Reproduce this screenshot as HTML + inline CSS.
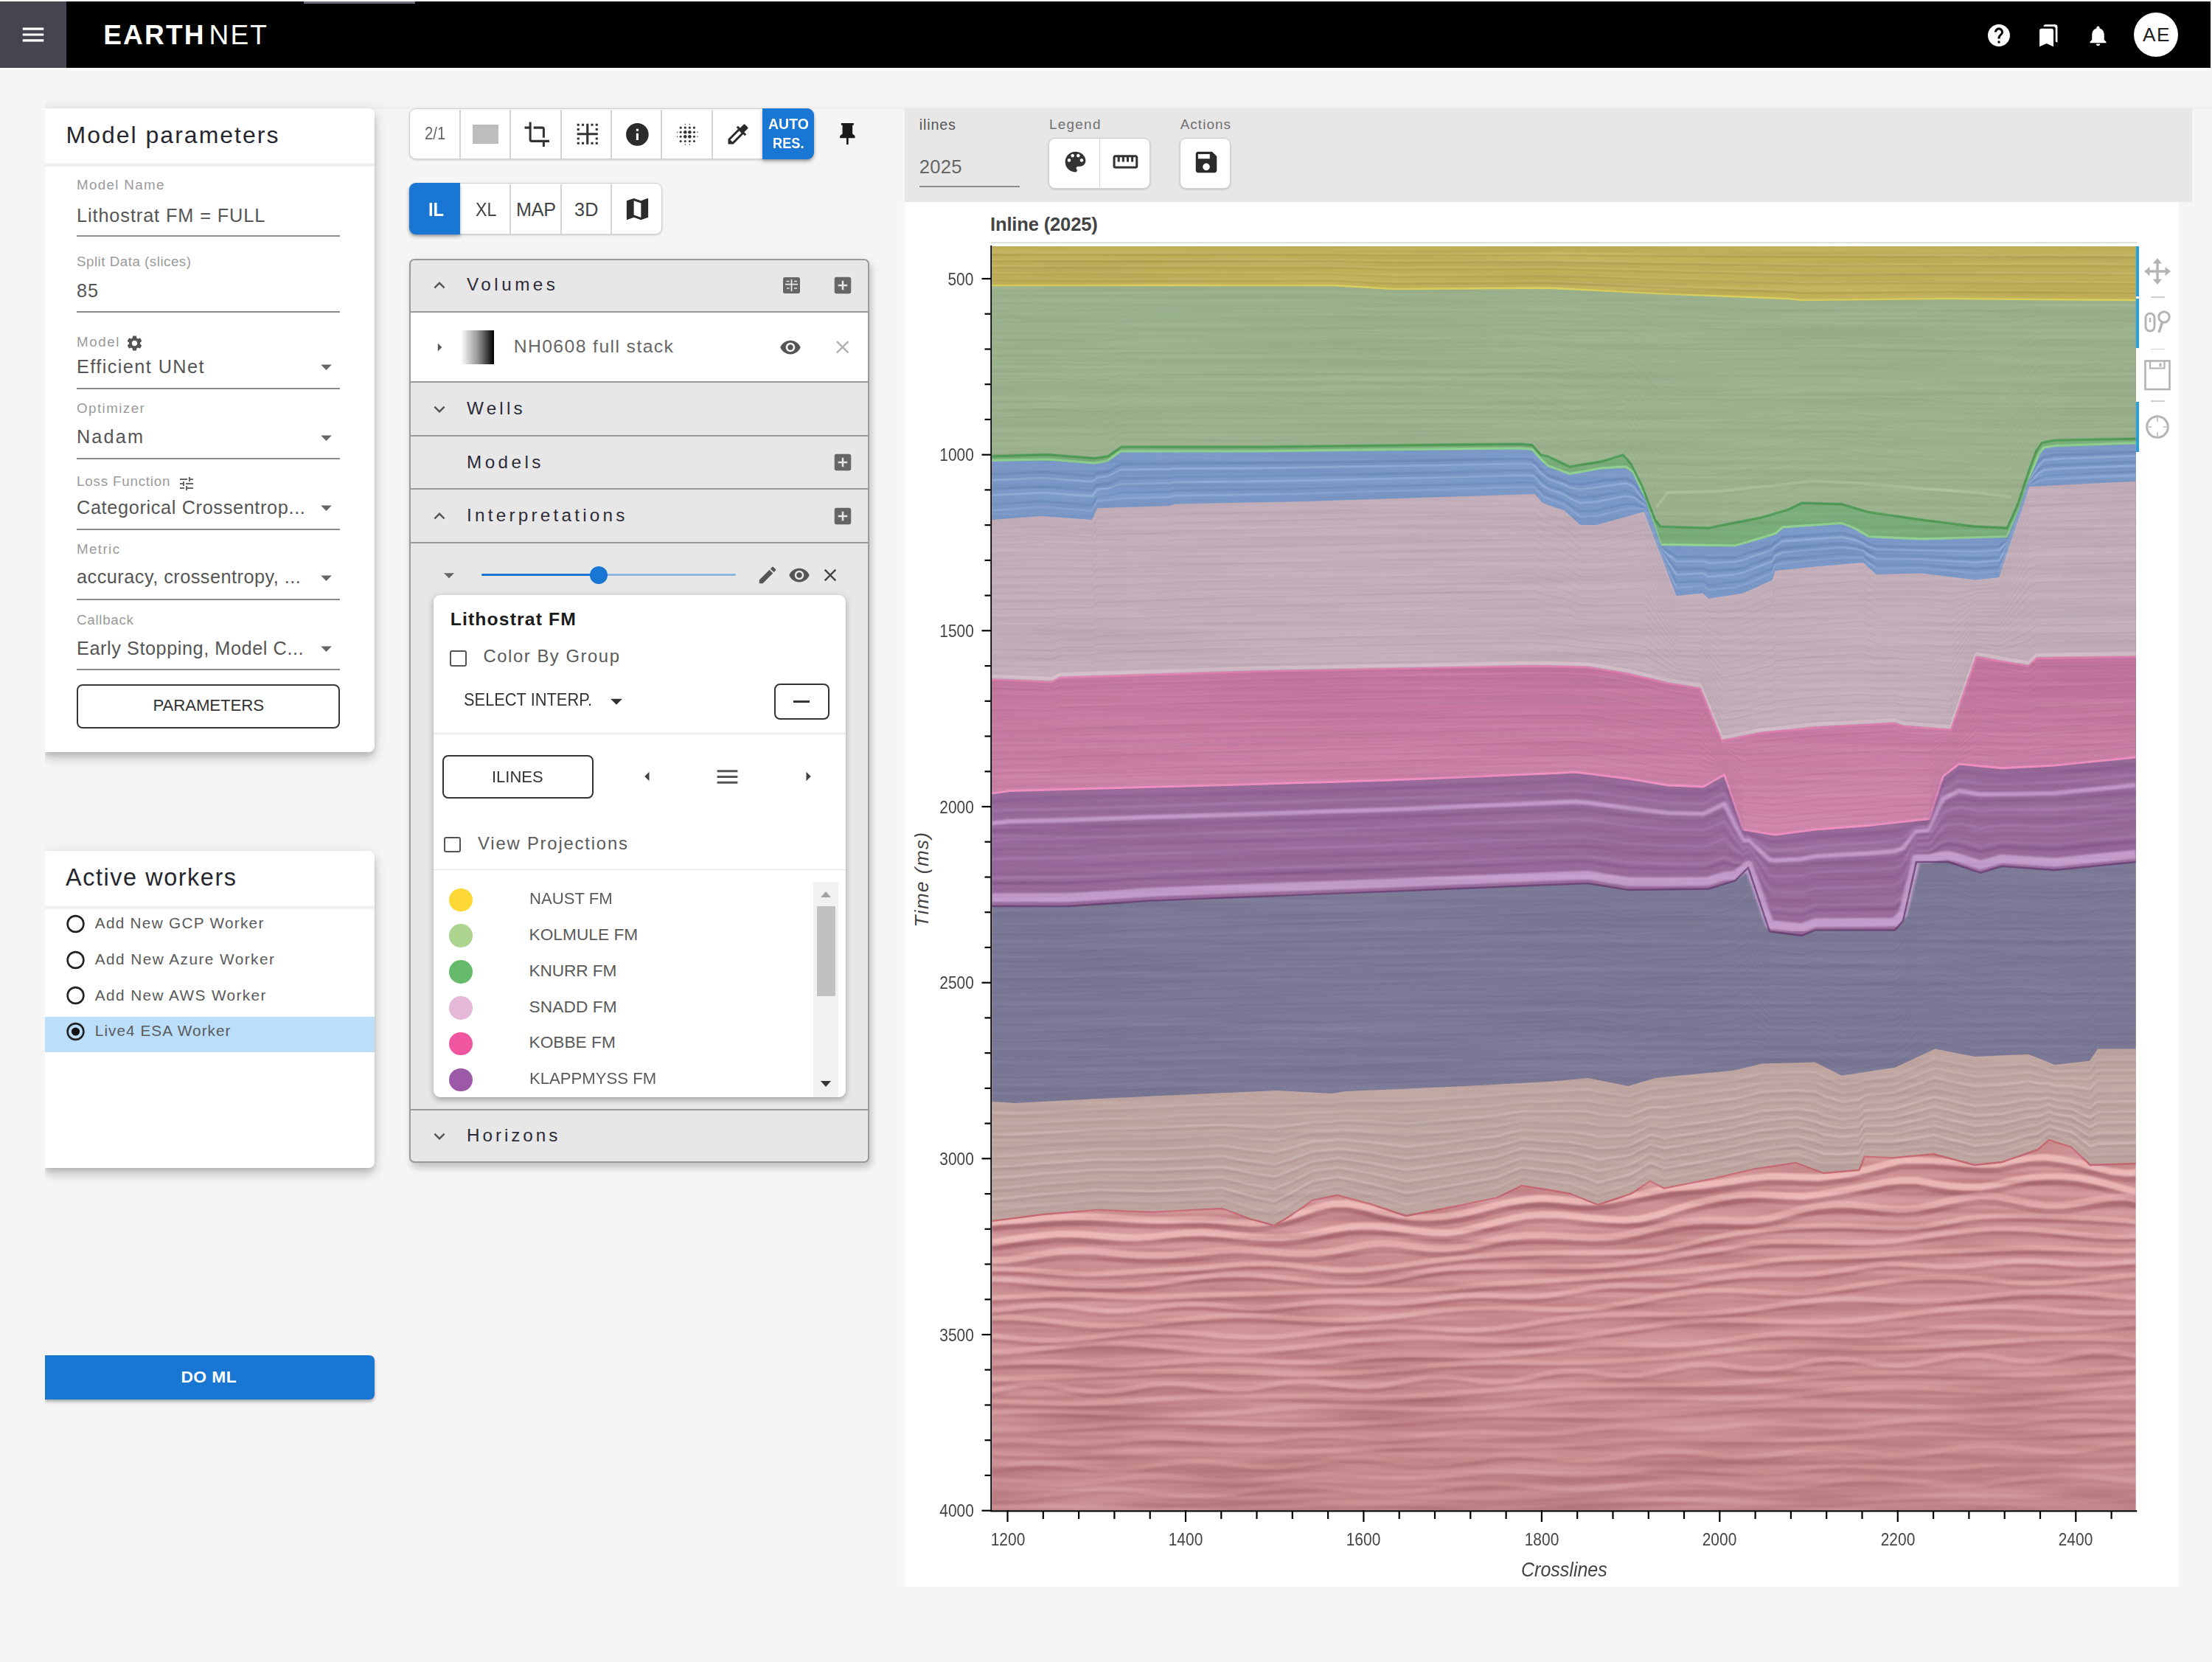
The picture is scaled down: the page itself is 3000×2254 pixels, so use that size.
<!DOCTYPE html>
<html lang="en"><head><meta charset="utf-8"><title>EarthNET</title><style>
html,body{margin:0;padding:0}
body{width:3000px;height:2254px;overflow:hidden;background:#f5f5f5;position:relative;font-family:"Liberation Sans",sans-serif}
.t{position:absolute;white-space:nowrap;line-height:1;margin:0;padding:0}
.b{position:absolute;display:block}
.clipL{position:absolute;left:61px;top:92px;width:2939px;height:2162px;overflow:hidden}
.clipL>*{margin-left:-61px;margin-top:-92px}
</style></head><body>
<div class="b" style="left:0.00px;top:2.00px;width:2998.00px;height:90.00px;background:#000"></div>
<div class="b" style="left:0.00px;top:2.00px;width:90.00px;height:90.00px;background:#45444f"></div>
<div class="b" style="left:412.00px;top:2.00px;width:151.00px;height:3.00px;background:#6f6e78"></div>
<svg class="b" style="left:26.00px;top:28.00px" width="38.00" height="38.00" viewBox="0 0 24 24"><path fill="#fff" d="M3 18h18v-2H3v2zm0-5h18v-2H3v2zm0-7v2h18V6H3z"/></svg>
<div class="t" style="font-size:37.06px;color:#fff;letter-spacing:2.184px;top:28.82px;font-weight:700;left:140.20px;">EARTH</div>
<div class="t" style="font-size:37.06px;color:#fff;letter-spacing:2.235px;top:28.82px;left:283.40px;">NET</div>
<svg class="b" style="left:2692.50px;top:29.50px" width="36.00" height="36.00" viewBox="0 0 24 24"><path fill="#fff" d="M12 2C6.48 2 2 6.48 2 12s4.48 10 10 10 10-4.48 10-10S17.52 2 12 2zm1 17h-2v-2h2v2zm2.07-7.75l-.9.92C13.45 12.9 13 13.5 13 15h-2v-.5c0-1.1.45-2.1 1.17-2.83l1.24-1.26c.37-.36.59-.86.59-1.41 0-1.1-.9-2-2-2s-2 .9-2 2H8c0-2.21 1.79-4 4-4s4 1.79 4 4c0 .88-.36 1.68-.93 2.25z"/></svg>
<svg class="b" style="left:2761.75px;top:31.75px" width="32.50" height="32.50" viewBox="0 0 24 24"><path fill="#fff" d="M19 18l2 1V3c0-1.1-.9-2-2-2H8.99C7.89 1 7 1.9 7 3h10c1.1 0 2 .9 2 2v13zM15 5H5c-1.1 0-2 .9-2 2v16l7-3 7 3V7c0-1.1-.9-2-2-2z"/></svg>
<svg class="b" style="left:2829.00px;top:31.50px" width="33.00" height="33.00" viewBox="0 0 24 24"><path fill="#fff" d="M12 22c1.1 0 2-.9 2-2h-4c0 1.1.89 2 2 2zm6-6v-5c0-3.07-1.64-5.64-4.5-6.32V4c0-.83-.67-1.5-1.5-1.5s-1.5.67-1.5 1.5v.68C7.63 5.36 6 7.92 6 11v5l-2 2v1h16v-1l-2-2z"/></svg>
<div class="b" style="left:2894.30px;top:17.00px;width:60.00px;height:60.00px;background:#fff;border-radius:50%"></div>
<div class="t" style="font-size:26.16px;color:#222;letter-spacing:1.500px;top:33.85px;left:2924.30px;width:0;display:flex;justify-content:center;"><span style="margin-right:-1.500px">AE</span></div>
<div class="b" style="left:0.00px;top:92.00px;width:3000.00px;height:5.00px;background:linear-gradient(#fdfdfd,#f5f5f5)"></div>
<div class="b" style="left:61.00px;top:136.00px;width:2939.00px;height:12.00px;background:linear-gradient(#f5f5f5,#eeeeee)"></div>
<div class="clipL">
<div class="b" style="left:61.00px;top:147.00px;width:447.00px;height:873.00px;background:#fff;border-radius:0 8px 8px 0;box-shadow:0 10px 14px rgba(0,0,0,.13),0 3px 20px rgba(0,0,0,.10),0 4px 6px rgba(0,0,0,.10)"></div>
<div class="b" style="left:61.00px;top:220.00px;width:447.00px;height:6.00px;background:linear-gradient(#fff,#ececec 60%,#f4f4f4)"></div>
<div class="t" style="font-size:31.98px;color:#26262e;letter-spacing:2.019px;top:166.93px;left:89.50px;">Model parameters</div>
<div class="t" style="font-size:18.75px;color:#9a9a9a;letter-spacing:1.345px;top:242.13px;left:104.00px;">Model Name</div>
<div class="t" style="font-size:25.29px;color:#555;letter-spacing:0.903px;top:279.59px;left:104.00px;">Lithostrat FM = FULL</div>
<div class="b" style="left:103.60px;top:318.50px;width:357.60px;height:2.00px;background:#8c8c8c"></div>
<div class="t" style="font-size:18.75px;color:#9a9a9a;letter-spacing:0.507px;top:346.13px;left:104.00px;">Split Data (slices)</div>
<div class="t" style="font-size:25.29px;color:#555;letter-spacing:0.868px;top:381.89px;left:104.00px;">85</div>
<div class="b" style="left:103.60px;top:422.00px;width:357.60px;height:2.00px;background:#8c8c8c"></div>
<div class="t" style="font-size:18.75px;color:#9a9a9a;letter-spacing:1.582px;top:455.13px;left:104.00px;">Model</div>
<div class="t" style="font-size:25.29px;color:#555;letter-spacing:1.419px;top:484.59px;left:104.00px;">Efficient UNet</div>
<div class="b" style="left:103.60px;top:525.60px;width:357.60px;height:2.00px;background:#8c8c8c"></div>
<svg class="b" style="left:424.80px;top:480.20px" width="35.00" height="35.00" viewBox="0 0 24 24"><path fill="#666" d="M7 10l5 5 5-5z"/></svg>
<svg class="b" style="left:169.50px;top:452.50px" width="25.00" height="25.00" viewBox="0 0 24 24"><path fill="#555" d="M19.14 12.94c.04-.3.06-.61.06-.94 0-.32-.02-.64-.07-.94l2.03-1.58c.18-.14.23-.41.12-.61l-1.92-3.32c-.12-.22-.37-.29-.59-.22l-2.39.96c-.5-.38-1.03-.7-1.62-.94l-.36-2.54c-.04-.24-.24-.41-.48-.41h-3.84c-.24 0-.43.17-.47.41l-.36 2.54c-.59.24-1.13.57-1.62.94l-2.39-.96c-.22-.08-.47 0-.59.22L2.74 8.87c-.12.21-.08.47.12.61l2.03 1.58c-.05.3-.09.63-.09.94s.02.64.07.94l-2.03 1.58c-.18.14-.23.41-.12.61l1.92 3.32c.12.22.37.29.59.22l2.39-.96c.5.38 1.03.7 1.62.94l.36 2.54c.05.24.24.41.48.41h3.84c.24 0 .44-.17.47-.41l.36-2.54c.59-.24 1.13-.56 1.62-.94l2.39.96c.22.08.47 0 .59-.22l1.92-3.32c.12-.22.07-.47-.12-.61l-2.01-1.58zM12 15.6c-1.98 0-3.6-1.62-3.6-3.6s1.62-3.6 3.6-3.6 3.6 1.62 3.6 3.6-1.62 3.6-3.6 3.6z"/></svg>
<div class="t" style="font-size:18.75px;color:#9a9a9a;letter-spacing:1.447px;top:545.13px;left:104.00px;">Optimizer</div>
<div class="t" style="font-size:25.29px;color:#555;letter-spacing:2.117px;top:580.29px;left:104.00px;">Nadam</div>
<div class="b" style="left:103.60px;top:621.00px;width:357.60px;height:2.00px;background:#8c8c8c"></div>
<svg class="b" style="left:424.80px;top:575.90px" width="35.00" height="35.00" viewBox="0 0 24 24"><path fill="#666" d="M7 10l5 5 5-5z"/></svg>
<div class="t" style="font-size:18.75px;color:#9a9a9a;letter-spacing:0.814px;top:644.13px;left:104.00px;">Loss Function</div>
<div class="t" style="font-size:25.29px;color:#555;letter-spacing:0.648px;top:675.59px;left:104.00px;">Categorical Crossentrop...</div>
<div class="b" style="left:103.60px;top:716.80px;width:357.60px;height:2.00px;background:#8c8c8c"></div>
<svg class="b" style="left:424.80px;top:671.20px" width="35.00" height="35.00" viewBox="0 0 24 24"><path fill="#666" d="M7 10l5 5 5-5z"/></svg>
<svg class="b" style="left:240.80px;top:643.60px" width="24.00" height="24.00" viewBox="0 0 24 24"><path fill="#666" d="M3 17v2h6v-2H3zM3 5v2h10V5H3zm10 16v-2h8v-2h-8v-2h-2v6h2zM7 9v2H3v2h4v2h2V9H7zm14 4v-2H11v2h10zm-6-4h2V7h4V5h-4V3h-2v6z"/></svg>
<div class="t" style="font-size:18.75px;color:#9a9a9a;letter-spacing:1.392px;top:735.53px;left:104.00px;">Metric</div>
<div class="t" style="font-size:25.29px;color:#555;letter-spacing:0.484px;top:770.19px;left:104.00px;">accuracy, crossentropy, ...</div>
<div class="b" style="left:103.60px;top:812.30px;width:357.60px;height:2.00px;background:#8c8c8c"></div>
<svg class="b" style="left:424.80px;top:765.80px" width="35.00" height="35.00" viewBox="0 0 24 24"><path fill="#666" d="M7 10l5 5 5-5z"/></svg>
<div class="t" style="font-size:18.75px;color:#9a9a9a;letter-spacing:0.727px;top:831.63px;left:104.00px;">Callback</div>
<div class="t" style="font-size:25.29px;color:#555;letter-spacing:0.556px;top:866.59px;left:104.00px;">Early Stopping, Model C...</div>
<div class="b" style="left:103.60px;top:906.70px;width:357.60px;height:2.00px;background:#8c8c8c"></div>
<svg class="b" style="left:424.80px;top:862.20px" width="35.00" height="35.00" viewBox="0 0 24 24"><path fill="#666" d="M7 10l5 5 5-5z"/></svg>
<div class="b" style="left:103.60px;top:928.30px;width:357.60px;height:59.40px;border:2.4px solid #383838;border-radius:8px;box-sizing:border-box;background:#fff"></div>
<div class="t" style="font-size:22.24px;color:#333;letter-spacing:-0.120px;top:945.97px;left:207.50px;">PARAMETERS</div>
<div class="b" style="left:61.00px;top:1154.00px;width:447.00px;height:430.00px;background:#fff;border-radius:0 8px 8px 0;box-shadow:0 10px 14px rgba(0,0,0,.13),0 3px 20px rgba(0,0,0,.10),0 4px 6px rgba(0,0,0,.10)"></div>
<div class="b" style="left:61.00px;top:1227.00px;width:447.00px;height:6.00px;background:linear-gradient(#fff,#ececec 60%,#f4f4f4)"></div>
<div class="t" style="font-size:32.41px;color:#26262e;letter-spacing:1.559px;top:1173.56px;left:89.00px;">Active workers</div>
<div class="b" style="left:61.00px;top:1379.00px;width:447.00px;height:48.00px;background:#bbdefb"></div>
<svg class="b" style="left:88px;top:1238.0px" width="30" height="30" viewBox="0 0 30 30"><circle cx="14.5" cy="15" r="10.9" fill="none" stroke="#222" stroke-width="2.6"/></svg>
<div class="t" style="font-size:20.78px;color:#5a5a5a;letter-spacing:1.267px;top:1242.30px;left:128.80px;">Add New GCP Worker</div>
<svg class="b" style="left:88px;top:1286.7px" width="30" height="30" viewBox="0 0 30 30"><circle cx="14.5" cy="15" r="10.9" fill="none" stroke="#222" stroke-width="2.6"/></svg>
<div class="t" style="font-size:20.78px;color:#5a5a5a;letter-spacing:1.451px;top:1291.00px;left:128.80px;">Add New Azure Worker</div>
<svg class="b" style="left:88px;top:1335.4px" width="30" height="30" viewBox="0 0 30 30"><circle cx="14.5" cy="15" r="10.9" fill="none" stroke="#222" stroke-width="2.6"/></svg>
<div class="t" style="font-size:20.78px;color:#5a5a5a;letter-spacing:1.411px;top:1339.70px;left:128.80px;">Add New AWS Worker</div>
<svg class="b" style="left:88px;top:1384.1px" width="30" height="30" viewBox="0 0 30 30"><circle cx="14.5" cy="15" r="10.9" fill="none" stroke="#222" stroke-width="2.6"/><circle cx="14.5" cy="15" r="5.6" fill="#111"/></svg>
<div class="t" style="font-size:20.78px;color:#5a5a5a;letter-spacing:1.041px;top:1388.40px;left:128.80px;">Live4 ESA Worker</div>
<div class="b" style="left:61.00px;top:1837.50px;width:447.00px;height:60.20px;background:#1976d2;border-radius:0 7px 7px 0;box-shadow:0 3px 4px rgba(0,0,0,.3)"></div>
<div class="t" style="font-size:22.82px;color:#fff;letter-spacing:0.395px;top:1855.68px;font-weight:700;left:245.50px;">DO ML</div>
</div>
<div class="b" style="left:554.80px;top:146.80px;width:548.70px;height:69.60px;background:#fff;border:1.5px solid #cfcfcf;border-radius:9px;box-sizing:border-box;box-shadow:0 1px 3px rgba(0,0,0,.18);"></div>
<div class="b" style="left:623.25px;top:148.50px;width:1.50px;height:66.50px;background:#d4d4d4"></div>
<div class="b" style="left:691.25px;top:148.50px;width:1.50px;height:66.50px;background:#d4d4d4"></div>
<div class="b" style="left:760.25px;top:148.50px;width:1.50px;height:66.50px;background:#d4d4d4"></div>
<div class="b" style="left:828.25px;top:148.50px;width:1.50px;height:66.50px;background:#d4d4d4"></div>
<div class="b" style="left:896.25px;top:148.50px;width:1.50px;height:66.50px;background:#d4d4d4"></div>
<div class="b" style="left:965.25px;top:148.50px;width:1.50px;height:66.50px;background:#d4d4d4"></div>
<div class="b" style="left:1034.00px;top:146.80px;width:69.50px;height:69.60px;background:#1976d2;border-radius:0 9px 9px 0;box-shadow:0 3px 5px rgba(0,0,0,.3)"></div>
<div class="t" style="font-size:24.71px;color:#666;letter-spacing:0.000px;top:169.08px;left:575.80px;transform:scaleX(0.8210);transform-origin:0 50%;">2/1</div>
<div class="b" style="left:641.10px;top:168.50px;width:34.70px;height:26.70px;background:#bdbdbd"></div>
<svg class="b" style="left:709.55px;top:164.25px" width="36.50" height="36.50" viewBox="0 0 24 24"><path fill="#333" d="M17 15h2V7c0-1.1-.9-2-2-2H9v2h8v8zM7 17V1H5v4H1v2h4v10c0 1.1.9 2 2 2h10v4h2v-4h4v-2H7z"/></svg>
<svg class="b" style="left:777.55px;top:163.45px" width="37.50" height="37.50" viewBox="0 0 24 24"><path fill="#333" d="M3 21h2v-2H3v2zm4 0h2v-2H7v2zM5 7H3v2h2V7zM3 17h2v-2H3v2zM9 3H7v2h2V3zM5 3H3v2h2V3zm12 0h-2v2h2V3zm2 6h2V7h-2v2zm0-6v2h2V3h-2zm-4 18h2v-2h-2v2zM13 3h-2v8H3v2h8v8h2v-8h8v-2h-8V3zm6 18h2v-2h-2v2zm0-4h2v-2h-2v2z"/></svg>
<svg class="b" style="left:845.90px;top:163.80px" width="36.80" height="36.80" viewBox="0 0 24 24"><path fill="#2b2b2b" d="M12 2C6.48 2 2 6.48 2 12s4.48 10 10 10 10-4.48 10-10S17.52 2 12 2zm1 15h-2v-6h2v6zm0-8h-2V7h2v2z"/></svg>
<svg class="b" style="left:914.0px;top:163.7px" width="36.6" height="36.6" viewBox="0 0 24 24" fill="#333"><circle cx="6" cy="6" r="1.0"/><circle cx="6" cy="10" r="1.0"/><circle cx="6" cy="14" r="1.0"/><circle cx="6" cy="18" r="1.0"/><circle cx="10" cy="6" r="1.0"/><circle cx="10" cy="10" r="1.5"/><circle cx="10" cy="14" r="1.5"/><circle cx="10" cy="18" r="1.0"/><circle cx="14" cy="6" r="1.0"/><circle cx="14" cy="10" r="1.5"/><circle cx="14" cy="14" r="1.5"/><circle cx="14" cy="18" r="1.0"/><circle cx="18" cy="6" r="1.0"/><circle cx="18" cy="10" r="1.0"/><circle cx="18" cy="14" r="1.0"/><circle cx="18" cy="18" r="1.0"/><circle cx="10" cy="3" r=".5"/><circle cx="3" cy="10" r=".5"/><circle cx="10" cy="21" r=".5"/><circle cx="21" cy="10" r=".5"/><circle cx="14" cy="3" r=".5"/><circle cx="3" cy="14" r=".5"/><circle cx="14" cy="21" r=".5"/><circle cx="21" cy="14" r=".5"/></svg>
<svg class="b" style="left:982.80px;top:164.20px" width="36.00" height="36.00" viewBox="0 0 24 24"><path fill="#2b2b2b" d="M20.71 5.63l-2.34-2.34c-.39-.39-1.02-.39-1.41 0l-3.12 3.12-1.93-1.91-1.41 1.41 1.42 1.42L3 16.25V21h4.75l8.92-8.92 1.42 1.42 1.41-1.41-1.92-1.92 3.12-3.12c.4-.4.4-1.03.01-1.42zM6.92 19L5 17.08l8.06-8.06 1.92 1.92L6.92 19z"/></svg>
<div class="t" style="font-size:20.35px;color:#fff;letter-spacing:0.000px;top:157.97px;font-weight:700;left:1042.00px;transform:scaleX(0.9602);transform-origin:0 50%;">AUTO</div>
<div class="t" style="font-size:20.35px;color:#fff;letter-spacing:0.000px;top:183.77px;font-weight:700;left:1048.00px;transform:scaleX(0.8948);transform-origin:0 50%;">RES.</div>
<svg class="b" style="left:1128.7px;top:164.1px" width="40.7" height="34.8" viewBox="0 0 24 24" preserveAspectRatio="none"><path fill="#1a1a1a" d="M16,12V4H17V2H7V4H8V12L6,14V16H11.2V22H12.8V16H18V14L16,12Z"/></svg>
<div class="b" style="left:554.80px;top:248.40px;width:343.00px;height:69.80px;background:#fff;border:1.5px solid #cfcfcf;border-radius:9px;box-sizing:border-box;box-shadow:0 1px 3px rgba(0,0,0,.18);"></div>
<div class="b" style="left:691.25px;top:250.00px;width:1.50px;height:66.50px;background:#d4d4d4"></div>
<div class="b" style="left:760.25px;top:250.00px;width:1.50px;height:66.50px;background:#d4d4d4"></div>
<div class="b" style="left:828.25px;top:250.00px;width:1.50px;height:66.50px;background:#d4d4d4"></div>
<div class="b" style="left:554.80px;top:248.40px;width:69.20px;height:69.80px;background:#1976d2;border-radius:9px 0 0 9px;box-shadow:0 3px 5px rgba(0,0,0,.3)"></div>
<div class="t" style="font-size:25.15px;color:#fff;letter-spacing:0.000px;top:271.71px;font-weight:700;left:581.00px;transform:scaleX(0.9398);transform-origin:0 50%;">IL</div>
<div class="t" style="font-size:25.15px;color:#444;letter-spacing:0.000px;top:271.71px;left:645.00px;transform:scaleX(0.9233);transform-origin:0 50%;">XL</div>
<div class="t" style="font-size:25.15px;color:#444;letter-spacing:-0.246px;top:271.71px;left:700.00px;">MAP</div>
<div class="t" style="font-size:25.15px;color:#444;letter-spacing:0.355px;top:271.71px;left:779.00px;">3D</div>
<svg class="b" style="left:844.90px;top:264.20px" width="39.00" height="39.00" viewBox="0 0 24 24"><path fill="#2b2b2b" d="M20.5 3l-.16.03L15 5.1 9 3 3.36 4.9c-.21.07-.36.25-.36.48V20.5c0 .28.22.5.5.5l.16-.03L9 18.9l6 2.1 5.64-1.9c.21-.07.36-.25.36-.48V3.5c0-.28-.22-.5-.5-.5zM15 19l-6-2.11V5l6 2.11V19z"/></svg>
<div class="b" style="left:554.70px;top:350.60px;width:624.30px;height:1226.40px;background:#e7e7e7;border:2px solid #9a9a9a;border-radius:7px;box-sizing:border-box;box-shadow:3px 7px 9px rgba(0,0,0,.15),2px 3px 14px rgba(0,0,0,.08)"></div>
<div class="b" style="left:556.70px;top:423.00px;width:620.30px;height:95.30px;background:#fff"></div>
<div class="b" style="left:555.20px;top:422.00px;width:623.30px;height:2.00px;background:#9a9a9a"></div>
<div class="b" style="left:555.20px;top:517.30px;width:623.30px;height:2.00px;background:#9a9a9a"></div>
<div class="b" style="left:555.20px;top:590.00px;width:623.30px;height:2.00px;background:#9a9a9a"></div>
<div class="b" style="left:555.20px;top:662.00px;width:623.30px;height:2.00px;background:#9a9a9a"></div>
<div class="b" style="left:555.20px;top:734.60px;width:623.30px;height:2.00px;background:#9a9a9a"></div>
<div class="b" style="left:555.20px;top:1503.60px;width:623.30px;height:2.00px;background:#9a9a9a"></div>
<div class="t" style="font-size:24.27px;color:#2b2b36;letter-spacing:4.483px;top:374.45px;left:633.00px;">Volumes</div>
<svg class="b" style="left:580.50px;top:371.80px" width="30.00" height="30.00" viewBox="0 0 24 24"><path fill="#555" d="M12 8l-6 6 1.41 1.41L12 10.83l4.59 4.58L18 14z"/></svg>
<div class="t" style="font-size:24.27px;color:#2b2b36;letter-spacing:4.176px;top:542.15px;left:633.00px;">Wells</div>
<svg class="b" style="left:580.50px;top:539.50px" width="30.00" height="30.00" viewBox="0 0 24 24"><path fill="#555" d="M16.59 8.59L12 13.17 7.41 8.59 6 10l6 6 6-6z"/></svg>
<div class="t" style="font-size:24.27px;color:#2b2b36;letter-spacing:4.430px;top:615.25px;left:633.00px;">Models</div>
<div class="t" style="font-size:24.27px;color:#2b2b36;letter-spacing:4.231px;top:687.45px;left:633.00px;">Interpretations</div>
<svg class="b" style="left:580.50px;top:684.60px" width="30.00" height="30.00" viewBox="0 0 24 24"><path fill="#555" d="M12 8l-6 6 1.41 1.41L12 10.83l4.59 4.58L18 14z"/></svg>
<div class="t" style="font-size:24.27px;color:#2b2b36;letter-spacing:3.946px;top:1528.25px;left:633.00px;">Horizons</div>
<svg class="b" style="left:580.50px;top:1525.50px" width="30.00" height="30.00" viewBox="0 0 24 24"><path fill="#555" d="M16.59 8.59L12 13.17 7.41 8.59 6 10l6 6 6-6z"/></svg>
<svg class="b" style="left:1127.50px;top:372.00px" width="30.00" height="30.00" viewBox="0 0 24 24"><path fill="#666" d="M19 3H5c-1.11 0-2 .9-2 2v14c0 1.1.89 2 2 2h14c1.1 0 2-.9 2-2V5c0-1.1-.9-2-2-2zm-2 10h-4v4h-2v-4H7v-2h4V7h2v4h4v2z"/></svg>
<svg class="b" style="left:1127.50px;top:612.00px" width="30.00" height="30.00" viewBox="0 0 24 24"><path fill="#666" d="M19 3H5c-1.11 0-2 .9-2 2v14c0 1.1.89 2 2 2h14c1.1 0 2-.9 2-2V5c0-1.1-.9-2-2-2zm-2 10h-4v4h-2v-4H7v-2h4V7h2v4h4v2z"/></svg>
<svg class="b" style="left:1127.50px;top:684.60px" width="30.00" height="30.00" viewBox="0 0 24 24"><path fill="#666" d="M19 3H5c-1.11 0-2 .9-2 2v14c0 1.1.89 2 2 2h14c1.1 0 2-.9 2-2V5c0-1.1-.9-2-2-2zm-2 10h-4v4h-2v-4H7v-2h4V7h2v4h4v2z"/></svg>
<svg class="b" style="left:1062px;top:376px" width="23" height="22" viewBox="0 0 23 22"><rect width="23" height="22" rx="2.5" fill="#666"/><path d="M3 9.7h17M11.5 3v16" stroke="#e7e7e7" stroke-width="1.8"/><path d="M4.5 5.5h4M15 5.5h4M5 15h3.5M15 15h4" stroke="#e7e7e7" stroke-width="1.6"/></svg>
<svg class="b" style="left:583.00px;top:457.60px" width="26.00" height="26.00" viewBox="0 0 24 24"><path fill="#555" d="M10 17l5-5-5-5v10z"/></svg>
<div class="b" style="left:625.00px;top:447.60px;width:45.40px;height:46.40px;background:linear-gradient(90deg,#fff 0%,#999 50%,#000 100%)"></div>
<div class="t" style="font-size:24.71px;color:#666;letter-spacing:1.416px;top:458.28px;left:696.70px;">NH0608 full stack</div>
<svg class="b" style="left:1057.20px;top:456.00px" width="30.00" height="30.00" viewBox="0 0 24 24"><path fill="#555" d="M12 4.5C7 4.5 2.73 7.61 1 12c1.73 4.39 6 7.5 11 7.5s9.27-3.11 11-7.5c-1.73-4.39-6-7.5-11-7.5zM12 17c-2.76 0-5-2.24-5-5s2.24-5 5-5 5 2.24 5 5-2.24 5-5 5zm0-8c-1.66 0-3 1.34-3 3s1.34 3 3 3 3-1.34 3-3-1.34-3-3-3z"/></svg>
<svg class="b" style="left:1127.85px;top:456.25px" width="29.50" height="29.50" viewBox="0 0 24 24"><path fill="#b0b0b0" d="M19 6.41L17.59 5 12 10.59 6.41 5 5 6.41 10.59 12 5 17.59 6.41 19 12 13.41 17.59 19 19 17.59 13.41 12z"/></svg>
<svg class="b" style="left:592.30px;top:762.70px" width="34.00" height="34.00" viewBox="0 0 24 24"><path fill="#666" d="M7 10l5 5 5-5z"/></svg>
<div class="b" style="left:652.80px;top:777.70px;width:345.20px;height:3.60px;background:#8fb6e3;border-radius:2px"></div>
<div class="b" style="left:652.80px;top:777.70px;width:160.00px;height:3.70px;background:#1976d2;border-radius:2px"></div>
<div class="b" style="left:800.00px;top:767.50px;width:24.00px;height:24.00px;background:#1976d2;border-radius:50%"></div>
<svg class="b" style="left:1026.00px;top:764.50px" width="30.00" height="30.00" viewBox="0 0 24 24"><path fill="#555" d="M3 17.25V21h3.75L17.81 9.94l-3.75-3.75L3 17.25zM20.71 7.04c.39-.39.39-1.02 0-1.41l-2.34-2.34c-.39-.39-1.02-.39-1.41 0l-1.83 1.83 3.75 3.75 1.83-1.83z"/></svg>
<svg class="b" style="left:1069.30px;top:764.50px" width="30.00" height="30.00" viewBox="0 0 24 24"><path fill="#555" d="M12 4.5C7 4.5 2.73 7.61 1 12c1.73 4.39 6 7.5 11 7.5s9.27-3.11 11-7.5c-1.73-4.39-6-7.5-11-7.5zM12 17c-2.76 0-5-2.24-5-5s2.24-5 5-5 5 2.24 5 5-2.24 5-5 5zm0-8c-1.66 0-3 1.34-3 3s1.34 3 3 3 3-1.34 3-3-1.34-3-3-3z"/></svg>
<svg class="b" style="left:1112.40px;top:765.50px" width="28.00" height="28.00" viewBox="0 0 24 24"><path fill="#444" d="M19 6.41L17.59 5 12 10.59 6.41 5 5 6.41 10.59 12 5 17.59 6.41 19 12 13.41 17.59 19 19 17.59 13.41 12z"/></svg>
<div class="b" style="left:588.30px;top:807.20px;width:558.30px;height:680.80px;background:#fff;border-radius:9px;box-shadow:0 4px 7px rgba(0,0,0,.2),0 1px 12px rgba(0,0,0,.12)"></div>
<div class="t" style="font-size:24.71px;color:#1c1c1c;letter-spacing:1.152px;top:827.88px;font-weight:700;left:610.70px;">Lithostrat FM</div>
<div class="b" style="left:609.50px;top:881.80px;width:23.00px;height:22.20px;border:2.4px solid #555;border-radius:3px;box-sizing:border-box"></div>
<div class="t" style="font-size:23.84px;color:#5a5a5a;letter-spacing:1.555px;top:878.32px;left:655.50px;">Color By Group</div>
<div class="t" style="font-size:23.11px;color:#333;letter-spacing:0.000px;top:938.03px;left:628.60px;transform:scaleX(0.9451);transform-origin:0 50%;">SELECT INTERP.</div>
<svg class="b" style="left:817.00px;top:932.00px" width="38.00" height="38.00" viewBox="0 0 24 24"><path fill="#333" d="M7 10l5 5 5-5z"/></svg>
<div class="b" style="left:1049.60px;top:926.60px;width:75.20px;height:49.40px;border:2.4px solid #333;border-radius:8px;box-sizing:border-box"></div>
<div class="b" style="left:1076.00px;top:949.80px;width:22.00px;height:3.00px;background:#333"></div>
<div class="b" style="left:588.30px;top:992.00px;width:558.30px;height:5.00px;background:linear-gradient(#fff,#ececec 60%,#f6f6f6)"></div>
<div class="b" style="left:600.30px;top:1024.00px;width:204.40px;height:59.00px;border:2.4px solid #333;border-radius:8px;box-sizing:border-box"></div>
<div class="t" style="font-size:22.97px;color:#333;letter-spacing:0.000px;top:1041.56px;left:667.40px;transform:scaleX(0.9566);transform-origin:0 50%;">ILINES</div>
<svg class="b" style="left:862.50px;top:1038.40px" width="30.00" height="30.00" viewBox="0 0 24 24"><path fill="#444" d="M14 7l-5 5 5 5V7z"/></svg>
<svg class="b" style="left:967.80px;top:1034.90px" width="37.00" height="37.00" viewBox="0 0 24 24"><path fill="#555" d="M3 18h18v-2H3v2zm0-5h18v-2H3v2zm0-7v2h18V6H3z"/></svg>
<svg class="b" style="left:1080.50px;top:1038.40px" width="30.00" height="30.00" viewBox="0 0 24 24"><path fill="#444" d="M10 17l5-5-5-5v10z"/></svg>
<div class="b" style="left:601.80px;top:1134.60px;width:23.20px;height:21.60px;border:2.4px solid #555;border-radius:3px;box-sizing:border-box"></div>
<div class="t" style="font-size:23.84px;color:#5a5a5a;letter-spacing:1.814px;top:1131.82px;left:648.00px;">View Projections</div>
<div class="b" style="left:588.30px;top:1178.50px;width:558.30px;height:1.60px;background:#e3e3e3"></div>
<div class="b" style="left:609.20px;top:1204.70px;width:31.60px;height:31.60px;background:#fdd835;border-radius:50%"></div>
<div class="t" style="font-size:22.67px;color:#5a5a5a;letter-spacing:0.000px;top:1207.30px;left:717.50px;transform:scaleX(0.9768);transform-origin:0 50%;">NAUST FM</div>
<div class="b" style="left:609.20px;top:1253.46px;width:31.60px;height:31.60px;background:#aed590;border-radius:50%"></div>
<div class="t" style="font-size:22.67px;color:#5a5a5a;letter-spacing:0.043px;top:1256.06px;left:717.50px;">KOLMULE FM</div>
<div class="b" style="left:609.20px;top:1302.22px;width:31.60px;height:31.60px;background:#66bb6a;border-radius:50%"></div>
<div class="t" style="font-size:22.67px;color:#5a5a5a;letter-spacing:-0.109px;top:1304.82px;left:717.50px;">KNURR FM</div>
<div class="b" style="left:609.20px;top:1350.98px;width:31.60px;height:31.60px;background:#e6b8d8;border-radius:50%"></div>
<div class="t" style="font-size:22.67px;color:#5a5a5a;letter-spacing:0.112px;top:1353.58px;left:717.50px;">SNADD FM</div>
<div class="b" style="left:609.20px;top:1399.74px;width:31.60px;height:31.60px;background:#f0569f;border-radius:50%"></div>
<div class="t" style="font-size:22.67px;color:#5a5a5a;letter-spacing:0.032px;top:1402.34px;left:717.50px;">KOBBE FM</div>
<div class="b" style="left:609.20px;top:1448.50px;width:31.60px;height:31.60px;background:#9b59a8;border-radius:50%"></div>
<div class="t" style="font-size:22.67px;color:#5a5a5a;letter-spacing:0.000px;top:1451.10px;left:717.50px;transform:scaleX(0.9767);transform-origin:0 50%;">KLAPPMYSS FM</div>
<div class="b" style="left:1103.30px;top:1195.80px;width:33.40px;height:292.20px;background:#f1f1f1"></div>
<div class="b" style="left:1107.80px;top:1228.60px;width:25.20px;height:122.40px;background:#c1c1c1"></div>
<svg class="b" style="left:1113px;top:1209px" width="14" height="8" viewBox="0 0 14 8"><path d="M0 8L7 0l7 8z" fill="#a3a3a3"/></svg>
<svg class="b" style="left:1113px;top:1466px" width="14" height="8" viewBox="0 0 14 8"><path d="M0 0l7 8 7-8z" fill="#333"/></svg>
<div class="b" style="left:1227.00px;top:147.00px;width:1746.00px;height:126.70px;background:#e7e7e7"></div>
<div class="b" style="left:1221.00px;top:273.70px;width:8.00px;height:1878.00px;background:linear-gradient(90deg,#f5f5f5,#fbfbfb)"></div>
<div class="b" style="left:1228.50px;top:273.70px;width:1726.50px;height:1878.00px;background:#fff"></div>
<div class="t" style="font-size:19.77px;color:#555;letter-spacing:0.830px;top:159.86px;left:1246.80px;">ilines</div>
<div class="t" style="font-size:25.58px;color:#666;letter-spacing:0.230px;top:213.94px;left:1246.80px;">2025</div>
<div class="b" style="left:1246.80px;top:252.40px;width:135.80px;height:2.00px;background:#8c8c8c"></div>
<div class="t" style="font-size:18.90px;color:#707070;letter-spacing:1.269px;top:160.40px;left:1423.00px;">Legend</div>
<div class="t" style="font-size:18.90px;color:#707070;letter-spacing:1.056px;top:160.40px;left:1600.70px;">Actions</div>
<div class="b" style="left:1422.30px;top:186.50px;width:137.50px;height:69.20px;background:#fff;border:1.5px solid #cfcfcf;border-radius:9px;box-sizing:border-box;box-shadow:0 1px 3px rgba(0,0,0,.18);"></div>
<div class="b" style="left:1490.70px;top:188.00px;width:1.50px;height:66.00px;background:#d4d4d4"></div>
<div class="b" style="left:1600.00px;top:186.50px;width:69.40px;height:69.20px;background:#fff;border:1.5px solid #cfcfcf;border-radius:9px;box-sizing:border-box;box-shadow:0 1px 3px rgba(0,0,0,.18);"></div>
<svg class="b" style="left:1439.70px;top:201.30px" width="37.00" height="37.00" viewBox="0 0 24 24"><path fill="#333" d="M12 3c-4.97 0-9 4.03-9 9s4.03 9 9 9c.83 0 1.5-.67 1.5-1.5 0-.39-.15-.74-.39-1.01-.23-.26-.38-.61-.38-.99 0-.83.67-1.5 1.5-1.5H16c2.76 0 5-2.24 5-5 0-4.42-4.03-8-9-8zm-5.500 9c-.83 0-1.5-.67-1.5-1.5S5.670 9 6.500 9 8 9.670 8 10.500 7.330 12 6.500 12zm3-4C8.670 8 8 7.330 8 6.500S8.670 5 9.500 5s1.500.67 1.500 1.500S10.330 8 9.500 8zm5 0c-.83 0-1.5-.67-1.5-1.5S13.670 5 14.500 5s1.500.67 1.500 1.500S15.330 8 14.500 8zm3 4c-.83 0-1.5-.67-1.5-1.5S16.670 9 17.500 9s1.500.67 1.500 1.500-.67 1.500-1.500 1.500z"/></svg>
<svg class="b" style="left:1508.10px;top:201.40px" width="36.80" height="36.80" viewBox="0 0 24 24"><path fill="#333" d="M21 6H3c-1.1 0-2 .9-2 2v8c0 1.1.9 2 2 2h18c1.1 0 2-.9 2-2V8c0-1.1-.9-2-2-2zm0 10H3V8h2v4h2V8h2v4h2V8h2v4h2V8h2v4h2V8h2v8z"/></svg>
<svg class="b" style="left:1616.80px;top:201.30px" width="38.00" height="38.00" viewBox="0 0 24 24"><path fill="#2b2b2b" d="M17 3H5c-1.11 0-2 .9-2 2v14c0 1.1.89 2 2 2h14c1.1 0 2-.9 2-2V7l-4-4zm-5 16c-1.66 0-3-1.34-3-3s1.34-3 3-3 3 1.34 3 3-1.34 3-3 3zm3-10H5V5h10v4z"/></svg>
<div class="t" style="font-size:25.58px;color:#444;letter-spacing:-0.172px;top:292.34px;font-weight:700;left:1343.00px;">Inline (2025)</div>
<svg class="b" style="left:0;top:0" width="3000" height="2254" viewBox="0 0 3000 2254"><rect x="1343.3" y="333" width="2" height="1717" fill="#000"/><rect x="1343.3" y="2048.2" width="1555" height="2.2" fill="#000"/><rect x="1343.3" y="328.4" width="1555" height="1.2" fill="#c9d2c4"/><rect x="1331.5" y="376.9" width="14" height="2.2" fill="#000"/><rect x="1335.5" y="424.6" width="8" height="2.2" fill="#000"/><rect x="1335.5" y="472.4" width="8" height="2.2" fill="#000"/><rect x="1335.5" y="520.1" width="8" height="2.2" fill="#000"/><rect x="1335.5" y="567.8" width="8" height="2.2" fill="#000"/><rect x="1331.5" y="615.6" width="14" height="2.2" fill="#000"/><rect x="1335.5" y="663.3" width="8" height="2.2" fill="#000"/><rect x="1335.5" y="711.0" width="8" height="2.2" fill="#000"/><rect x="1335.5" y="758.8" width="8" height="2.2" fill="#000"/><rect x="1335.5" y="806.5" width="8" height="2.2" fill="#000"/><rect x="1331.5" y="854.2" width="14" height="2.2" fill="#000"/><rect x="1335.5" y="902.0" width="8" height="2.2" fill="#000"/><rect x="1335.5" y="949.7" width="8" height="2.2" fill="#000"/><rect x="1335.5" y="997.4" width="8" height="2.2" fill="#000"/><rect x="1335.5" y="1045.2" width="8" height="2.2" fill="#000"/><rect x="1331.5" y="1092.9" width="14" height="2.2" fill="#000"/><rect x="1335.5" y="1140.6" width="8" height="2.2" fill="#000"/><rect x="1335.5" y="1188.4" width="8" height="2.2" fill="#000"/><rect x="1335.5" y="1236.1" width="8" height="2.2" fill="#000"/><rect x="1335.5" y="1283.8" width="8" height="2.2" fill="#000"/><rect x="1331.5" y="1331.6" width="14" height="2.2" fill="#000"/><rect x="1335.5" y="1379.3" width="8" height="2.2" fill="#000"/><rect x="1335.5" y="1427.0" width="8" height="2.2" fill="#000"/><rect x="1335.5" y="1474.8" width="8" height="2.2" fill="#000"/><rect x="1335.5" y="1522.5" width="8" height="2.2" fill="#000"/><rect x="1331.5" y="1570.2" width="14" height="2.2" fill="#000"/><rect x="1335.5" y="1618.0" width="8" height="2.2" fill="#000"/><rect x="1335.5" y="1665.7" width="8" height="2.2" fill="#000"/><rect x="1335.5" y="1713.4" width="8" height="2.2" fill="#000"/><rect x="1335.5" y="1761.2" width="8" height="2.2" fill="#000"/><rect x="1331.5" y="1808.9" width="14" height="2.2" fill="#000"/><rect x="1335.5" y="1856.6" width="8" height="2.2" fill="#000"/><rect x="1335.5" y="1904.4" width="8" height="2.2" fill="#000"/><rect x="1335.5" y="1952.1" width="8" height="2.2" fill="#000"/><rect x="1335.5" y="1999.8" width="8" height="2.2" fill="#000"/><rect x="1331.5" y="2047.6" width="14" height="2.2" fill="#000"/><rect x="1365.4" y="2045" width="2.2" height="19" fill="#000"/><rect x="1413.7" y="2049" width="2.2" height="11" fill="#000"/><rect x="1462.0" y="2049" width="2.2" height="11" fill="#000"/><rect x="1510.3" y="2049" width="2.2" height="11" fill="#000"/><rect x="1558.6" y="2049" width="2.2" height="11" fill="#000"/><rect x="1606.9" y="2045" width="2.2" height="19" fill="#000"/><rect x="1655.2" y="2049" width="2.2" height="11" fill="#000"/><rect x="1703.4" y="2049" width="2.2" height="11" fill="#000"/><rect x="1751.7" y="2049" width="2.2" height="11" fill="#000"/><rect x="1800.0" y="2049" width="2.2" height="11" fill="#000"/><rect x="1848.3" y="2045" width="2.2" height="19" fill="#000"/><rect x="1896.6" y="2049" width="2.2" height="11" fill="#000"/><rect x="1944.9" y="2049" width="2.2" height="11" fill="#000"/><rect x="1993.2" y="2049" width="2.2" height="11" fill="#000"/><rect x="2041.5" y="2049" width="2.2" height="11" fill="#000"/><rect x="2089.8" y="2045" width="2.2" height="19" fill="#000"/><rect x="2138.1" y="2049" width="2.2" height="11" fill="#000"/><rect x="2186.4" y="2049" width="2.2" height="11" fill="#000"/><rect x="2234.7" y="2049" width="2.2" height="11" fill="#000"/><rect x="2282.9" y="2049" width="2.2" height="11" fill="#000"/><rect x="2331.2" y="2045" width="2.2" height="19" fill="#000"/><rect x="2379.5" y="2049" width="2.2" height="11" fill="#000"/><rect x="2427.8" y="2049" width="2.2" height="11" fill="#000"/><rect x="2476.1" y="2049" width="2.2" height="11" fill="#000"/><rect x="2524.4" y="2049" width="2.2" height="11" fill="#000"/><rect x="2572.7" y="2045" width="2.2" height="19" fill="#000"/><rect x="2621.0" y="2049" width="2.2" height="11" fill="#000"/><rect x="2669.3" y="2049" width="2.2" height="11" fill="#000"/><rect x="2717.6" y="2049" width="2.2" height="11" fill="#000"/><rect x="2765.9" y="2049" width="2.2" height="11" fill="#000"/><rect x="2814.2" y="2045" width="2.2" height="19" fill="#000"/><rect x="2862.5" y="2049" width="2.2" height="11" fill="#000"/></svg>
<div class="t" style="font-size:24.20px;color:#444;letter-spacing:0.000px;top:366.81px;right:1679.40px;margin-right:0.000px;transform:scaleX(.865);transform-origin:100% 50%;">500</div>
<div class="t" style="font-size:24.20px;color:#444;letter-spacing:0.000px;top:605.48px;right:1679.40px;margin-right:0.000px;transform:scaleX(.865);transform-origin:100% 50%;">1000</div>
<div class="t" style="font-size:24.20px;color:#444;letter-spacing:0.000px;top:844.14px;right:1679.40px;margin-right:0.000px;transform:scaleX(.865);transform-origin:100% 50%;">1500</div>
<div class="t" style="font-size:24.20px;color:#444;letter-spacing:0.000px;top:1082.81px;right:1679.40px;margin-right:0.000px;transform:scaleX(.865);transform-origin:100% 50%;">2000</div>
<div class="t" style="font-size:24.20px;color:#444;letter-spacing:0.000px;top:1321.47px;right:1679.40px;margin-right:0.000px;transform:scaleX(.865);transform-origin:100% 50%;">2500</div>
<div class="t" style="font-size:24.20px;color:#444;letter-spacing:0.000px;top:1560.14px;right:1679.40px;margin-right:0.000px;transform:scaleX(.865);transform-origin:100% 50%;">3000</div>
<div class="t" style="font-size:24.20px;color:#444;letter-spacing:0.000px;top:1798.80px;right:1679.40px;margin-right:0.000px;transform:scaleX(.865);transform-origin:100% 50%;">3500</div>
<div class="t" style="font-size:24.20px;color:#444;letter-spacing:0.000px;top:2037.47px;right:1679.40px;margin-right:0.000px;transform:scaleX(.865);transform-origin:100% 50%;">4000</div>
<div class="t" style="font-size:24.20px;color:#444;letter-spacing:0.000px;top:2075.51px;left:1366.50px;width:0;display:flex;justify-content:center;transform:scaleX(.865);"><span style="margin-right:0.000px">1200</span></div>
<div class="t" style="font-size:24.20px;color:#444;letter-spacing:0.000px;top:2075.51px;left:1607.96px;width:0;display:flex;justify-content:center;transform:scaleX(.865);"><span style="margin-right:0.000px">1400</span></div>
<div class="t" style="font-size:24.20px;color:#444;letter-spacing:0.000px;top:2075.51px;left:1849.42px;width:0;display:flex;justify-content:center;transform:scaleX(.865);"><span style="margin-right:0.000px">1600</span></div>
<div class="t" style="font-size:24.20px;color:#444;letter-spacing:0.000px;top:2075.51px;left:2090.88px;width:0;display:flex;justify-content:center;transform:scaleX(.865);"><span style="margin-right:0.000px">1800</span></div>
<div class="t" style="font-size:24.20px;color:#444;letter-spacing:0.000px;top:2075.51px;left:2332.34px;width:0;display:flex;justify-content:center;transform:scaleX(.865);"><span style="margin-right:0.000px">2000</span></div>
<div class="t" style="font-size:24.20px;color:#444;letter-spacing:0.000px;top:2075.51px;left:2573.80px;width:0;display:flex;justify-content:center;transform:scaleX(.865);"><span style="margin-right:0.000px">2200</span></div>
<div class="t" style="font-size:24.20px;color:#444;letter-spacing:0.000px;top:2075.51px;left:2815.26px;width:0;display:flex;justify-content:center;transform:scaleX(.865);"><span style="margin-right:0.000px">2400</span></div>
<div class="t" style="font-size:28.00px;color:#444;letter-spacing:0.000px;top:2114.50px;font-style:italic;left:2063.00px;transform:scaleX(0.8936);transform-origin:0 50%;">Crosslines</div>
<div class="t" style="left:1259.3px;top:1192px;width:0;height:0"><div class="t" style="left:0;top:0;transform:rotate(-90deg);transform-origin:0 0"><div class="t" style="left:-65.5px;top:-22.01px;font-size:26px;font-style:italic;color:#444;letter-spacing:1.5px">Time (ms)</div></div></div>
<div class="b" style="left:2896.80px;top:333.70px;width:3.80px;height:68.30px;background:#27a1de"></div>
<div class="b" style="left:2896.80px;top:405.00px;width:3.80px;height:66.60px;background:#27a1de"></div>
<div class="b" style="left:2896.80px;top:545.00px;width:3.80px;height:67.60px;background:#27a1de"></div>
<div class="b" style="left:2916.50px;top:402.20px;width:19.50px;height:1.60px;background:#cfcfcf"></div>
<div class="b" style="left:2916.50px;top:472.90px;width:19.50px;height:1.60px;background:#cfcfcf"></div>
<div class="b" style="left:2916.50px;top:543.20px;width:19.50px;height:1.60px;background:#cfcfcf"></div>
<svg class="b" style="left:2908px;top:349.8px" width="36" height="36" viewBox="-18 -18 36 36" fill="#b4b4b4" stroke="none"><path d="M-1.7-11h3.4v22h-3.4zM-11-1.7h22v3.400h-22z"/><path d="M0-18l6.2 7.500h-12.400zM0 18l6.200-7.500h-12.400zM-18 0l7.500-6.200v12.400zM18 0l-7.500-6.200v12.400z"/></svg>
<svg class="b" style="left:2907px;top:420px" width="38" height="36" viewBox="0 0 38 36" fill="none" stroke="#b4b4b4" stroke-width="3"><rect x="3" y="5" width="12" height="24" rx="6"/><path d="M9 11v6" stroke-width="2.400"/><circle cx="28" cy="10" r="7.200"/><path d="M25.500 17L21 31" stroke-width="3.600"/></svg>
<svg class="b" style="left:2908px;top:488px" width="36" height="42" viewBox="0 0 36 42" fill="none" stroke="#b4b4b4" stroke-width="2.600"><rect x="1.500" y="1.500" width="33" height="38.500"/><path d="M8 2v9.500h19.500V2" stroke-width="2.200"/><path d="M22 4.500v5" stroke-width="3"/></svg>
<svg class="b" style="left:2908px;top:561px" width="36" height="36" viewBox="-18 -18 36 36" fill="none" stroke="#b4b4b4" stroke-width="3"><circle r="14.300"/><path d="M0-14v7M0 14v-7M-14 0h6M14 0h-6" stroke-width="2" stroke="#c8c8c8"/></svg>
<svg class="b" style="left:0;top:0" width="3000" height="2254" viewBox="0 0 3000 2254"><defs><clipPath id="cpAll"><rect x="1345.2" y="334.0" width="1551.6" height="1714.2"/></clipPath><clipPath id="cpRed"><polygon points="1345.2,1656.0 1414.6,1647.0 1489.0,1641.0 1563.8,1644.0 1657.0,1639.0 1694.3,1652.6 1728.0,1662.0 1750.0,1649.0 1780.0,1628.0 1813.7,1621.0 1862.0,1634.0 1907.0,1649.0 1974.0,1636.0 2030.0,1624.6 2063.6,1608.0 2102.0,1614.0 2129.8,1619.0 2167.0,1634.0 2212.0,1619.0 2238.0,1602.0 2256.7,1611.6 2323.8,1598.5 2379.7,1585.5 2435.7,1577.0 2473.0,1591.0 2521.5,1587.0 2529.0,1568.7 2566.2,1570.5 2622.2,1565.0 2678.0,1580.0 2715.4,1576.0 2764.0,1559.0 2778.8,1546.0 2808.7,1555.6 2834.8,1580.0 2896.8,1578.0 2896.8,2048.2 1345.2,2048.2"/></clipPath><clipPath id="cpTop"><polygon points="1345.2,334.0 2896.8,334.0 2896.8,1578.0 2834.8,1580.0 2808.7,1555.6 2778.8,1546.0 2764.0,1559.0 2715.4,1576.0 2678.0,1580.0 2622.2,1565.0 2566.2,1570.5 2529.0,1568.7 2521.5,1587.0 2473.0,1591.0 2435.7,1577.0 2379.7,1585.5 2323.8,1598.5 2256.7,1611.6 2238.0,1602.0 2212.0,1619.0 2167.0,1634.0 2129.8,1619.0 2102.0,1614.0 2063.6,1608.0 2030.0,1624.6 1974.0,1636.0 1907.0,1649.0 1862.0,1634.0 1813.7,1621.0 1780.0,1628.0 1750.0,1649.0 1728.0,1662.0 1694.3,1652.6 1657.0,1639.0 1563.8,1644.0 1489.0,1641.0 1414.6,1647.0 1345.2,1656.0"/></clipPath><filter id="fStreak" x="0" y="0" width="100%" height="100%" color-interpolation-filters="sRGB"><feTurbulence type="fractalNoise" baseFrequency="0.003 0.16" numOctaves="2" seed="7"/><feColorMatrix type="matrix" values="0 0 0 0 0.5  0 0 0 0 0.5  0 0 0 0 0.5  2.2 0 0 0 -0.6"/></filter><filter id="fStreakW" x="0" y="0" width="100%" height="100%" color-interpolation-filters="sRGB"><feTurbulence type="fractalNoise" baseFrequency="0.003 0.16" numOctaves="2" seed="23"/><feColorMatrix type="matrix" values="0 0 0 0 1  0 0 0 0 1  0 0 0 0 1  2.2 0 0 0 -0.75"/></filter><filter id="fStreakB" x="0" y="0" width="100%" height="100%" color-interpolation-filters="sRGB"><feTurbulence type="fractalNoise" baseFrequency="0.003 0.16" numOctaves="2" seed="41"/><feColorMatrix type="matrix" values="0 0 0 0 0.15  0 0 0 0 0.1  0 0 0 0 0.15  2.2 0 0 0 -0.78"/></filter><filter id="fRedW" x="0" y="0" width="100%" height="100%" color-interpolation-filters="sRGB"><feTurbulence type="fractalNoise" baseFrequency="0.005 0.085" numOctaves="2" seed="5"/><feColorMatrix type="matrix" values="0 0 0 0 1  0 0 0 0 0.84  0 0 0 0 0.84  3.4 0 0 0 -1.45"/></filter><filter id="fRedB" x="0" y="0" width="100%" height="100%" color-interpolation-filters="sRGB"><feTurbulence type="fractalNoise" baseFrequency="0.005 0.085" numOctaves="2" seed="5"/><feColorMatrix type="matrix" values="0 0 0 0 0.42  0 0 0 0 0.16  0 0 0 0 0.2  -3.4 0 0 0 1.5"/></filter><filter id="fBlur" x="-2%" y="-2%" width="104%" height="104%"><feGaussianBlur stdDeviation="1.6 1.3"/></filter><linearGradient id="gKob" gradientUnits="userSpaceOnUse" x1="0" y1="900" x2="0" y2="1120"><stop offset="0" stop-color="#a04880" stop-opacity=".14"/><stop offset="1" stop-color="#ffc4dc" stop-opacity=".16"/></linearGradient><linearGradient id="gRed" gradientUnits="userSpaceOnUse" x1="0" y1="1650" x2="0" y2="2050"><stop offset="0" stop-color="#ffd0d0" stop-opacity=".06"/><stop offset="1" stop-color="#70404c" stop-opacity=".12"/></linearGradient></defs><g clip-path="url(#cpAll)"><rect x="1345.2" y="334.0" width="1551.6" height="1714.2" fill="#c6878b"/><polygon fill="#c0a6a1" points="1345.2,332.0 2896.8,332.0 2896.8,1578.0 2834.8,1580.0 2808.7,1555.6 2778.8,1546.0 2764.0,1559.0 2715.4,1576.0 2678.0,1580.0 2622.2,1565.0 2566.2,1570.5 2529.0,1568.7 2521.5,1587.0 2473.0,1591.0 2435.7,1577.0 2379.7,1585.5 2323.8,1598.5 2256.7,1611.6 2238.0,1602.0 2212.0,1619.0 2167.0,1634.0 2129.8,1619.0 2102.0,1614.0 2063.6,1608.0 2030.0,1624.6 1974.0,1636.0 1907.0,1649.0 1862.0,1634.0 1813.7,1621.0 1780.0,1628.0 1750.0,1649.0 1728.0,1662.0 1694.3,1652.6 1657.0,1639.0 1563.8,1644.0 1489.0,1641.0 1414.6,1647.0 1345.2,1656.0"/><polygon fill="#7a7896" points="1345.2,332.0 2896.8,332.0 2896.8,1422.5 2845.0,1422.5 2834.0,1438.8 2787.0,1444.0 2751.0,1429.7 2678.7,1433.0 2624.4,1422.5 2570.0,1447.8 2497.8,1458.7 2461.7,1440.6 2389.3,1442.4 2353.0,1451.4 2244.7,1462.0 2208.5,1473.0 2154.0,1462.0 2100.0,1467.0 2011.4,1471.7 1899.5,1477.0 1825.0,1480.0 1806.0,1483.0 1731.6,1479.0 1601.0,1484.8 1489.0,1490.0 1377.0,1496.0 1345.2,1494.0"/><polygon fill="#97699a" points="1345.2,332.0 2896.8,332.0 2896.8,1169.0 2787.0,1180.0 2714.8,1174.8 2686.0,1183.8 2642.5,1169.0 2599.0,1169.0 2581.0,1249.0 2570.0,1261.5 2461.7,1261.5 2443.6,1268.8 2400.0,1263.4 2371.0,1176.6 2353.0,1194.6 2317.0,1205.5 2208.5,1207.0 2154.0,1198.0 2100.0,1200.0 1882.5,1209.0 1701.7,1216.0 1557.0,1221.8 1448.5,1229.0 1345.2,1229.0"/><polygon fill="#c97ba2" points="1345.2,332.0 2896.8,332.0 2896.8,1028.0 2787.0,1039.0 2714.8,1042.7 2657.0,1037.0 2635.3,1053.6 2617.0,1111.5 2534.0,1120.5 2461.7,1126.0 2407.4,1133.0 2364.0,1126.0 2338.7,1051.8 2309.8,1068.0 2262.7,1066.0 2208.5,1057.0 2136.0,1048.0 2100.0,1050.0 1882.5,1059.0 1701.7,1064.5 1369.0,1073.5 1345.2,1077.0"/><polygon fill="#c4afba" points="1345.2,332.0 2896.8,332.0 2896.8,891.0 2762.0,892.7 2751.0,903.5 2680.5,891.0 2646.0,990.0 2581.0,984.9 2570.0,981.0 2461.7,986.7 2389.3,994.0 2335.0,1004.8 2306.0,934.0 2262.7,927.0 2208.5,914.0 2154.0,905.0 2100.0,903.5 2063.0,903.5 1701.7,910.7 1437.6,919.0 1426.8,925.0 1345.2,921.6"/><polygon fill="#7a98c8" points="1345.2,332.0 2896.8,332.0 2896.8,652.7 2751.0,660.0 2711.2,783.0 2678.7,786.5 2606.3,777.5 2544.8,779.0 2526.8,763.0 2461.7,768.5 2407.4,774.0 2403.8,786.5 2364.0,804.6 2317.0,812.0 2309.8,804.6 2273.6,808.0 2230.0,694.0 2165.0,712.0 2143.4,712.0 2121.7,692.5 2100.0,685.0 2092.0,681.7 2081.4,670.0 1774.0,680.0 1593.0,683.5 1586.0,686.0 1488.3,689.0 1481.0,705.0 1412.0,699.7 1345.2,705.0"/><polygon fill="#78ad78" points="1345.2,332.0 2896.8,332.0 2896.8,602.0 2787.0,605.7 2772.0,608.0 2765.0,617.0 2755.0,643.0 2740.0,690.0 2722.0,728.7 2606.0,732.0 2534.0,728.7 2516.0,717.8 2497.8,710.6 2418.0,716.0 2407.4,725.0 2371.0,736.0 2353.0,741.0 2252.0,739.5 2230.0,672.0 2215.7,642.0 2205.0,634.0 2172.0,636.0 2129.0,643.7 2100.0,633.0 2090.0,624.0 2078.0,610.5 2063.0,609.0 1701.0,613.0 1520.0,613.0 1502.0,626.0 1484.0,629.0 1420.0,624.0 1345.2,625.6"/><polygon fill="#9cb38d" points="1345.2,332.0 2896.8,332.0 2896.8,593.0 2787.0,595.0 2769.0,598.5 2761.8,609.0 2751.0,638.0 2736.5,681.7 2722.0,714.0 2678.7,712.0 2606.3,703.0 2534.0,692.5 2497.8,681.7 2443.6,680.0 2425.5,689.0 2389.3,699.7 2317.0,714.0 2252.0,712.0 2244.7,703.0 2226.6,656.0 2212.0,627.0 2201.3,614.8 2172.3,623.8 2129.0,631.0 2100.0,617.0 2090.0,615.0 2078.0,601.4 2063.0,600.0 1701.7,604.0 1520.8,604.0 1502.7,616.6 1484.7,619.5 1420.0,614.5 1345.2,616.6"/><polygon fill="#c2b058" points="1345.2,332.0 2896.8,332.0 2896.8,407.0 2640.0,405.0 2443.0,407.0 2425.0,405.0 2245.0,398.0 2100.0,390.5 1890.0,392.0 1810.0,387.0 1600.0,387.0 1345.2,387.0"/><polygon fill="url(#gKob)" points="1345.2,921.6 1426.8,925.0 1437.6,919.0 1701.7,910.7 2063.0,903.5 2100.0,903.5 2154.0,905.0 2208.5,914.0 2262.7,927.0 2306.0,934.0 2335.0,1004.8 2389.3,994.0 2461.7,986.7 2570.0,981.0 2581.0,984.9 2646.0,990.0 2680.5,891.0 2751.0,903.5 2762.0,892.7 2896.8,891.0 2896.8,1028.0 2787.0,1039.0 2714.8,1042.7 2657.0,1037.0 2635.3,1053.6 2617.0,1111.5 2534.0,1120.5 2461.7,1126.0 2407.4,1133.0 2364.0,1126.0 2338.7,1051.8 2309.8,1068.0 2262.7,1066.0 2208.5,1057.0 2136.0,1048.0 2100.0,1050.0 1882.5,1059.0 1701.7,1064.5 1369.0,1073.5 1345.2,1077.0"/><polygon fill="url(#gRed)" points="1345.2,1656.0 1414.6,1647.0 1489.0,1641.0 1563.8,1644.0 1657.0,1639.0 1694.3,1652.6 1728.0,1662.0 1750.0,1649.0 1780.0,1628.0 1813.7,1621.0 1862.0,1634.0 1907.0,1649.0 1974.0,1636.0 2030.0,1624.6 2063.6,1608.0 2102.0,1614.0 2129.8,1619.0 2167.0,1634.0 2212.0,1619.0 2238.0,1602.0 2256.7,1611.6 2323.8,1598.5 2379.7,1585.5 2435.7,1577.0 2473.0,1591.0 2521.5,1587.0 2529.0,1568.7 2566.2,1570.5 2622.2,1565.0 2678.0,1580.0 2715.4,1576.0 2764.0,1559.0 2778.8,1546.0 2808.7,1555.6 2834.8,1580.0 2896.8,1578.0 2896.8,2048.2 1345.2,2048.2"/><polyline fill="none" stroke="#c9ba6d" stroke-width="2.6" stroke-opacity="0.51" stroke-linejoin="round" points="1345,342.8 1345,342.8 1600,342.8 1810,342.8 1890,343.7 2100,343.4 2245,344.7 2425,345.8 2443,346.2 2640,345.8 2897,346.2 2897,346.2"/><polyline fill="none" stroke="#a8994c" stroke-width="2.6" stroke-opacity="0.46" stroke-linejoin="round" points="1345,345.7 1345,345.7 1600,345.7 1810,345.7 1890,346.5 2100,346.3 2245,347.5 2425,348.7 2443,349.0 2640,348.7 2897,349.0 2897,349.0"/><polyline fill="none" stroke="#c9ba6d" stroke-width="2.6" stroke-opacity="0.53" stroke-linejoin="round" points="1345,351.7 1345,351.7 1600,351.7 1810,351.7 1890,353.3 2100,352.8 2245,355.3 2425,357.7 2443,358.3 2640,357.7 2897,358.3 2897,358.3"/><polyline fill="none" stroke="#a8994c" stroke-width="2.6" stroke-opacity="0.48" stroke-linejoin="round" points="1345,354.5 1345,354.5 1600,354.5 1810,354.5 1890,356.2 2100,355.7 2245,358.2 2425,360.5 2443,361.2 2640,360.5 2897,361.2 2897,361.2"/><polyline fill="none" stroke="#c9ba6d" stroke-width="2.6" stroke-opacity="0.44" stroke-linejoin="round" points="1345,360.5 1345,360.5 1600,360.5 1810,360.5 1890,363.0 2100,362.2 2245,366.0 2425,369.5 2443,370.5 2640,369.5 2897,370.5 2897,370.5"/><polyline fill="none" stroke="#a8994c" stroke-width="2.6" stroke-opacity="0.40" stroke-linejoin="round" points="1345,363.4 1345,363.4 1600,363.4 1810,363.4 1890,365.9 2100,365.1 2245,368.9 2425,372.4 2443,373.4 2640,372.4 2897,373.4 2897,373.4"/><polyline fill="none" stroke="#c9ba6d" stroke-width="2.6" stroke-opacity="0.33" stroke-linejoin="round" points="1345,369.3 1345,369.3 1600,369.3 1810,369.3 1890,372.7 2100,371.7 2245,376.7 2425,381.3 2443,382.7 2640,381.3 2897,382.7 2897,382.7"/><polyline fill="none" stroke="#a8994c" stroke-width="2.6" stroke-opacity="0.30" stroke-linejoin="round" points="1345,372.2 1345,372.2 1600,372.2 1810,372.2 1890,375.5 2100,374.5 2245,379.5 2425,384.2 2443,385.5 2640,384.2 2897,385.5 2897,385.5"/><polyline fill="none" stroke="#c9ba6d" stroke-width="2.6" stroke-opacity="0.46" stroke-linejoin="round" points="1345,378.2 1345,378.2 1600,378.2 1810,378.2 1890,382.3 2100,381.1 2245,387.3 2425,393.2 2443,394.8 2640,393.2 2897,394.8 2897,394.8"/><polyline fill="none" stroke="#a8994c" stroke-width="2.6" stroke-opacity="0.41" stroke-linejoin="round" points="1345,381.0 1345,381.0 1600,381.0 1810,381.0 1890,385.2 2100,383.9 2245,390.2 2425,396.0 2443,397.7 2640,396.0 2897,397.7 2897,397.7"/><polyline fill="none" stroke="#a2b894" stroke-width="2.2" stroke-opacity="0.20" stroke-linejoin="round" points="1345,397.4 1420,397.3 1485,397.6 1503,397.4 1521,396.9 1600,396.9 1702,396.9 1810,396.8 1890,401.5 2063,400.3 2078,400.2 2090,400.8 2100,400.8 2129,402.9 2172,404.7 2201,405.7 2212,406.8 2227,408.8 2245,411.8 2245,411.9 2252,412.5 2317,415.0 2389,417.1 2425,417.9 2426,418.0 2443,419.4 2444,419.4 2498,419.0 2534,419.1 2606,418.9 2640,418.7 2679,419.2 2722,419.7 2736,418.3 2751,416.4 2762,415.2 2769,414.8 2787,414.7 2897,415.5"/><polyline fill="none" stroke="#91a683" stroke-width="2.2" stroke-opacity="0.18" stroke-linejoin="round" points="1345,399.9 1420,399.8 1485,400.0 1503,399.9 1521,399.3 1600,399.3 1702,399.3 1810,399.2 1890,404.0 2063,402.7 2078,402.7 2090,403.2 2100,403.2 2129,405.3 2172,407.1 2201,408.1 2212,409.2 2227,411.2 2245,414.3 2245,414.3 2252,415.0 2317,417.5 2389,419.5 2425,420.3 2426,420.4 2443,421.8 2444,421.8 2498,421.4 2534,421.5 2606,421.3 2640,421.2 2679,421.7 2722,422.1 2736,420.7 2751,418.8 2762,417.6 2769,417.2 2787,417.1 2897,417.9"/><polyline fill="none" stroke="#a2b894" stroke-width="2.2" stroke-opacity="0.21" stroke-linejoin="round" points="1345,407.9 1420,407.7 1485,408.1 1503,407.9 1521,406.7 1600,406.7 1702,406.7 1810,406.6 1890,411.1 2063,409.8 2078,409.8 2090,411.0 2100,411.1 2129,413.7 2172,415.1 2201,415.7 2212,417.3 2227,420.6 2245,425.7 2245,425.8 2252,426.8 2317,429.3 2389,430.5 2425,430.8 2426,430.9 2443,431.8 2444,431.8 2498,431.5 2534,432.1 2606,432.4 2640,432.5 2679,433.2 2722,433.7 2736,430.8 2751,427.0 2762,424.4 2769,423.5 2787,423.3 2897,423.9"/><polyline fill="none" stroke="#91a683" stroke-width="2.2" stroke-opacity="0.19" stroke-linejoin="round" points="1345,410.3 1420,410.1 1485,410.6 1503,410.3 1521,409.1 1600,409.1 1702,409.1 1810,409.0 1890,413.5 2063,412.2 2078,412.2 2090,413.4 2100,413.5 2129,416.1 2172,417.5 2201,418.1 2212,419.7 2227,423.0 2245,428.1 2245,428.2 2252,429.2 2317,431.7 2389,432.9 2425,433.3 2426,433.3 2443,434.3 2444,434.2 2498,433.9 2534,434.5 2606,434.8 2640,434.9 2679,435.6 2722,436.1 2736,433.3 2751,429.4 2762,426.8 2769,425.9 2787,425.7 2897,426.3"/><polyline fill="none" stroke="#a2b894" stroke-width="2.2" stroke-opacity="0.16" stroke-linejoin="round" points="1345,418.3 1420,418.0 1485,418.7 1503,418.3 1521,416.6 1600,416.6 1702,416.6 1810,416.4 1890,420.6 2063,419.3 2078,419.4 2090,421.2 2100,421.4 2129,424.6 2172,425.5 2201,425.6 2212,427.8 2227,432.4 2245,439.6 2245,439.6 2252,441.1 2317,443.5 2389,444.0 2425,443.7 2426,443.8 2443,444.3 2444,444.2 2498,444.0 2534,445.1 2606,445.9 2640,446.2 2679,447.1 2722,447.7 2736,443.4 2751,437.5 2762,433.6 2769,432.3 2787,431.9 2897,432.4"/><polyline fill="none" stroke="#91a683" stroke-width="2.2" stroke-opacity="0.14" stroke-linejoin="round" points="1345,420.7 1420,420.4 1485,421.1 1503,420.7 1521,419.0 1600,419.0 1702,419.0 1810,418.8 1890,423.0 2063,421.7 2078,421.8 2090,423.6 2100,423.8 2129,427.0 2172,428.0 2201,428.0 2212,430.2 2227,434.8 2245,442.0 2245,442.1 2252,443.5 2317,445.9 2389,446.4 2425,446.2 2426,446.2 2443,446.7 2444,446.6 2498,446.4 2534,447.6 2606,448.4 2640,448.6 2679,449.5 2722,450.1 2736,445.8 2751,439.9 2762,436.1 2769,434.7 2787,434.3 2897,434.8"/><polyline fill="none" stroke="#a2b894" stroke-width="2.2" stroke-opacity="0.16" stroke-linejoin="round" points="1345,428.7 1420,428.4 1485,429.3 1503,428.7 1521,426.5 1600,426.5 1702,426.5 1810,426.2 1890,430.2 2063,428.8 2078,429.0 2090,431.4 2100,431.7 2129,435.5 2172,436.0 2201,435.6 2212,438.2 2227,444.1 2245,453.4 2245,453.5 2252,455.3 2317,457.7 2389,457.4 2425,456.7 2426,456.7 2443,456.7 2444,456.6 2498,456.5 2534,458.2 2606,459.5 2640,459.9 2679,461.1 2722,461.7 2736,455.9 2751,448.1 2762,442.9 2769,441.0 2787,440.5 2897,440.8"/><polyline fill="none" stroke="#91a683" stroke-width="2.2" stroke-opacity="0.15" stroke-linejoin="round" points="1345,431.2 1420,430.8 1485,431.7 1503,431.2 1521,428.9 1600,428.9 1702,428.9 1810,428.7 1890,432.6 2063,431.2 2078,431.4 2090,433.8 2100,434.1 2129,437.9 2172,438.4 2201,438.0 2212,440.7 2227,446.6 2245,455.9 2245,455.9 2252,457.7 2317,460.2 2389,459.9 2425,459.1 2426,459.1 2443,459.1 2444,459.1 2498,458.9 2534,460.6 2606,461.9 2640,462.4 2679,463.5 2722,464.1 2736,458.3 2751,450.5 2762,445.3 2769,443.4 2787,442.9 2897,443.2"/><polyline fill="none" stroke="#a2b894" stroke-width="2.2" stroke-opacity="0.19" stroke-linejoin="round" points="1345,439.2 1420,438.7 1485,439.8 1503,439.2 1521,436.3 1600,436.3 1702,436.3 1810,436.0 1890,439.7 2063,438.3 2078,438.6 2090,441.6 2100,442.0 2129,446.3 2172,446.4 2201,445.5 2212,448.7 2227,455.9 2245,467.3 2245,467.4 2252,469.6 2317,472.0 2389,470.9 2425,469.6 2426,469.6 2443,469.1 2444,469.0 2498,469.0 2534,471.2 2606,473.0 2640,473.7 2679,475.0 2722,475.7 2736,468.5 2751,458.6 2762,452.1 2769,449.8 2787,449.1 2897,449.3"/><polyline fill="none" stroke="#91a683" stroke-width="2.2" stroke-opacity="0.17" stroke-linejoin="round" points="1345,441.6 1420,441.1 1485,442.3 1503,441.6 1521,438.7 1600,438.7 1702,438.7 1810,438.5 1890,442.1 2063,440.7 2078,441.0 2090,444.0 2100,444.4 2129,448.7 2172,448.8 2201,447.9 2212,451.1 2227,458.3 2245,469.7 2245,469.8 2252,472.0 2317,474.4 2389,473.3 2425,472.0 2426,472.0 2443,471.5 2444,471.5 2498,471.4 2534,473.6 2606,475.4 2640,476.1 2679,477.4 2722,478.1 2736,470.9 2751,461.0 2762,454.5 2769,452.2 2787,451.5 2897,451.7"/><polyline fill="none" stroke="#a2b894" stroke-width="2.2" stroke-opacity="0.21" stroke-linejoin="round" points="1345,449.6 1420,449.0 1485,450.4 1503,449.6 1521,446.2 1600,446.2 1702,446.2 1810,445.9 1890,449.2 2063,447.8 2078,448.1 2090,451.8 2100,452.3 2129,457.2 2172,456.8 2201,455.5 2212,459.2 2227,467.7 2245,481.2 2245,481.3 2252,483.8 2317,486.2 2389,484.4 2425,482.5 2426,482.5 2443,481.5 2444,481.5 2498,481.5 2534,484.2 2606,486.5 2640,487.4 2679,488.9 2722,489.7 2736,481.0 2751,469.2 2762,461.3 2769,458.5 2787,457.7 2897,457.7"/><polyline fill="none" stroke="#91a683" stroke-width="2.2" stroke-opacity="0.19" stroke-linejoin="round" points="1345,452.0 1420,451.5 1485,452.8 1503,452.0 1521,448.6 1600,448.6 1702,448.6 1810,448.3 1890,451.7 2063,450.2 2078,450.6 2090,454.2 2100,454.7 2129,459.6 2172,459.3 2201,457.9 2212,461.6 2227,470.1 2245,483.6 2245,483.7 2252,486.3 2317,488.6 2389,486.8 2425,484.9 2426,484.9 2443,484.0 2444,483.9 2498,483.9 2534,486.6 2606,488.9 2640,489.8 2679,491.4 2722,492.2 2736,483.4 2751,471.6 2762,463.7 2769,460.9 2787,460.1 2897,460.1"/><polyline fill="none" stroke="#a2b894" stroke-width="2.2" stroke-opacity="0.15" stroke-linejoin="round" points="1345,460.1 1420,459.4 1485,461.0 1503,460.1 1521,456.0 1600,456.0 1702,456.0 1810,455.7 1890,458.8 2063,457.3 2078,457.7 2090,462.0 2100,462.6 2129,468.0 2172,467.3 2201,465.4 2212,469.7 2227,479.4 2245,495.0 2245,495.2 2252,498.1 2317,500.5 2389,497.8 2425,495.4 2426,495.4 2443,494.0 2444,493.9 2498,494.0 2534,497.2 2606,500.1 2640,501.2 2679,502.9 2722,503.8 2736,493.6 2751,479.7 2762,470.6 2769,467.3 2787,466.2 2897,466.2"/><polyline fill="none" stroke="#91a683" stroke-width="2.2" stroke-opacity="0.13" stroke-linejoin="round" points="1345,462.5 1420,461.8 1485,463.4 1503,462.5 1521,458.5 1600,458.5 1702,458.5 1810,458.1 1890,461.2 2063,459.8 2078,460.1 2090,464.4 2100,465.0 2129,470.5 2172,469.7 2201,467.9 2212,472.1 2227,481.9 2245,497.5 2245,497.6 2252,500.5 2317,502.9 2389,500.2 2425,497.8 2426,497.8 2443,496.4 2444,496.3 2498,496.4 2534,499.6 2606,502.5 2640,503.6 2679,505.3 2722,506.2 2736,496.0 2751,482.1 2762,473.0 2769,469.7 2787,468.7 2897,468.6"/><polyline fill="none" stroke="#a2b894" stroke-width="2.2" stroke-opacity="0.14" stroke-linejoin="round" points="1345,470.5 1420,469.7 1485,471.5 1503,470.5 1521,465.9 1600,465.9 1702,465.9 1810,465.5 1890,468.3 2063,466.9 2078,467.3 2090,472.2 2100,472.9 2129,478.9 2172,477.7 2201,475.4 2212,480.2 2227,491.2 2245,508.9 2245,509.0 2252,512.4 2317,514.7 2389,511.3 2425,508.3 2426,508.3 2443,506.4 2444,506.3 2498,506.5 2534,510.2 2606,513.6 2640,514.9 2679,516.8 2722,517.8 2736,506.1 2751,490.3 2762,479.8 2769,476.0 2787,474.8 2897,474.6"/><polyline fill="none" stroke="#91a683" stroke-width="2.2" stroke-opacity="0.13" stroke-linejoin="round" points="1345,472.9 1420,472.1 1485,474.0 1503,472.9 1521,468.3 1600,468.3 1702,468.3 1810,467.9 1890,470.8 2063,469.3 2078,469.7 2090,474.6 2100,475.3 2129,481.3 2172,480.1 2201,477.8 2212,482.6 2227,493.6 2245,511.3 2245,511.5 2252,514.8 2317,517.1 2389,513.7 2425,510.7 2426,510.7 2443,508.8 2444,508.7 2498,509.0 2534,512.7 2606,516.0 2640,517.3 2679,519.2 2722,520.2 2736,508.5 2751,492.7 2762,482.2 2769,478.4 2787,477.2 2897,477.1"/><polyline fill="none" stroke="#a2b894" stroke-width="2.2" stroke-opacity="0.26" stroke-linejoin="round" points="1345,480.9 1420,480.1 1485,482.1 1503,480.9 1521,475.8 1600,475.8 1702,475.8 1810,475.3 1890,477.9 2063,476.4 2078,476.9 2090,482.4 2100,483.2 2129,489.8 2172,488.2 2201,485.4 2212,490.7 2227,503.0 2245,522.8 2245,522.9 2252,526.6 2317,528.9 2389,524.7 2425,521.2 2426,521.2 2443,518.8 2444,518.7 2498,519.0 2534,523.2 2606,527.1 2640,528.6 2679,530.8 2722,531.8 2736,518.6 2751,500.8 2762,489.0 2769,484.8 2787,483.4 2897,483.1"/><polyline fill="none" stroke="#91a683" stroke-width="2.2" stroke-opacity="0.24" stroke-linejoin="round" points="1345,483.3 1420,482.5 1485,484.5 1503,483.3 1521,478.2 1600,478.2 1702,478.2 1810,477.7 1890,480.3 2063,478.8 2078,479.3 2090,484.8 2100,485.6 2129,492.2 2172,490.6 2201,487.8 2212,493.1 2227,505.4 2245,525.2 2245,525.3 2252,529.0 2317,531.3 2389,527.2 2425,523.7 2426,523.6 2443,521.2 2444,521.1 2498,521.5 2534,525.7 2606,529.5 2640,531.0 2679,533.2 2722,534.2 2736,521.1 2751,503.2 2762,491.4 2769,487.2 2787,485.8 2897,485.5"/><polyline fill="none" stroke="#a2b894" stroke-width="2.2" stroke-opacity="0.28" stroke-linejoin="round" points="1345,491.4 1420,490.4 1485,492.7 1503,491.4 1521,485.6 1600,485.6 1702,485.6 1810,485.1 1890,487.4 2063,485.9 2078,486.4 2090,492.6 2100,493.5 2129,500.6 2172,498.6 2201,495.3 2212,501.2 2227,514.8 2245,536.6 2245,536.8 2252,540.9 2317,543.2 2389,538.2 2425,534.2 2426,534.1 2443,531.2 2444,531.1 2498,531.6 2534,536.3 2606,540.6 2640,542.4 2679,544.7 2722,545.8 2736,531.2 2751,511.4 2762,498.2 2769,493.5 2787,492.0 2897,491.5"/><polyline fill="none" stroke="#91a683" stroke-width="2.2" stroke-opacity="0.25" stroke-linejoin="round" points="1345,493.8 1420,492.8 1485,495.1 1503,493.8 1521,488.1 1600,488.1 1702,488.1 1810,487.5 1890,489.8 2063,488.3 2078,488.9 2090,495.0 2100,495.9 2129,503.1 2172,501.0 2201,497.7 2212,503.6 2227,517.2 2245,539.0 2245,539.2 2252,543.3 2317,545.6 2389,540.6 2425,536.6 2426,536.5 2443,533.6 2444,533.5 2498,534.0 2534,538.7 2606,543.1 2640,544.8 2679,547.1 2722,548.2 2736,533.6 2751,513.8 2762,500.7 2769,495.9 2787,494.4 2897,494.0"/><polyline fill="none" stroke="#a2b894" stroke-width="2.2" stroke-opacity="0.13" stroke-linejoin="round" points="1345,501.8 1420,500.8 1485,503.2 1503,501.8 1521,495.5 1600,495.5 1702,495.5 1810,494.9 1890,497.0 2063,495.4 2078,496.0 2090,502.8 2100,503.8 2129,511.5 2172,509.0 2201,505.3 2212,511.6 2227,526.5 2245,550.5 2245,550.7 2252,555.1 2317,557.4 2389,551.7 2425,547.1 2426,547.0 2443,543.6 2444,543.5 2498,544.1 2534,549.3 2606,554.2 2640,556.1 2679,558.7 2722,559.8 2736,543.7 2751,521.9 2762,507.5 2769,502.3 2787,500.6 2897,500.0"/><polyline fill="none" stroke="#91a683" stroke-width="2.2" stroke-opacity="0.12" stroke-linejoin="round" points="1345,504.2 1420,503.2 1485,505.7 1503,504.2 1521,497.9 1600,497.9 1702,497.9 1810,497.3 1890,499.4 2063,497.8 2078,498.4 2090,505.2 2100,506.2 2129,513.9 2172,511.4 2201,507.7 2212,514.1 2227,528.9 2245,552.9 2245,553.1 2252,557.6 2317,559.8 2389,554.1 2425,549.5 2426,549.4 2443,546.1 2444,545.9 2498,546.5 2534,551.7 2606,556.6 2640,558.5 2679,561.1 2722,562.2 2736,546.1 2751,524.4 2762,509.9 2769,504.7 2787,503.0 2897,502.4"/><polyline fill="none" stroke="#a2b894" stroke-width="2.2" stroke-opacity="0.29" stroke-linejoin="round" points="1345,512.2 1420,511.1 1485,513.8 1503,512.2 1521,505.4 1600,505.4 1702,505.4 1810,504.7 1890,506.5 2063,504.9 2078,505.6 2090,513.0 2100,514.0 2129,522.4 2172,519.5 2201,515.2 2212,522.1 2227,538.3 2245,564.4 2245,564.6 2252,569.4 2317,571.6 2389,565.1 2425,560.0 2426,559.9 2443,556.1 2444,555.9 2498,556.6 2534,562.3 2606,567.7 2640,569.8 2679,572.6 2722,573.8 2736,556.3 2751,532.5 2762,516.7 2769,511.0 2787,509.2 2897,508.5"/><polyline fill="none" stroke="#91a683" stroke-width="2.2" stroke-opacity="0.26" stroke-linejoin="round" points="1345,514.7 1420,513.5 1485,516.2 1503,514.7 1521,507.8 1600,507.8 1702,507.8 1810,507.1 1890,508.9 2063,507.3 2078,508.0 2090,515.4 2100,516.5 2129,524.8 2172,521.9 2201,517.6 2212,524.6 2227,540.7 2245,566.8 2245,567.0 2252,571.8 2317,574.1 2389,567.5 2425,562.4 2426,562.4 2443,558.5 2444,558.3 2498,559.0 2534,564.7 2606,570.1 2640,572.3 2679,575.0 2722,576.3 2736,558.7 2751,534.9 2762,519.1 2769,513.4 2787,511.6 2897,510.9"/><polyline fill="none" stroke="#a2b894" stroke-width="2.2" stroke-opacity="0.24" stroke-linejoin="round" points="1345,522.7 1420,521.4 1485,524.4 1503,522.7 1521,515.2 1600,515.2 1702,515.2 1810,514.5 1890,516.0 2063,514.4 2078,515.2 2090,523.2 2100,524.3 2129,533.2 2172,529.9 2201,525.2 2212,532.6 2227,550.1 2245,578.2 2245,578.4 2252,583.7 2317,585.9 2389,578.6 2425,572.9 2426,572.8 2443,568.5 2444,568.3 2498,569.1 2534,575.3 2606,581.2 2640,583.6 2679,586.5 2722,587.9 2736,568.8 2751,543.0 2762,525.9 2769,519.8 2787,517.7 2897,516.9"/><polyline fill="none" stroke="#91a683" stroke-width="2.2" stroke-opacity="0.21" stroke-linejoin="round" points="1345,525.1 1420,523.9 1485,526.8 1503,525.1 1521,517.6 1600,517.6 1702,517.6 1810,516.9 1890,518.5 2063,516.8 2078,517.6 2090,525.6 2100,526.8 2129,535.6 2172,532.3 2201,527.6 2212,535.0 2227,552.5 2245,580.6 2245,580.9 2252,586.1 2317,588.3 2389,581.0 2425,575.3 2426,575.3 2443,570.9 2444,570.7 2498,571.5 2534,577.7 2606,583.7 2640,586.0 2679,589.0 2722,590.3 2736,571.2 2751,545.5 2762,528.4 2769,522.2 2787,520.2 2897,519.3"/><polyline fill="none" stroke="#a2b894" stroke-width="2.2" stroke-opacity="0.15" stroke-linejoin="round" points="1345,533.1 1420,531.8 1485,535.0 1503,533.1 1521,525.1 1600,525.1 1702,525.1 1810,524.3 1890,525.6 2063,523.9 2078,524.8 2090,533.4 2100,534.6 2129,544.1 2172,540.3 2201,535.1 2212,543.1 2227,561.8 2245,592.1 2245,592.3 2252,597.9 2317,600.1 2389,592.0 2425,585.8 2426,585.7 2443,580.9 2444,580.7 2498,581.6 2534,588.3 2606,594.8 2640,597.3 2679,600.5 2722,601.9 2736,581.4 2751,553.6 2762,535.2 2769,528.5 2787,526.3 2897,525.4"/><polyline fill="none" stroke="#91a683" stroke-width="2.2" stroke-opacity="0.14" stroke-linejoin="round" points="1345,535.5 1420,534.2 1485,537.4 1503,535.5 1521,527.5 1600,527.5 1702,527.5 1810,526.7 1890,528.0 2063,526.3 2078,527.2 2090,535.8 2100,537.1 2129,546.5 2172,542.7 2201,537.6 2212,545.5 2227,564.3 2245,594.5 2245,594.7 2252,600.3 2317,602.5 2389,594.5 2425,588.2 2426,588.2 2443,583.3 2444,583.1 2498,584.0 2534,590.8 2606,597.2 2640,599.7 2679,602.9 2722,604.3 2736,583.8 2751,556.0 2762,537.6 2769,530.9 2787,528.7 2897,527.8"/><polyline fill="none" stroke="#a2b894" stroke-width="2.2" stroke-opacity="0.25" stroke-linejoin="round" points="1345,543.5 1420,542.1 1485,545.5 1503,543.5 1521,535.0 1600,535.0 1702,535.0 1810,534.1 1890,535.1 2063,533.4 2078,534.3 2090,543.6 2100,544.9 2129,555.0 2172,550.8 2201,545.1 2212,553.6 2227,573.6 2245,605.9 2245,606.2 2252,612.2 2317,614.3 2389,605.5 2425,598.7 2426,598.7 2443,593.3 2444,593.1 2498,594.1 2534,601.4 2606,608.3 2640,611.0 2679,614.4 2722,615.9 2736,593.9 2751,564.1 2762,544.4 2769,537.3 2787,534.9 2897,533.8"/><polyline fill="none" stroke="#91a683" stroke-width="2.2" stroke-opacity="0.22" stroke-linejoin="round" points="1345,546.0 1420,544.5 1485,547.9 1503,546.0 1521,537.4 1600,537.4 1702,537.4 1810,536.6 1890,537.5 2063,535.8 2078,536.8 2090,546.0 2100,547.4 2129,557.4 2172,553.2 2201,547.5 2212,556.0 2227,576.0 2245,608.4 2245,608.6 2252,614.6 2317,616.8 2389,607.9 2425,601.2 2426,601.1 2443,595.8 2444,595.6 2498,596.5 2534,603.8 2606,610.7 2640,613.5 2679,616.8 2722,618.3 2736,596.3 2751,566.6 2762,546.8 2769,539.7 2787,537.3 2897,536.2"/><polyline fill="none" stroke="#a2b894" stroke-width="2.2" stroke-opacity="0.26" stroke-linejoin="round" points="1345,554.0 1420,552.5 1485,556.1 1503,554.0 1521,544.8 1600,544.8 1702,544.8 1810,543.9 1890,544.7 2063,542.9 2078,543.9 2090,553.8 2100,555.2 2129,565.8 2172,561.2 2201,555.1 2212,564.1 2227,585.4 2245,619.8 2245,620.1 2252,626.4 2317,628.6 2389,618.9 2425,611.7 2426,611.6 2443,605.8 2444,605.5 2498,606.6 2534,614.4 2606,621.8 2640,624.8 2679,628.4 2722,629.9 2736,606.4 2751,574.7 2762,553.6 2769,546.0 2787,543.5 2897,542.3"/><polyline fill="none" stroke="#91a683" stroke-width="2.2" stroke-opacity="0.23" stroke-linejoin="round" points="1345,556.4 1420,554.9 1485,558.5 1503,556.4 1521,547.2 1600,547.2 1702,547.2 1810,546.4 1890,547.1 2063,545.4 2078,546.3 2090,556.2 2100,557.6 2129,568.2 2172,563.6 2201,557.5 2212,566.5 2227,587.8 2245,622.2 2245,622.5 2252,628.9 2317,631.0 2389,621.4 2425,614.1 2426,614.0 2443,608.2 2444,608.0 2498,609.1 2534,616.8 2606,624.2 2640,627.2 2679,630.8 2722,632.3 2736,608.9 2751,577.1 2762,556.0 2769,548.4 2787,545.9 2897,544.7"/><polyline fill="none" stroke="#a2b894" stroke-width="2.2" stroke-opacity="0.29" stroke-linejoin="round" points="1345,564.4 1420,562.8 1485,566.7 1503,564.4 1521,554.7 1600,554.7 1702,554.7 1810,553.8 1890,554.2 2063,552.4 2078,553.5 2090,564.0 2100,565.5 2129,576.7 2172,571.6 2201,565.0 2212,574.6 2227,597.1 2245,633.7 2245,634.0 2252,640.7 2317,642.8 2389,632.4 2425,624.6 2426,624.5 2443,618.2 2444,618.0 2498,619.1 2534,627.4 2606,635.4 2640,638.5 2679,642.3 2722,643.9 2736,619.0 2751,585.2 2762,562.9 2769,554.8 2787,552.1 2897,550.7"/><polyline fill="none" stroke="#91a683" stroke-width="2.2" stroke-opacity="0.26" stroke-linejoin="round" points="1345,566.8 1420,565.2 1485,569.1 1503,566.8 1521,557.1 1600,557.1 1702,557.1 1810,556.2 1890,556.6 2063,554.9 2078,555.9 2090,566.4 2100,567.9 2129,579.1 2172,574.0 2201,567.4 2212,577.0 2227,599.6 2245,636.1 2245,636.4 2252,643.1 2317,645.2 2389,634.8 2425,627.0 2426,626.9 2443,620.6 2444,620.4 2498,621.6 2534,629.8 2606,637.8 2640,640.9 2679,644.7 2722,646.3 2736,621.4 2751,587.7 2762,565.3 2769,557.2 2787,554.5 2897,553.1"/><polyline fill="none" stroke="#a2b894" stroke-width="2.2" stroke-opacity="0.17" stroke-linejoin="round" points="1345,574.9 1420,573.1 1485,577.2 1503,574.9 1521,564.5 1600,564.5 1702,564.5 1810,563.6 1890,563.7 2063,562.0 2078,563.1 2090,574.2 2100,575.8 2129,587.5 2172,582.1 2201,575.0 2212,585.1 2227,608.9 2245,647.5 2245,647.8 2252,655.0 2317,657.1 2389,645.9 2425,637.5 2426,637.4 2443,630.6 2444,630.4 2498,631.7 2534,640.4 2606,648.9 2640,652.2 2679,656.2 2722,657.9 2736,631.5 2751,595.8 2762,572.1 2769,563.5 2787,560.7 2897,559.2"/><polyline fill="none" stroke="#91a683" stroke-width="2.2" stroke-opacity="0.15" stroke-linejoin="round" points="1345,577.3 1420,575.6 1485,579.6 1503,577.3 1521,567.0 1600,567.0 1702,567.0 1810,566.0 1890,566.2 2063,564.4 2078,565.5 2090,576.6 2100,578.2 2129,590.0 2172,584.5 2201,577.4 2212,587.5 2227,611.3 2245,650.0 2245,650.3 2252,657.4 2317,659.5 2389,648.3 2425,639.9 2426,639.8 2443,633.0 2444,632.8 2498,634.1 2534,642.8 2606,651.3 2640,654.7 2679,658.7 2722,660.4 2736,633.9 2751,598.2 2762,574.5 2769,565.9 2787,563.1 2897,561.6"/><polyline fill="none" stroke="#a2b894" stroke-width="2.2" stroke-opacity="0.24" stroke-linejoin="round" points="1345,585.3 1420,583.5 1485,587.8 1503,585.3 1521,574.4 1600,574.4 1702,574.4 1810,573.4 1890,573.3 2063,571.5 2078,572.7 2090,584.4 2100,586.1 2129,598.4 2172,592.5 2201,584.9 2212,595.5 2227,620.7 2245,661.4 2245,661.7 2252,669.2 2317,671.3 2389,659.3 2425,650.4 2426,650.3 2443,643.0 2444,642.8 2498,644.2 2534,653.4 2606,662.4 2640,666.0 2679,670.2 2722,672.0 2736,644.1 2751,606.3 2762,581.3 2769,572.3 2787,569.2 2897,567.6"/><polyline fill="none" stroke="#91a683" stroke-width="2.2" stroke-opacity="0.21" stroke-linejoin="round" points="1345,587.7 1420,585.9 1485,590.2 1503,587.7 1521,576.8 1600,576.8 1702,576.8 1810,575.8 1890,575.7 2063,573.9 2078,575.1 2090,586.8 2100,588.5 2129,600.8 2172,594.9 2201,587.3 2212,598.0 2227,623.1 2245,663.8 2245,664.1 2252,671.6 2317,673.7 2389,661.7 2425,652.8 2426,652.7 2443,645.5 2444,645.2 2498,646.6 2534,655.9 2606,664.8 2640,668.4 2679,672.6 2722,674.4 2736,646.5 2751,608.8 2762,583.7 2769,574.7 2787,571.7 2897,570.1"/><polyline fill="none" stroke="#a2b894" stroke-width="2.2" stroke-opacity="0.27" stroke-linejoin="round" points="1345,595.7 1420,593.8 1485,598.4 1503,595.7 1521,584.3 1600,584.3 1702,584.3 1810,583.2 1890,582.8 2063,581.0 2078,582.2 2090,594.6 2100,596.4 2129,609.3 2172,602.9 2201,594.9 2212,606.0 2227,632.5 2245,675.3 2245,675.6 2252,683.5 2317,685.5 2389,672.8 2425,663.3 2426,663.2 2443,655.5 2444,655.2 2498,656.7 2534,666.5 2606,675.9 2640,679.7 2679,684.1 2722,686.0 2736,656.6 2751,616.9 2762,590.5 2769,581.0 2787,577.8 2897,576.1"/><polyline fill="none" stroke="#91a683" stroke-width="2.2" stroke-opacity="0.24" stroke-linejoin="round" points="1345,598.1 1420,596.2 1485,600.8 1503,598.1 1521,586.7 1600,586.7 1702,586.7 1810,585.6 1890,585.3 2063,583.4 2078,584.7 2090,597.0 2100,598.8 2129,611.7 2172,605.4 2201,597.3 2212,608.4 2227,634.9 2245,677.7 2245,678.0 2252,685.9 2317,687.9 2389,675.2 2425,665.7 2426,665.6 2443,657.9 2444,657.6 2498,659.1 2534,668.9 2606,678.4 2640,682.1 2679,686.5 2722,688.4 2736,659.0 2751,619.3 2762,593.0 2769,583.4 2787,580.3 2897,578.5"/><polyline fill="none" stroke="#a2b894" stroke-width="2.2" stroke-opacity="0.20" stroke-linejoin="round" points="1345,606.2 1420,604.2 1485,608.9 1503,606.2 1521,594.1 1600,594.1 1702,594.1 1810,593.0 1890,592.4 2063,590.5 2078,591.8 2090,604.8 2100,606.7 2129,620.1 2172,613.4 2201,604.8 2212,616.5 2227,644.2 2245,689.1 2245,689.5 2252,697.7 2317,699.8 2389,686.2 2425,676.2 2426,676.1 2443,667.9 2444,667.6 2498,669.2 2534,679.5 2606,689.5 2640,693.5 2679,698.1 2722,700.0 2736,669.2 2751,627.4 2762,599.8 2769,589.8 2787,586.4 2897,584.5"/><polyline fill="none" stroke="#91a683" stroke-width="2.2" stroke-opacity="0.18" stroke-linejoin="round" points="1345,608.6 1420,606.6 1485,611.4 1503,608.6 1521,596.6 1600,596.6 1702,596.6 1810,595.4 1890,594.8 2063,592.9 2078,594.2 2090,607.2 2100,609.1 2129,622.6 2172,615.8 2201,607.3 2212,618.9 2227,646.6 2245,691.6 2245,691.9 2252,700.2 2317,702.2 2389,688.7 2425,678.7 2426,678.5 2443,670.3 2444,670.0 2498,671.6 2534,681.9 2606,691.9 2640,695.9 2679,700.5 2722,702.4 2736,671.6 2751,629.9 2762,602.2 2769,592.2 2787,588.8 2897,587.0"/><polyline fill="none" stroke="#c9b7c0" stroke-width="2.2" stroke-opacity="0.18" stroke-linejoin="round" points="1345,715.8 1412,710.9 1427,712.0 1438,712.5 1481,715.6 1488,700.4 1586,697.4 1593,695.0 1702,692.9 1774,691.5 2063,682.2 2081,681.7 2092,692.8 2100,695.9 2122,703.1 2143,721.6 2154,721.6 2165,721.7 2208,710.7 2230,705.3 2263,786.9 2274,814.0 2306,811.4 2310,811.5 2317,819.4 2335,818.9 2364,814.3 2389,803.1 2404,796.8 2407,784.9 2462,779.4 2527,774.0 2545,789.2 2570,788.5 2581,788.5 2606,788.0 2646,792.8 2679,792.0 2680,791.5 2711,788.7 2751,672.2 2762,671.1 2897,664.6"/><polyline fill="none" stroke="#b09da7" stroke-width="2.2" stroke-opacity="0.16" stroke-linejoin="round" points="1345,718.2 1412,713.4 1427,714.5 1438,715.0 1481,718.1 1488,702.8 1586,699.8 1593,697.5 1702,695.3 1774,693.9 2063,684.7 2081,684.1 2092,695.2 2100,698.3 2122,705.5 2143,724.1 2154,724.1 2165,724.2 2208,713.1 2230,707.7 2263,789.3 2274,816.5 2306,813.8 2310,814.0 2317,821.9 2335,821.4 2364,816.7 2389,805.6 2404,799.2 2407,787.3 2462,781.8 2527,776.4 2545,791.6 2570,790.9 2581,790.9 2606,790.4 2646,795.2 2679,794.4 2680,794.0 2711,791.1 2751,674.6 2762,673.5 2897,667.0"/><polyline fill="none" stroke="#c9b7c0" stroke-width="2.2" stroke-opacity="0.31" stroke-linejoin="round" points="1345,726.7 1412,722.2 1427,723.3 1438,723.4 1481,726.3 1488,711.8 1586,708.8 1593,706.6 1702,704.3 1774,702.9 2063,693.9 2081,693.4 2092,703.9 2100,706.9 2122,713.7 2143,731.3 2154,731.3 2165,731.5 2208,721.4 2230,716.5 2263,794.2 2274,820.1 2306,817.9 2310,818.5 2317,826.9 2335,828.7 2364,824.0 2389,813.2 2404,807.1 2407,795.8 2462,790.3 2527,785.0 2545,799.3 2570,798.6 2581,798.8 2606,798.4 2646,803.2 2679,797.5 2680,796.8 2711,794.3 2751,684.4 2762,682.8 2897,676.5"/><polyline fill="none" stroke="#b09da7" stroke-width="2.2" stroke-opacity="0.28" stroke-linejoin="round" points="1345,729.1 1412,724.6 1427,725.7 1438,725.8 1481,728.7 1488,714.3 1586,711.3 1593,709.0 1702,706.7 1774,705.3 2063,696.3 2081,695.8 2092,706.3 2100,709.3 2122,716.1 2143,733.7 2154,733.7 2165,733.9 2208,723.8 2230,718.9 2263,796.7 2274,822.5 2306,820.3 2310,820.9 2317,829.3 2335,831.1 2364,826.5 2389,815.6 2404,809.5 2407,798.2 2462,792.7 2527,787.4 2545,801.8 2570,801.1 2581,801.2 2606,800.9 2646,805.6 2679,799.9 2680,799.2 2711,796.8 2751,686.8 2762,685.2 2897,679.0"/><polyline fill="none" stroke="#c9b7c0" stroke-width="2.2" stroke-opacity="0.29" stroke-linejoin="round" points="1345,737.5 1412,733.4 1427,734.5 1438,734.3 1481,736.9 1488,723.3 1586,720.3 1593,718.1 1702,715.8 1774,714.4 2063,705.5 2081,705.0 2092,715.0 2100,717.8 2122,724.2 2143,740.9 2154,740.9 2165,741.2 2208,732.1 2230,727.8 2263,801.6 2274,826.1 2306,824.3 2310,825.4 2317,834.3 2335,838.5 2364,833.8 2389,823.2 2404,817.4 2407,806.7 2462,801.2 2527,796.0 2545,809.5 2570,808.8 2581,809.1 2606,808.9 2646,813.6 2679,802.9 2680,802.0 2711,800.0 2751,696.5 2762,694.4 2897,688.4"/><polyline fill="none" stroke="#b09da7" stroke-width="2.2" stroke-opacity="0.26" stroke-linejoin="round" points="1345,739.9 1412,735.8 1427,736.9 1438,736.7 1481,739.3 1488,725.7 1586,722.7 1593,720.5 1702,718.2 1774,716.8 2063,708.0 2081,707.4 2092,717.4 2100,720.2 2122,726.7 2143,743.3 2154,743.4 2165,743.6 2208,734.5 2230,730.2 2263,804.0 2274,828.5 2306,826.7 2310,827.8 2317,836.7 2335,840.9 2364,836.2 2389,825.7 2404,819.8 2407,809.1 2462,803.6 2527,798.5 2545,811.9 2570,811.2 2581,811.6 2606,811.3 2646,816.0 2679,805.4 2680,804.4 2711,802.4 2751,698.9 2762,696.9 2897,690.9"/><polyline fill="none" stroke="#c9b7c0" stroke-width="2.2" stroke-opacity="0.20" stroke-linejoin="round" points="1345,748.3 1412,744.6 1427,745.7 1438,745.1 1481,747.5 1488,734.7 1586,731.7 1593,729.6 1702,727.3 1774,725.9 2063,717.2 2081,716.7 2092,726.1 2100,728.7 2122,734.8 2143,750.5 2154,750.6 2165,751.0 2208,742.8 2230,739.0 2263,809.0 2274,832.2 2306,830.8 2310,832.3 2317,841.8 2335,848.3 2364,843.5 2389,833.3 2404,827.7 2407,817.6 2462,812.1 2527,807.1 2545,819.7 2570,818.9 2581,819.5 2606,819.4 2646,823.9 2679,808.4 2680,807.2 2711,805.7 2751,708.7 2762,706.1 2897,700.4"/><polyline fill="none" stroke="#b09da7" stroke-width="2.2" stroke-opacity="0.18" stroke-linejoin="round" points="1345,750.7 1412,747.1 1427,748.1 1438,747.6 1481,749.9 1488,737.1 1586,734.1 1593,732.0 1702,729.7 1774,728.3 2063,719.6 2081,719.1 2092,728.5 2100,731.1 2122,737.2 2143,753.0 2154,753.0 2165,753.4 2208,745.2 2230,741.5 2263,811.4 2274,834.6 2306,833.2 2310,834.8 2317,844.2 2335,850.7 2364,845.9 2389,835.7 2404,830.1 2407,820.1 2462,814.6 2527,809.5 2545,822.1 2570,821.3 2581,821.9 2606,821.8 2646,826.4 2679,810.9 2680,809.7 2711,808.1 2751,711.1 2762,708.5 2897,702.8"/><polyline fill="none" stroke="#c9b7c0" stroke-width="2.2" stroke-opacity="0.22" stroke-linejoin="round" points="1345,759.1 1412,755.9 1427,756.9 1438,756.0 1481,758.2 1488,746.1 1586,743.1 1593,741.2 1702,738.7 1774,737.3 2063,728.8 2081,728.4 2092,737.2 2100,739.6 2122,745.4 2143,760.2 2154,760.2 2165,760.7 2208,753.5 2230,750.3 2263,816.4 2274,838.2 2306,837.2 2310,839.3 2317,849.2 2335,858.1 2364,853.2 2389,843.3 2404,838.0 2407,828.5 2462,823.0 2527,818.1 2545,829.8 2570,829.0 2581,829.8 2606,829.8 2646,834.3 2679,813.9 2680,812.5 2711,811.4 2751,720.9 2762,717.8 2897,712.3"/><polyline fill="none" stroke="#b09da7" stroke-width="2.2" stroke-opacity="0.20" stroke-linejoin="round" points="1345,761.6 1412,758.3 1427,759.3 1438,758.4 1481,760.6 1488,748.5 1586,745.5 1593,743.6 1702,741.1 1774,739.7 2063,731.2 2081,730.8 2092,739.6 2100,742.0 2122,747.8 2143,762.6 2154,762.7 2165,763.1 2208,755.9 2230,752.7 2263,818.8 2274,840.6 2306,839.6 2310,841.7 2317,851.6 2335,860.5 2364,855.6 2389,845.7 2404,840.4 2407,831.0 2462,825.5 2527,820.5 2545,832.3 2570,831.5 2581,832.2 2606,832.3 2646,836.7 2679,816.3 2680,814.9 2711,813.8 2751,723.3 2762,720.2 2897,714.7"/><polyline fill="none" stroke="#c9b7c0" stroke-width="2.2" stroke-opacity="0.21" stroke-linejoin="round" points="1345,770.0 1412,767.1 1427,768.1 1438,766.9 1481,768.8 1488,757.5 1586,754.5 1593,752.7 1702,750.2 1774,748.8 2063,740.5 2081,740.0 2092,748.2 2100,750.5 2122,756.0 2143,769.8 2154,769.9 2165,770.4 2208,764.2 2230,761.5 2263,823.7 2274,844.2 2306,843.7 2310,846.2 2317,856.7 2335,867.9 2364,862.9 2389,853.4 2404,848.3 2407,839.5 2462,834.0 2527,829.1 2545,840.0 2570,839.2 2581,840.2 2606,840.3 2646,844.7 2679,819.4 2680,817.7 2711,817.0 2751,733.0 2762,729.4 2897,724.2"/><polyline fill="none" stroke="#b09da7" stroke-width="2.2" stroke-opacity="0.19" stroke-linejoin="round" points="1345,772.4 1412,769.5 1427,770.5 1438,769.3 1481,771.2 1488,759.9 1586,756.9 1593,755.1 1702,752.6 1774,751.2 2063,742.9 2081,742.5 2092,750.7 2100,753.0 2122,758.4 2143,772.2 2154,772.3 2165,772.9 2208,766.6 2230,764.0 2263,826.2 2274,846.6 2306,846.1 2310,848.6 2317,859.1 2335,870.3 2364,865.3 2389,855.8 2404,850.7 2407,841.9 2462,836.4 2527,831.5 2545,842.4 2570,841.6 2581,842.6 2606,842.7 2646,847.1 2679,821.8 2680,820.1 2711,819.5 2751,735.5 2762,731.8 2897,726.6"/><polyline fill="none" stroke="#c9b7c0" stroke-width="2.2" stroke-opacity="0.27" stroke-linejoin="round" points="1345,780.8 1412,778.3 1427,779.3 1438,777.7 1481,779.4 1488,768.9 1586,765.9 1593,764.2 1702,761.7 1774,760.2 2063,752.1 2081,751.7 2092,759.3 2100,761.5 2122,766.6 2143,779.4 2154,779.5 2165,780.2 2208,774.9 2230,772.8 2263,831.1 2274,850.3 2306,850.1 2310,853.1 2317,864.1 2335,877.6 2364,872.7 2389,863.4 2404,858.6 2407,850.4 2462,844.9 2527,840.1 2545,850.2 2570,849.3 2581,850.5 2606,850.8 2646,855.1 2679,824.9 2680,822.9 2711,822.7 2751,745.2 2762,741.1 2897,736.1"/><polyline fill="none" stroke="#b09da7" stroke-width="2.2" stroke-opacity="0.24" stroke-linejoin="round" points="1345,783.2 1412,780.8 1427,781.7 1438,780.2 1481,781.8 1488,771.4 1586,768.3 1593,766.6 1702,764.1 1774,762.7 2063,754.5 2081,754.1 2092,761.7 2100,763.9 2122,769.0 2143,781.9 2154,782.0 2165,782.6 2208,777.3 2230,775.2 2263,833.5 2274,852.7 2306,852.5 2310,855.6 2317,866.5 2335,880.1 2364,875.1 2389,865.8 2404,861.0 2407,852.8 2462,847.3 2527,842.5 2545,852.6 2570,851.7 2581,852.9 2606,853.2 2646,857.5 2679,827.3 2680,825.4 2711,825.1 2751,747.6 2762,743.5 2897,738.5"/><polyline fill="none" stroke="#c9b7c0" stroke-width="2.2" stroke-opacity="0.21" stroke-linejoin="round" points="1345,791.6 1412,789.6 1427,790.5 1438,788.6 1481,790.1 1488,780.4 1586,777.3 1593,775.7 1702,773.1 1774,771.7 2063,763.8 2081,763.4 2092,770.4 2100,772.4 2122,777.1 2143,789.1 2154,789.2 2165,789.9 2208,785.6 2230,784.1 2263,838.5 2274,856.3 2306,856.6 2310,860.1 2317,871.5 2335,887.4 2364,882.4 2389,873.5 2404,868.9 2407,861.3 2462,855.8 2527,851.1 2545,860.3 2570,859.4 2581,860.8 2606,861.3 2646,865.5 2679,830.4 2680,828.2 2711,828.4 2751,757.4 2762,752.8 2897,748.0"/><polyline fill="none" stroke="#b09da7" stroke-width="2.2" stroke-opacity="0.19" stroke-linejoin="round" points="1345,794.1 1412,792.0 1427,792.9 1438,791.0 1481,792.5 1488,782.8 1586,779.8 1593,778.2 1702,775.5 1774,774.1 2063,766.2 2081,765.8 2092,772.8 2100,774.8 2122,779.6 2143,791.5 2154,791.6 2165,792.3 2208,788.0 2230,786.5 2263,840.9 2274,858.7 2306,859.0 2310,862.5 2317,874.0 2335,889.8 2364,884.8 2389,875.9 2404,871.3 2407,863.7 2462,858.2 2527,853.5 2545,862.8 2570,861.9 2581,863.3 2606,863.7 2646,867.9 2679,832.8 2680,830.6 2711,830.8 2751,759.8 2762,755.2 2897,750.4"/><polyline fill="none" stroke="#c9b7c0" stroke-width="2.2" stroke-opacity="0.25" stroke-linejoin="round" points="1345,802.5 1412,800.8 1427,801.7 1438,799.5 1481,800.7 1488,791.8 1586,788.8 1593,787.3 1702,784.6 1774,783.2 2063,775.4 2081,775.1 2092,781.5 2100,783.3 2122,787.7 2143,798.7 2154,798.9 2165,799.7 2208,796.3 2230,795.3 2263,845.9 2274,862.3 2306,863.0 2310,867.0 2317,879.0 2335,897.2 2364,892.1 2389,883.5 2404,879.2 2407,872.2 2462,866.7 2527,862.1 2545,870.5 2570,869.6 2581,871.2 2606,871.7 2646,875.8 2679,835.8 2680,833.4 2711,834.0 2751,769.6 2762,764.4 2897,759.9"/><polyline fill="none" stroke="#b09da7" stroke-width="2.2" stroke-opacity="0.23" stroke-linejoin="round" points="1345,804.9 1412,803.2 1427,804.1 1438,801.9 1481,803.1 1488,794.2 1586,791.2 1593,789.7 1702,787.0 1774,785.6 2063,777.8 2081,777.5 2092,783.9 2100,785.7 2122,790.1 2143,801.1 2154,801.3 2165,802.1 2208,798.7 2230,797.7 2263,848.3 2274,864.8 2306,865.4 2310,869.4 2317,881.4 2335,899.6 2364,894.5 2389,885.9 2404,881.6 2407,874.6 2462,869.1 2527,864.5 2545,872.9 2570,872.0 2581,873.6 2606,874.1 2646,878.3 2679,838.3 2680,835.8 2711,836.5 2751,772.0 2762,766.8 2897,762.4"/><polyline fill="none" stroke="#c9b7c0" stroke-width="2.2" stroke-opacity="0.23" stroke-linejoin="round" points="1345,813.3 1412,812.0 1427,812.9 1438,810.3 1481,811.3 1488,803.2 1586,800.2 1593,798.8 1702,796.0 1774,794.6 2063,787.0 2081,786.8 2092,792.6 2100,794.2 2122,798.3 2143,808.4 2154,808.5 2165,809.4 2208,807.0 2230,806.6 2263,853.2 2274,868.4 2306,869.5 2310,873.9 2317,886.4 2335,907.0 2364,901.8 2389,893.5 2404,889.5 2407,883.1 2462,877.6 2527,873.1 2545,880.7 2570,879.7 2581,881.5 2606,882.2 2646,886.2 2679,841.3 2680,838.7 2711,839.7 2751,781.8 2762,776.1 2897,771.9"/><polyline fill="none" stroke="#b09da7" stroke-width="2.2" stroke-opacity="0.21" stroke-linejoin="round" points="1345,815.7 1412,814.5 1427,815.3 1438,812.8 1481,813.7 1488,805.6 1586,802.6 1593,801.2 1702,798.5 1774,797.0 2063,789.5 2081,789.2 2092,795.0 2100,796.7 2122,800.7 2143,810.8 2154,810.9 2165,811.8 2208,809.4 2230,809.0 2263,855.7 2274,870.8 2306,871.9 2310,876.4 2317,888.8 2335,909.4 2364,904.2 2389,896.0 2404,891.9 2407,885.5 2462,880.0 2527,875.6 2545,883.1 2570,882.1 2581,883.9 2606,884.6 2646,888.6 2679,843.8 2680,841.1 2711,842.1 2751,784.2 2762,778.5 2897,774.3"/><polyline fill="none" stroke="#c9b7c0" stroke-width="2.2" stroke-opacity="0.36" stroke-linejoin="round" points="1345,824.1 1412,823.3 1427,824.1 1438,821.2 1481,821.9 1488,814.6 1586,811.6 1593,810.3 1702,807.5 1774,806.1 2063,798.7 2081,798.4 2092,803.7 2100,805.2 2122,808.9 2143,818.0 2154,818.2 2165,819.1 2208,817.7 2230,817.8 2263,860.6 2274,874.4 2306,875.9 2310,880.9 2317,893.9 2335,916.8 2364,911.5 2389,903.6 2404,899.8 2407,894.0 2462,888.5 2527,884.2 2545,890.8 2570,889.8 2581,891.8 2606,892.7 2646,896.6 2679,846.8 2680,843.9 2711,845.4 2751,793.9 2762,787.7 2897,783.8"/><polyline fill="none" stroke="#b09da7" stroke-width="2.2" stroke-opacity="0.32" stroke-linejoin="round" points="1345,826.5 1412,825.7 1427,826.5 1438,823.6 1481,824.4 1488,817.0 1586,814.0 1593,812.8 1702,809.9 1774,808.5 2063,801.1 2081,800.8 2092,806.1 2100,807.6 2122,811.3 2143,820.4 2154,820.6 2165,821.6 2208,820.1 2230,820.3 2263,863.0 2274,876.8 2306,878.4 2310,883.3 2317,896.3 2335,919.2 2364,914.0 2389,906.0 2404,902.2 2407,896.4 2462,890.9 2527,886.6 2545,893.2 2570,892.2 2581,894.3 2606,895.1 2646,899.0 2679,849.2 2680,846.3 2711,847.8 2751,796.3 2762,790.2 2897,786.2"/><polyline fill="none" stroke="#c9b7c0" stroke-width="2.2" stroke-opacity="0.26" stroke-linejoin="round" points="1345,835.0 1412,834.5 1427,835.3 1438,832.1 1481,832.6 1488,826.0 1586,823.0 1593,821.9 1702,819.0 1774,817.6 2063,810.3 2081,810.1 2092,814.8 2100,816.1 2122,819.5 2143,827.6 2154,827.8 2165,828.9 2208,828.4 2230,829.1 2263,868.0 2274,880.5 2306,882.4 2310,887.8 2317,901.3 2335,926.5 2364,921.3 2389,913.6 2404,910.1 2407,904.9 2462,899.4 2527,895.2 2545,901.0 2570,900.0 2581,902.2 2606,903.1 2646,907.0 2679,852.3 2680,849.1 2711,851.1 2751,806.1 2762,799.4 2897,795.7"/><polyline fill="none" stroke="#b09da7" stroke-width="2.2" stroke-opacity="0.23" stroke-linejoin="round" points="1345,837.4 1412,836.9 1427,837.8 1438,834.5 1481,835.0 1488,828.5 1586,825.4 1593,824.3 1702,821.4 1774,820.0 2063,812.8 2081,812.5 2092,817.2 2100,818.5 2122,821.9 2143,830.0 2154,830.2 2165,831.3 2208,830.8 2230,831.5 2263,870.4 2274,882.9 2306,884.8 2310,890.2 2317,903.7 2335,929.0 2364,923.7 2389,916.1 2404,912.5 2407,907.3 2462,901.8 2527,897.6 2545,903.4 2570,902.4 2581,904.6 2606,905.6 2646,909.4 2679,854.7 2680,851.5 2711,853.5 2751,808.5 2762,801.8 2897,798.1"/><polyline fill="none" stroke="#c9b7c0" stroke-width="2.2" stroke-opacity="0.26" stroke-linejoin="round" points="1345,845.8 1412,845.7 1427,846.5 1438,842.9 1481,843.2 1488,837.5 1586,834.4 1593,833.4 1702,830.4 1774,829.0 2063,822.0 2081,821.8 2092,825.9 2100,827.0 2122,830.0 2143,837.3 2154,837.5 2165,838.6 2208,839.1 2230,840.4 2263,875.4 2274,886.5 2306,888.8 2310,894.7 2317,908.8 2335,936.3 2364,931.0 2389,923.7 2404,920.4 2407,915.8 2462,910.3 2527,906.2 2545,911.2 2570,910.1 2581,912.5 2606,913.6 2646,917.4 2679,857.8 2680,854.4 2711,856.7 2751,818.3 2762,811.1 2897,807.6"/><polyline fill="none" stroke="#b09da7" stroke-width="2.2" stroke-opacity="0.23" stroke-linejoin="round" points="1345,848.2 1412,848.2 1427,849.0 1438,845.4 1481,845.6 1488,839.9 1586,836.8 1593,835.8 1702,832.9 1774,831.4 2063,824.4 2081,824.2 2092,828.3 2100,829.4 2122,832.5 2143,839.7 2154,839.9 2165,841.1 2208,841.5 2230,842.8 2263,877.8 2274,888.9 2306,891.3 2310,897.2 2317,911.2 2335,938.7 2364,933.4 2389,926.1 2404,922.8 2407,918.2 2462,912.7 2527,908.6 2545,913.6 2570,912.5 2581,914.9 2606,916.0 2646,919.8 2679,860.2 2680,856.8 2711,859.2 2751,820.7 2762,813.5 2897,810.0"/><polyline fill="none" stroke="#c9b7c0" stroke-width="2.2" stroke-opacity="0.18" stroke-linejoin="round" points="1345,856.6 1412,857.0 1427,857.8 1438,853.8 1481,853.8 1488,848.9 1586,845.8 1593,844.9 1702,841.9 1774,840.5 2063,833.6 2081,833.4 2092,837.0 2100,837.9 2122,840.6 2143,846.9 2154,847.1 2165,848.4 2208,849.8 2230,851.6 2263,882.7 2274,892.5 2306,895.3 2310,901.7 2317,916.2 2335,946.1 2364,940.7 2389,933.7 2404,930.7 2407,926.7 2462,921.2 2527,917.2 2545,921.3 2570,920.2 2581,922.9 2606,924.1 2646,927.7 2679,863.3 2680,859.6 2711,862.4 2751,830.4 2762,822.7 2897,819.5"/><polyline fill="none" stroke="#b09da7" stroke-width="2.2" stroke-opacity="0.17" stroke-linejoin="round" points="1345,859.0 1412,859.4 1427,860.2 1438,856.2 1481,856.3 1488,851.3 1586,848.3 1593,847.4 1702,844.3 1774,842.9 2063,836.0 2081,835.9 2092,839.4 2100,840.4 2122,843.0 2143,849.3 2154,849.5 2165,850.8 2208,852.2 2230,854.0 2263,885.2 2274,895.0 2306,897.7 2310,904.1 2317,918.6 2335,948.5 2364,943.1 2389,936.1 2404,933.1 2407,929.1 2462,923.7 2527,919.6 2545,923.7 2570,922.6 2581,925.3 2606,926.5 2646,930.2 2679,865.7 2680,862.0 2711,864.8 2751,832.9 2762,825.1 2897,821.9"/><polyline fill="none" stroke="#c9b7c0" stroke-width="2.2" stroke-opacity="0.26" stroke-linejoin="round" points="1345,867.5 1412,868.2 1427,869.0 1438,864.7 1481,864.5 1488,860.3 1586,857.3 1593,856.5 1702,853.4 1774,851.9 2063,845.3 2081,845.1 2092,848.0 2100,848.9 2122,851.2 2143,856.5 2154,856.8 2165,858.1 2208,860.5 2230,862.9 2263,890.1 2274,898.6 2306,901.7 2310,908.6 2317,923.6 2335,955.9 2364,950.4 2389,943.8 2404,941.0 2407,937.6 2462,932.2 2527,928.2 2545,931.5 2570,930.3 2581,933.2 2606,934.5 2646,938.1 2679,868.7 2680,864.8 2711,868.1 2751,842.6 2762,834.4 2897,831.4"/><polyline fill="none" stroke="#b09da7" stroke-width="2.2" stroke-opacity="0.24" stroke-linejoin="round" points="1345,869.9 1412,870.6 1427,871.4 1438,867.1 1481,866.9 1488,862.7 1586,859.7 1593,858.9 1702,855.8 1774,854.4 2063,847.7 2081,847.5 2092,850.5 2100,851.3 2122,853.6 2143,858.9 2154,859.2 2165,860.5 2208,862.9 2230,865.3 2263,892.5 2274,901.0 2306,904.2 2310,911.0 2317,926.1 2335,958.3 2364,952.8 2389,946.2 2404,943.4 2407,940.1 2462,934.6 2527,930.6 2545,933.9 2570,932.8 2581,935.6 2606,937.0 2646,940.5 2679,871.2 2680,867.2 2711,870.5 2751,845.0 2762,836.8 2897,833.8"/><polyline fill="none" stroke="#c9b7c0" stroke-width="2.2" stroke-opacity="0.35" stroke-linejoin="round" points="1345,878.3 1412,879.4 1427,880.2 1438,875.5 1481,875.1 1488,871.7 1586,868.7 1593,868.0 1702,864.8 1774,863.4 2063,856.9 2081,856.8 2092,859.1 2100,859.8 2122,861.8 2143,866.2 2154,866.4 2165,867.9 2208,871.2 2230,874.1 2263,897.5 2274,904.6 2306,908.2 2310,915.5 2317,931.1 2335,965.7 2364,960.1 2389,953.8 2404,951.3 2407,948.5 2462,943.1 2527,939.2 2545,941.7 2570,940.5 2581,943.5 2606,945.0 2646,948.5 2679,874.2 2680,870.1 2711,873.8 2751,854.8 2762,846.1 2897,843.3"/><polyline fill="none" stroke="#b09da7" stroke-width="2.2" stroke-opacity="0.32" stroke-linejoin="round" points="1345,880.7 1412,881.9 1427,882.6 1438,878.0 1481,877.5 1488,874.1 1586,871.1 1593,870.4 1702,867.3 1774,865.8 2063,859.3 2081,859.2 2092,861.6 2100,862.2 2122,864.2 2143,868.6 2154,868.8 2165,870.3 2208,873.6 2230,876.5 2263,899.9 2274,907.0 2306,910.6 2310,918.0 2317,933.5 2335,968.1 2364,962.6 2389,956.2 2404,953.8 2407,951.0 2462,945.5 2527,941.6 2545,944.1 2570,942.9 2581,946.0 2606,947.4 2646,950.9 2679,876.7 2680,872.5 2711,876.2 2751,857.2 2762,848.5 2897,845.8"/><polyline fill="none" stroke="#c9b7c0" stroke-width="2.2" stroke-opacity="0.38" stroke-linejoin="round" points="1345,889.1 1412,890.7 1427,891.4 1438,886.4 1481,885.7 1488,883.1 1586,880.1 1593,879.5 1702,876.3 1774,874.9 2063,868.6 2081,868.5 2092,870.2 2100,870.7 2122,872.4 2143,875.8 2154,876.0 2165,877.6 2208,881.9 2230,885.4 2263,904.9 2274,910.6 2306,914.6 2310,922.5 2317,938.5 2335,975.5 2364,969.9 2389,963.9 2404,961.6 2407,959.4 2462,954.0 2527,950.2 2545,951.8 2570,950.6 2581,953.9 2606,955.5 2646,958.9 2679,879.7 2680,875.3 2711,879.4 2751,867.0 2762,857.7 2897,855.3"/><polyline fill="none" stroke="#b09da7" stroke-width="2.2" stroke-opacity="0.34" stroke-linejoin="round" points="1345,891.5 1412,893.1 1427,893.8 1438,888.8 1481,888.2 1488,885.6 1586,882.5 1593,881.9 1702,878.7 1774,877.3 2063,871.0 2081,870.9 2092,872.6 2100,873.1 2122,874.8 2143,878.2 2154,878.5 2165,880.0 2208,884.3 2230,887.8 2263,907.3 2274,913.1 2306,917.1 2310,924.9 2317,940.9 2335,977.9 2364,972.3 2389,966.3 2404,964.1 2407,961.9 2462,956.4 2527,952.7 2545,954.2 2570,953.0 2581,956.3 2606,957.9 2646,961.3 2679,882.1 2680,877.7 2711,881.8 2751,869.4 2762,860.1 2897,857.7"/><polyline fill="none" stroke="#c9b7c0" stroke-width="2.2" stroke-opacity="0.22" stroke-linejoin="round" points="1345,899.9 1412,901.9 1427,902.6 1438,897.3 1481,896.4 1488,894.6 1586,891.5 1593,891.1 1702,887.8 1774,886.3 2063,880.2 2081,880.1 2092,881.3 2100,881.6 2122,882.9 2143,885.4 2154,885.7 2165,887.3 2208,892.6 2230,896.6 2263,912.2 2274,916.7 2306,921.1 2310,929.4 2317,946.0 2335,985.2 2364,979.6 2389,973.9 2404,971.9 2407,970.4 2462,964.9 2527,961.2 2545,962.0 2570,960.7 2581,964.2 2606,965.9 2646,969.2 2679,885.2 2680,880.5 2711,885.1 2751,879.1 2762,869.4 2897,867.2"/><polyline fill="none" stroke="#b09da7" stroke-width="2.2" stroke-opacity="0.20" stroke-linejoin="round" points="1345,902.4 1412,904.3 1427,905.0 1438,899.7 1481,898.8 1488,897.0 1586,893.9 1593,893.5 1702,890.2 1774,888.8 2063,882.6 2081,882.6 2092,883.7 2100,884.1 2122,885.4 2143,887.9 2154,888.1 2165,889.8 2208,895.0 2230,899.1 2263,914.7 2274,919.1 2306,923.5 2310,931.8 2317,948.4 2335,987.7 2364,982.0 2389,976.3 2404,974.4 2407,972.8 2462,967.3 2527,963.7 2545,964.4 2570,963.2 2581,966.6 2606,968.4 2646,971.7 2679,887.6 2680,883.0 2711,887.5 2751,881.6 2762,871.8 2897,869.6"/><polyline fill="none" stroke="#c9b7c0" stroke-width="2.2" stroke-opacity="0.17" stroke-linejoin="round" points="1345,910.8 1412,913.2 1427,913.8 1438,908.1 1481,907.0 1488,906.0 1586,902.9 1593,902.6 1702,899.2 1774,897.8 2063,891.9 2081,891.8 2092,892.4 2100,892.6 2122,893.5 2143,895.1 2154,895.4 2165,897.1 2208,903.3 2230,907.9 2263,919.6 2274,922.7 2306,927.5 2310,936.3 2317,953.4 2335,995.0 2364,989.3 2389,984.0 2404,982.2 2407,981.3 2462,975.8 2527,972.3 2545,972.2 2570,970.9 2581,974.6 2606,976.4 2646,979.6 2679,890.7 2680,885.8 2711,890.8 2751,891.3 2762,881.0 2897,879.1"/><polyline fill="none" stroke="#b09da7" stroke-width="2.2" stroke-opacity="0.15" stroke-linejoin="round" points="1345,913.2 1412,915.6 1427,916.2 1438,910.6 1481,909.4 1488,908.4 1586,905.3 1593,905.0 1702,901.7 1774,900.2 2063,894.3 2081,894.2 2092,894.8 2100,895.0 2122,895.9 2143,897.5 2154,897.8 2165,899.5 2208,905.7 2230,910.3 2263,922.0 2274,925.1 2306,930.0 2310,938.8 2317,955.8 2335,997.4 2364,991.7 2389,986.4 2404,984.7 2407,983.7 2462,978.2 2527,974.7 2545,974.6 2570,973.3 2581,977.0 2606,978.8 2646,982.0 2679,893.1 2680,888.2 2711,893.2 2751,893.7 2762,883.5 2897,881.5"/><polyline fill="none" stroke="#cd86aa" stroke-width="2.2" stroke-opacity="0.38" stroke-linejoin="round" points="1345,931.3 1369,932.0 1427,934.2 1438,928.5 1702,920.3 1882,916.6 2063,912.8 2100,912.7 2136,913.5 2154,914.1 2208,922.9 2263,935.7 2306,942.4 2310,951.1 2335,1007.9 2339,1007.0 2364,1007.0 2389,1002.5 2407,1001.0 2462,995.4 2534,991.5 2570,989.5 2581,993.1 2617,995.5 2635,993.2 2646,993.5 2657,963.3 2680,900.3 2715,906.2 2751,912.1 2762,901.9 2787,901.5 2897,899.6"/><polyline fill="none" stroke="#b66f93" stroke-width="2.2" stroke-opacity="0.34" stroke-linejoin="round" points="1345,933.7 1369,934.4 1427,936.6 1438,931.0 1702,922.7 1882,919.0 2063,915.2 2100,915.1 2136,915.9 2154,916.5 2208,925.4 2263,938.1 2306,944.8 2310,953.5 2335,1010.3 2339,1009.5 2364,1009.4 2389,1004.9 2407,1003.4 2462,997.8 2534,993.9 2570,991.9 2581,995.5 2617,997.9 2635,995.6 2646,995.9 2657,965.8 2680,902.7 2715,908.6 2751,914.5 2762,904.3 2787,904.0 2897,902.0"/><polyline fill="none" stroke="#cd86aa" stroke-width="2.2" stroke-opacity="0.21" stroke-linejoin="round" points="1345,941.0 1369,941.5 1427,943.4 1438,938.1 1702,929.9 1882,926.1 2063,922.0 2100,921.8 2136,922.4 2154,923.2 2208,931.9 2263,944.4 2306,950.7 2310,958.9 2335,1010.9 2339,1010.0 2364,1014.9 2389,1011.0 2407,1009.8 2462,1004.1 2534,1000.1 2570,997.9 2581,1001.2 2617,1003.2 2635,997.2 2646,996.9 2657,968.3 2680,909.5 2715,915.3 2751,920.7 2762,911.1 2787,910.7 2897,908.1"/><polyline fill="none" stroke="#b66f93" stroke-width="2.2" stroke-opacity="0.19" stroke-linejoin="round" points="1345,943.4 1369,943.9 1427,945.8 1438,940.5 1702,932.3 1882,928.5 2063,924.4 2100,924.2 2136,924.9 2154,925.6 2208,934.3 2263,946.8 2306,953.1 2310,961.3 2335,1013.4 2339,1012.5 2364,1017.3 2389,1013.4 2407,1012.2 2462,1006.5 2534,1002.5 2570,1000.4 2581,1003.6 2617,1005.6 2635,999.6 2646,999.3 2657,970.7 2680,912.0 2715,917.7 2751,923.1 2762,913.6 2787,913.1 2897,910.5"/><polyline fill="none" stroke="#cd86aa" stroke-width="2.2" stroke-opacity="0.23" stroke-linejoin="round" points="1345,950.7 1369,950.9 1427,952.6 1438,947.6 1702,939.5 1882,935.6 2063,931.3 2100,931.0 2136,931.4 2154,932.2 2208,940.8 2263,953.1 2306,959.1 2310,966.7 2335,1014.0 2339,1013.0 2364,1022.8 2389,1019.5 2407,1018.6 2462,1012.8 2534,1008.7 2570,1006.4 2581,1009.4 2617,1010.9 2635,1001.2 2646,1000.4 2657,973.2 2680,918.8 2715,924.4 2751,929.3 2762,920.4 2787,919.9 2897,916.7"/><polyline fill="none" stroke="#b66f93" stroke-width="2.2" stroke-opacity="0.21" stroke-linejoin="round" points="1345,953.2 1369,953.3 1427,955.0 1438,950.0 1702,942.0 1882,938.0 2063,933.7 2100,933.4 2136,933.8 2154,934.7 2208,943.2 2263,955.5 2306,961.5 2310,969.1 2335,1016.4 2339,1015.4 2364,1025.3 2389,1021.9 2407,1021.0 2462,1015.2 2534,1011.1 2570,1008.8 2581,1011.8 2617,1013.4 2635,1003.7 2646,1002.8 2657,975.6 2680,921.2 2715,926.8 2751,931.7 2762,922.8 2787,922.3 2897,919.1"/><polyline fill="none" stroke="#cd86aa" stroke-width="2.2" stroke-opacity="0.37" stroke-linejoin="round" points="1345,960.5 1369,960.3 1427,961.7 1438,957.2 1702,949.2 1882,945.1 2063,940.5 2100,940.1 2136,940.4 2154,941.3 2208,949.8 2263,961.8 2306,967.5 2310,974.5 2335,1017.1 2339,1016.0 2364,1030.8 2389,1028.0 2407,1027.4 2462,1021.5 2534,1017.3 2570,1014.9 2581,1017.5 2617,1018.7 2635,1005.3 2646,1003.9 2657,978.1 2680,928.1 2715,933.5 2751,937.8 2762,929.6 2787,929.0 2897,925.2"/><polyline fill="none" stroke="#b66f93" stroke-width="2.2" stroke-opacity="0.33" stroke-linejoin="round" points="1345,962.9 1369,962.7 1427,964.2 1438,959.6 1702,951.6 1882,947.5 2063,942.9 2100,942.5 2136,942.8 2154,943.7 2208,952.2 2263,964.2 2306,969.9 2310,976.9 2335,1019.5 2339,1018.4 2364,1033.2 2389,1030.4 2407,1029.8 2462,1023.9 2534,1019.7 2570,1017.3 2581,1019.9 2617,1021.1 2635,1007.7 2646,1006.3 2657,980.5 2680,930.5 2715,935.9 2751,940.3 2762,932.0 2787,931.5 2897,927.7"/><polyline fill="none" stroke="#cd86aa" stroke-width="2.2" stroke-opacity="0.18" stroke-linejoin="round" points="1345,970.2 1369,969.8 1427,970.9 1438,966.7 1702,958.8 1882,954.6 2063,949.8 2100,949.3 2136,949.3 2154,950.4 2208,958.7 2263,970.4 2306,975.8 2310,982.3 2335,1020.1 2339,1019.0 2364,1038.7 2389,1036.5 2407,1036.2 2462,1030.2 2534,1025.9 2570,1023.4 2581,1025.7 2617,1026.4 2635,1009.3 2646,1007.3 2657,983.0 2680,937.3 2715,942.6 2751,946.4 2762,938.8 2787,938.2 2897,933.8"/><polyline fill="none" stroke="#b66f93" stroke-width="2.2" stroke-opacity="0.16" stroke-linejoin="round" points="1345,972.6 1369,972.2 1427,973.3 1438,969.1 1702,961.2 1882,957.0 2063,952.2 2100,951.7 2136,951.8 2154,952.8 2208,961.1 2263,972.9 2306,978.2 2310,984.7 2335,1022.6 2339,1021.4 2364,1041.1 2389,1038.9 2407,1038.6 2462,1032.7 2534,1028.3 2570,1025.8 2581,1028.1 2617,1028.8 2635,1011.7 2646,1009.7 2657,985.4 2680,939.8 2715,945.0 2751,948.8 2762,941.2 2787,940.6 2897,936.2"/><polyline fill="none" stroke="#cd86aa" stroke-width="2.2" stroke-opacity="0.19" stroke-linejoin="round" points="1345,979.9 1369,979.2 1427,980.1 1438,976.2 1702,968.4 1882,964.1 2063,959.0 2100,958.4 2136,958.3 2154,959.5 2208,967.6 2263,979.1 2306,984.2 2310,990.0 2335,1023.2 2339,1022.0 2364,1046.6 2389,1045.0 2407,1045.0 2462,1038.9 2534,1034.5 2570,1031.8 2581,1033.8 2617,1034.1 2635,1013.3 2646,1010.8 2657,987.9 2680,946.6 2715,951.7 2751,955.0 2762,948.0 2787,947.4 2897,942.4"/><polyline fill="none" stroke="#b66f93" stroke-width="2.2" stroke-opacity="0.17" stroke-linejoin="round" points="1345,982.3 1369,981.6 1427,982.5 1438,978.7 1702,970.8 1882,966.5 2063,961.4 2100,960.9 2136,960.7 2154,961.9 2208,970.0 2263,981.5 2306,986.6 2310,992.5 2335,1025.6 2339,1024.4 2364,1049.1 2389,1047.5 2407,1047.4 2462,1041.4 2534,1036.9 2570,1034.3 2581,1036.3 2617,1036.6 2635,1015.7 2646,1013.2 2657,990.3 2680,949.0 2715,954.1 2751,957.4 2762,950.5 2787,949.8 2897,944.8"/><polyline fill="none" stroke="#cd86aa" stroke-width="2.2" stroke-opacity="0.33" stroke-linejoin="round" points="1345,989.6 1369,988.6 1427,989.3 1438,985.8 1702,978.0 1882,973.6 2063,968.3 2100,967.6 2136,967.3 2154,968.5 2208,976.6 2263,987.8 2306,992.6 2310,997.8 2335,1026.3 2339,1024.9 2364,1054.6 2389,1053.5 2407,1053.8 2462,1047.6 2534,1043.1 2570,1040.3 2581,1042.0 2617,1041.9 2635,1017.4 2646,1014.2 2657,992.8 2680,955.9 2715,960.8 2751,963.6 2762,957.3 2787,956.5 2897,950.9"/><polyline fill="none" stroke="#b66f93" stroke-width="2.2" stroke-opacity="0.29" stroke-linejoin="round" points="1345,992.0 1369,991.0 1427,991.7 1438,988.2 1702,980.4 1882,976.0 2063,970.7 2100,970.0 2136,969.7 2154,971.0 2208,979.0 2263,990.2 2306,995.0 2310,1000.3 2335,1028.7 2339,1027.4 2364,1057.0 2389,1056.0 2407,1056.2 2462,1050.1 2534,1045.5 2570,1042.7 2581,1044.4 2617,1044.3 2635,1019.8 2646,1016.7 2657,995.2 2680,958.3 2715,963.2 2751,966.0 2762,959.7 2787,958.9 2897,953.4"/><polyline fill="none" stroke="#cd86aa" stroke-width="2.2" stroke-opacity="0.22" stroke-linejoin="round" points="1345,999.3 1369,998.0 1427,998.5 1438,995.3 1702,987.6 1882,983.0 2063,977.5 2100,976.8 2136,976.2 2154,977.6 2208,985.5 2263,996.5 2306,1000.9 2310,1005.6 2335,1029.3 2339,1027.9 2364,1062.5 2389,1062.0 2407,1062.6 2462,1056.3 2534,1051.7 2570,1048.8 2581,1050.2 2617,1049.6 2635,1021.4 2646,1017.7 2657,997.7 2680,965.2 2715,969.9 2751,972.2 2762,966.5 2787,965.7 2897,959.5"/><polyline fill="none" stroke="#b66f93" stroke-width="2.2" stroke-opacity="0.20" stroke-linejoin="round" points="1345,1001.7 1369,1000.5 1427,1000.9 1438,997.7 1702,990.0 1882,985.5 2063,979.9 2100,979.2 2136,978.7 2154,980.0 2208,987.9 2263,998.9 2306,1003.3 2310,1008.1 2335,1031.8 2339,1030.4 2364,1064.9 2389,1064.5 2407,1065.0 2462,1058.8 2534,1054.1 2570,1051.2 2581,1052.6 2617,1052.0 2635,1023.8 2646,1020.1 2657,1000.1 2680,967.6 2715,972.3 2751,974.6 2762,968.9 2787,968.1 2897,961.9"/><polyline fill="none" stroke="#cd86aa" stroke-width="2.2" stroke-opacity="0.25" stroke-linejoin="round" points="1345,1009.0 1369,1007.5 1427,1007.7 1438,1004.9 1702,997.2 1882,992.5 2063,986.8 2100,985.9 2136,985.2 2154,986.7 2208,994.4 2263,1005.2 2306,1009.3 2310,1013.4 2335,1032.4 2339,1030.9 2364,1070.5 2389,1070.5 2407,1071.4 2462,1065.1 2534,1060.3 2570,1057.3 2581,1058.3 2617,1057.3 2635,1025.4 2646,1021.2 2657,1002.6 2680,974.4 2715,979.0 2751,980.8 2762,975.7 2787,974.9 2897,968.1"/><polyline fill="none" stroke="#b66f93" stroke-width="2.2" stroke-opacity="0.23" stroke-linejoin="round" points="1345,1011.4 1369,1009.9 1427,1010.1 1438,1007.3 1702,999.6 1882,995.0 2063,989.2 2100,988.3 2136,987.6 2154,989.1 2208,996.9 2263,1007.6 2306,1011.7 2310,1015.9 2335,1034.8 2339,1033.3 2364,1072.9 2389,1073.0 2407,1073.8 2462,1067.5 2534,1062.7 2570,1059.7 2581,1060.7 2617,1059.8 2635,1027.8 2646,1023.6 2657,1005.0 2680,976.8 2715,981.4 2751,983.2 2762,978.1 2787,977.3 2897,970.5"/><polyline fill="none" stroke="#cd86aa" stroke-width="2.2" stroke-opacity="0.25" stroke-linejoin="round" points="1345,1018.7 1369,1016.9 1427,1016.8 1438,1014.4 1702,1006.8 1882,1002.0 2063,996.0 2100,995.1 2136,994.2 2154,995.8 2208,1003.4 2263,1013.9 2306,1017.6 2310,1021.2 2335,1035.5 2339,1033.9 2364,1078.4 2389,1079.1 2407,1080.2 2462,1073.8 2534,1068.9 2570,1065.7 2581,1066.5 2617,1065.1 2635,1029.4 2646,1024.6 2657,1007.5 2680,983.7 2715,988.1 2751,989.3 2762,984.9 2787,984.0 2897,976.6"/><polyline fill="none" stroke="#b66f93" stroke-width="2.2" stroke-opacity="0.23" stroke-linejoin="round" points="1345,1021.1 1369,1019.3 1427,1019.3 1438,1016.8 1702,1009.2 1882,1004.5 2063,998.4 2100,997.5 2136,996.6 2154,998.2 2208,1005.8 2263,1016.3 2306,1020.1 2310,1023.6 2335,1037.9 2339,1036.3 2364,1080.8 2389,1081.5 2407,1082.6 2462,1076.2 2534,1071.3 2570,1068.2 2581,1068.9 2617,1067.5 2635,1031.9 2646,1027.1 2657,1010.0 2680,986.1 2715,990.5 2751,991.8 2762,987.4 2787,986.4 2897,979.0"/><polyline fill="none" stroke="#cd86aa" stroke-width="2.2" stroke-opacity="0.35" stroke-linejoin="round" points="1345,1028.4 1369,1026.3 1427,1026.0 1438,1023.9 1702,1016.4 1882,1011.5 2063,1005.3 2100,1004.2 2136,1003.2 2154,1004.8 2208,1012.3 2263,1022.6 2306,1026.0 2310,1029.0 2335,1038.5 2339,1036.9 2364,1086.3 2389,1087.6 2407,1089.0 2462,1082.5 2534,1077.5 2570,1074.2 2581,1074.6 2617,1072.8 2635,1033.5 2646,1028.1 2657,1012.4 2680,993.0 2715,997.2 2751,997.9 2762,994.2 2787,993.2 2897,985.2"/><polyline fill="none" stroke="#b66f93" stroke-width="2.2" stroke-opacity="0.31" stroke-linejoin="round" points="1345,1030.9 1369,1028.8 1427,1028.4 1438,1026.4 1702,1018.9 1882,1014.0 2063,1007.7 2100,1006.6 2136,1005.6 2154,1007.3 2208,1014.7 2263,1025.0 2306,1028.4 2310,1031.4 2335,1041.0 2339,1039.3 2364,1088.7 2389,1090.0 2407,1091.4 2462,1084.9 2534,1079.9 2570,1076.6 2581,1077.0 2617,1075.2 2635,1035.9 2646,1030.5 2657,1014.9 2680,995.4 2715,999.6 2751,1000.3 2762,996.6 2787,995.6 2897,987.6"/><polyline fill="none" stroke="#cd86aa" stroke-width="2.2" stroke-opacity="0.20" stroke-linejoin="round" points="1345,1038.2 1369,1035.8 1427,1035.2 1438,1033.5 1702,1026.0 1882,1021.0 2063,1014.5 2100,1013.4 2136,1012.1 2154,1013.9 2208,1021.2 2263,1031.2 2306,1034.4 2310,1036.8 2335,1041.6 2339,1039.9 2364,1094.3 2389,1096.1 2407,1097.8 2462,1091.2 2534,1086.1 2570,1082.7 2581,1082.8 2617,1080.6 2635,1037.5 2646,1031.6 2657,1017.4 2680,1002.2 2715,1006.3 2751,1006.5 2762,1003.4 2787,1002.3 2897,993.8"/><polyline fill="none" stroke="#b66f93" stroke-width="2.2" stroke-opacity="0.18" stroke-linejoin="round" points="1345,1040.6 1369,1038.2 1427,1037.6 1438,1035.9 1702,1028.5 1882,1023.4 2063,1016.9 2100,1015.8 2136,1014.5 2154,1016.3 2208,1023.7 2263,1033.7 2306,1036.8 2310,1039.2 2335,1044.0 2339,1042.3 2364,1096.7 2389,1098.5 2407,1100.2 2462,1093.6 2534,1088.5 2570,1085.1 2581,1085.2 2617,1083.0 2635,1039.9 2646,1034.0 2657,1019.8 2680,1004.7 2715,1008.7 2751,1008.9 2762,1005.8 2787,1004.8 2897,996.2"/><polyline fill="none" stroke="#cd86aa" stroke-width="2.2" stroke-opacity="0.35" stroke-linejoin="round" points="1345,1047.9 1369,1045.2 1427,1044.4 1438,1043.0 1702,1035.7 1882,1030.5 2063,1023.8 2100,1022.5 2136,1021.1 2154,1023.0 2208,1030.2 2263,1039.9 2306,1042.7 2310,1044.6 2335,1044.7 2339,1042.8 2364,1102.2 2389,1104.6 2407,1106.6 2462,1099.9 2534,1094.7 2570,1091.2 2581,1090.9 2617,1088.3 2635,1041.5 2646,1035.0 2657,1022.3 2680,1011.5 2715,1015.4 2751,1015.1 2762,1012.6 2787,1011.5 2897,1002.3"/><polyline fill="none" stroke="#b66f93" stroke-width="2.2" stroke-opacity="0.32" stroke-linejoin="round" points="1345,1050.3 1369,1047.6 1427,1046.8 1438,1045.4 1702,1038.1 1882,1032.9 2063,1026.2 2100,1025.0 2136,1023.5 2154,1025.4 2208,1032.6 2263,1042.4 2306,1045.2 2310,1047.0 2335,1047.1 2339,1045.3 2364,1104.6 2389,1107.0 2407,1109.0 2462,1102.3 2534,1097.1 2570,1093.6 2581,1093.4 2617,1090.7 2635,1043.9 2646,1037.4 2657,1024.7 2680,1013.9 2715,1017.8 2751,1017.5 2762,1015.0 2787,1013.9 2897,1004.7"/><polyline fill="none" stroke="#cd86aa" stroke-width="2.2" stroke-opacity="0.32" stroke-linejoin="round" points="1345,1057.6 1369,1054.6 1427,1053.6 1438,1052.6 1702,1045.3 1882,1040.0 2063,1033.0 2100,1031.7 2136,1030.1 2154,1032.1 2208,1039.1 2263,1048.6 2306,1051.1 2310,1052.4 2335,1047.7 2339,1045.8 2364,1110.1 2389,1113.1 2407,1115.4 2462,1108.6 2534,1103.3 2570,1099.6 2581,1099.1 2617,1096.0 2635,1045.5 2646,1038.5 2657,1027.2 2680,1020.8 2715,1024.5 2751,1023.7 2762,1021.8 2787,1020.7 2897,1010.9"/><polyline fill="none" stroke="#b66f93" stroke-width="2.2" stroke-opacity="0.29" stroke-linejoin="round" points="1345,1060.0 1369,1057.1 1427,1056.0 1438,1055.0 1702,1047.7 1882,1042.4 2063,1035.4 2100,1034.1 2136,1032.5 2154,1034.5 2208,1041.5 2263,1051.0 2306,1053.5 2310,1054.8 2335,1050.2 2339,1048.3 2364,1112.5 2389,1115.5 2407,1117.8 2462,1111.0 2534,1105.7 2570,1102.1 2581,1101.5 2617,1098.4 2635,1048.0 2646,1040.9 2657,1029.6 2680,1023.2 2715,1026.9 2751,1026.1 2762,1024.3 2787,1023.1 2897,1013.3"/><polyline fill="none" stroke="#cd86aa" stroke-width="2.2" stroke-opacity="0.18" stroke-linejoin="round" points="1345,1067.3 1369,1064.1 1427,1062.8 1438,1062.1 1702,1054.9 1882,1049.5 2063,1042.3 2100,1040.8 2136,1039.0 2154,1041.2 2208,1048.1 2263,1057.3 2306,1059.5 2310,1060.2 2335,1050.8 2339,1048.8 2364,1118.1 2389,1121.6 2407,1124.2 2462,1117.3 2534,1111.9 2570,1108.1 2581,1107.2 2617,1103.8 2635,1049.6 2646,1042.0 2657,1032.1 2680,1030.0 2715,1033.6 2751,1032.3 2762,1031.1 2787,1029.8 2897,1019.4"/><polyline fill="none" stroke="#b66f93" stroke-width="2.2" stroke-opacity="0.16" stroke-linejoin="round" points="1345,1069.7 1369,1066.5 1427,1065.2 1438,1064.5 1702,1057.3 1882,1051.9 2063,1044.7 2100,1043.3 2136,1041.5 2154,1043.6 2208,1050.5 2263,1059.7 2306,1061.9 2310,1062.6 2335,1053.2 2339,1051.2 2364,1120.5 2389,1124.0 2407,1126.6 2462,1119.7 2534,1114.3 2570,1110.5 2581,1109.7 2617,1106.2 2635,1052.0 2646,1044.4 2657,1034.5 2680,1032.5 2715,1036.0 2751,1034.7 2762,1033.5 2787,1032.3 2897,1021.9"/><polyline fill="none" stroke="#84829e" stroke-width="2.4" stroke-opacity="0.17" stroke-linejoin="round" points="1345,1241.0 1377,1241.1 1448,1241.0 1489,1238.3 1557,1233.8 1601,1232.1 1702,1228.0 1732,1226.8 1806,1224.3 1825,1223.4 1882,1221.2 1900,1220.5 2011,1215.8 2100,1212.1 2154,1210.0 2208,1219.1 2245,1218.1 2317,1216.8 2353,1206.3 2371,1188.9 2389,1241.0 2400,1271.5 2444,1276.6 2462,1269.6 2498,1270.5 2570,1270.0 2581,1257.8 2599,1181.1 2624,1180.5 2642,1180.7 2679,1192.8 2686,1195.1 2715,1186.5 2751,1188.9 2787,1192.0 2834,1187.3 2845,1185.5 2897,1180.5"/><polyline fill="none" stroke="#706e8a" stroke-width="2.4" stroke-opacity="0.16" stroke-linejoin="round" points="1345,1243.7 1377,1243.8 1448,1243.6 1489,1240.9 1557,1236.5 1601,1234.7 1702,1230.7 1732,1229.5 1806,1226.9 1825,1226.1 1882,1223.9 1900,1223.2 2011,1218.5 2100,1214.8 2154,1212.6 2208,1221.7 2245,1220.8 2317,1219.5 2353,1208.9 2371,1191.5 2389,1243.6 2400,1274.2 2444,1279.3 2462,1272.3 2498,1273.1 2570,1272.6 2581,1260.4 2599,1183.7 2624,1183.2 2642,1183.3 2679,1195.4 2686,1197.8 2715,1189.1 2751,1191.5 2787,1194.6 2834,1189.9 2845,1188.1 2897,1183.2"/><polyline fill="none" stroke="#84829e" stroke-width="2.4" stroke-opacity="0.21" stroke-linejoin="round" points="1345,1253.1 1377,1253.3 1448,1252.9 1489,1250.3 1557,1245.9 1601,1244.1 1702,1240.0 1732,1238.9 1806,1236.6 1825,1235.7 1882,1233.4 1900,1232.7 2011,1228.0 2100,1224.3 2154,1222.0 2208,1231.2 2245,1229.7 2317,1228.2 2353,1217.9 2371,1201.2 2389,1250.6 2400,1279.6 2444,1284.5 2462,1277.8 2498,1279.4 2570,1278.4 2581,1266.6 2599,1193.1 2624,1192.0 2642,1192.4 2679,1204.2 2686,1206.4 2715,1198.1 2751,1200.3 2787,1204.0 2834,1199.3 2845,1196.8 2897,1192.0"/><polyline fill="none" stroke="#706e8a" stroke-width="2.4" stroke-opacity="0.19" stroke-linejoin="round" points="1345,1255.7 1377,1255.9 1448,1255.6 1489,1252.9 1557,1248.5 1601,1246.7 1702,1242.7 1732,1241.5 1806,1239.2 1825,1238.3 1882,1236.1 1900,1235.4 2011,1230.7 2100,1226.9 2154,1224.6 2208,1233.8 2245,1232.4 2317,1230.8 2353,1220.6 2371,1203.8 2389,1253.2 2400,1282.3 2444,1287.1 2462,1280.4 2498,1282.1 2570,1281.1 2581,1269.2 2599,1195.8 2624,1194.7 2642,1195.0 2679,1206.8 2686,1209.1 2715,1200.8 2751,1203.0 2787,1206.6 2834,1201.9 2845,1199.4 2897,1194.7"/><polyline fill="none" stroke="#84829e" stroke-width="2.4" stroke-opacity="0.35" stroke-linejoin="round" points="1345,1265.1 1377,1265.4 1448,1264.9 1489,1262.3 1557,1257.9 1601,1256.1 1702,1252.0 1732,1250.9 1806,1248.9 1825,1247.9 1882,1245.6 1900,1244.9 2011,1240.2 2100,1236.4 2154,1234.0 2208,1243.3 2245,1241.3 2317,1239.5 2353,1229.6 2371,1213.5 2389,1260.2 2400,1287.8 2444,1292.3 2462,1285.9 2498,1288.4 2570,1286.9 2581,1275.4 2599,1205.2 2624,1203.6 2642,1204.0 2679,1215.6 2686,1217.7 2715,1209.8 2751,1211.8 2787,1216.0 2834,1211.2 2845,1208.1 2897,1203.6"/><polyline fill="none" stroke="#706e8a" stroke-width="2.4" stroke-opacity="0.31" stroke-linejoin="round" points="1345,1267.8 1377,1268.0 1448,1267.5 1489,1264.9 1557,1260.6 1601,1258.8 1702,1254.7 1732,1253.5 1806,1251.6 1825,1250.5 1882,1248.3 1900,1247.6 2011,1242.9 2100,1239.0 2154,1236.6 2208,1245.9 2245,1244.0 2317,1242.2 2353,1232.3 2371,1216.1 2389,1262.8 2400,1290.4 2444,1294.9 2462,1288.6 2498,1291.0 2570,1289.5 2581,1278.1 2599,1207.8 2624,1206.2 2642,1206.7 2679,1218.3 2686,1220.4 2715,1212.4 2751,1214.5 2787,1218.6 2834,1213.9 2845,1210.7 2897,1206.2"/><polyline fill="none" stroke="#84829e" stroke-width="2.4" stroke-opacity="0.21" stroke-linejoin="round" points="1345,1277.2 1377,1277.5 1448,1276.8 1489,1274.3 1557,1270.0 1601,1268.2 1702,1264.1 1732,1262.9 1806,1261.2 1825,1260.1 1882,1257.9 1900,1257.2 2011,1252.4 2100,1248.5 2154,1246.0 2208,1255.4 2245,1253.0 2317,1250.8 2353,1241.3 2371,1225.8 2389,1269.7 2400,1295.9 2444,1300.1 2462,1294.1 2498,1297.4 2570,1295.4 2581,1284.2 2599,1217.2 2624,1215.1 2642,1215.7 2679,1227.1 2686,1229.0 2715,1221.4 2751,1223.3 2787,1228.0 2834,1223.2 2845,1219.3 2897,1215.1"/><polyline fill="none" stroke="#706e8a" stroke-width="2.4" stroke-opacity="0.19" stroke-linejoin="round" points="1345,1279.8 1377,1280.2 1448,1279.5 1489,1276.9 1557,1272.6 1601,1270.8 1702,1266.7 1732,1265.5 1806,1263.9 1825,1262.7 1882,1260.5 1900,1259.8 2011,1255.0 2100,1251.2 2154,1248.6 2208,1258.0 2245,1255.6 2317,1253.5 2353,1243.9 2371,1228.4 2389,1272.4 2400,1298.5 2444,1302.8 2462,1296.7 2498,1300.0 2570,1298.0 2581,1286.9 2599,1219.9 2624,1217.7 2642,1218.4 2679,1229.7 2686,1231.7 2715,1224.1 2751,1225.9 2787,1230.6 2834,1225.8 2845,1222.0 2897,1217.7"/><polyline fill="none" stroke="#84829e" stroke-width="2.4" stroke-opacity="0.30" stroke-linejoin="round" points="1345,1289.2 1377,1289.7 1448,1288.8 1489,1286.2 1557,1282.0 1601,1280.2 1702,1276.1 1732,1274.9 1806,1273.6 1825,1272.3 1882,1270.1 1900,1269.4 2011,1264.6 2100,1260.7 2154,1258.0 2208,1267.5 2245,1264.6 2317,1262.2 2353,1253.0 2371,1238.0 2389,1279.3 2400,1304.0 2444,1307.9 2462,1302.2 2498,1306.3 2570,1303.8 2581,1293.0 2599,1229.3 2624,1226.6 2642,1227.4 2679,1238.5 2686,1240.4 2715,1233.1 2751,1234.7 2787,1240.0 2834,1235.2 2845,1230.6 2897,1226.6"/><polyline fill="none" stroke="#706e8a" stroke-width="2.4" stroke-opacity="0.27" stroke-linejoin="round" points="1345,1291.9 1377,1292.3 1448,1291.5 1489,1288.9 1557,1284.7 1601,1282.8 1702,1278.7 1732,1277.5 1806,1276.2 1825,1275.0 1882,1272.7 1900,1272.0 2011,1267.2 2100,1263.3 2154,1260.6 2208,1270.1 2245,1267.2 2317,1264.8 2353,1255.6 2371,1240.7 2389,1282.0 2400,1306.7 2444,1310.6 2462,1304.8 2498,1309.0 2570,1306.5 2581,1295.7 2599,1231.9 2624,1229.3 2642,1230.0 2679,1241.2 2686,1243.0 2715,1235.7 2751,1237.4 2787,1242.6 2834,1237.8 2845,1233.3 2897,1229.3"/><polyline fill="none" stroke="#84829e" stroke-width="2.4" stroke-opacity="0.20" stroke-linejoin="round" points="1345,1301.3 1377,1301.8 1448,1300.8 1489,1298.2 1557,1294.1 1601,1292.2 1702,1288.1 1732,1286.9 1806,1285.9 1825,1284.5 1882,1282.3 1900,1281.6 2011,1276.8 2100,1272.8 2154,1270.0 2208,1279.5 2245,1276.2 2317,1273.5 2353,1264.6 2371,1250.3 2389,1288.9 2400,1312.1 2444,1315.8 2462,1310.3 2498,1315.3 2570,1312.3 2581,1301.8 2599,1241.4 2624,1238.1 2642,1239.1 2679,1250.0 2686,1251.7 2715,1244.8 2751,1246.2 2787,1252.0 2834,1247.2 2845,1241.9 2897,1238.1"/><polyline fill="none" stroke="#706e8a" stroke-width="2.4" stroke-opacity="0.18" stroke-linejoin="round" points="1345,1303.9 1377,1304.5 1448,1303.4 1489,1300.9 1557,1296.7 1601,1294.9 1702,1290.7 1732,1289.5 1806,1288.5 1825,1287.2 1882,1284.9 1900,1284.2 2011,1279.4 2100,1275.5 2154,1272.6 2208,1282.2 2245,1278.8 2317,1276.2 2353,1267.3 2371,1253.0 2389,1291.6 2400,1314.8 2444,1318.4 2462,1313.0 2498,1317.9 2570,1314.9 2581,1304.5 2599,1244.0 2624,1240.8 2642,1241.7 2679,1252.6 2686,1254.3 2715,1247.4 2751,1248.9 2787,1254.6 2834,1249.8 2845,1244.6 2897,1240.8"/><polyline fill="none" stroke="#84829e" stroke-width="2.4" stroke-opacity="0.28" stroke-linejoin="round" points="1345,1313.3 1377,1314.0 1448,1312.7 1489,1310.2 1557,1306.1 1601,1304.3 1702,1300.1 1732,1298.9 1806,1298.2 1825,1296.7 1882,1294.5 1900,1293.8 2011,1288.9 2100,1285.0 2154,1282.0 2208,1291.6 2245,1287.8 2317,1284.9 2353,1276.3 2371,1262.6 2389,1298.5 2400,1320.3 2444,1323.6 2462,1318.5 2498,1324.2 2570,1320.8 2581,1310.6 2599,1253.4 2624,1249.7 2642,1250.8 2679,1261.4 2686,1263.0 2715,1256.4 2751,1257.7 2787,1264.0 2834,1259.1 2845,1253.2 2897,1249.7"/><polyline fill="none" stroke="#706e8a" stroke-width="2.4" stroke-opacity="0.25" stroke-linejoin="round" points="1345,1316.0 1377,1316.6 1448,1315.4 1489,1312.9 1557,1308.8 1601,1306.9 1702,1302.7 1732,1301.5 1806,1300.8 1825,1299.4 1882,1297.1 1900,1296.4 2011,1291.6 2100,1287.6 2154,1284.6 2208,1294.3 2245,1290.4 2317,1287.5 2353,1278.9 2371,1265.3 2389,1301.2 2400,1322.9 2444,1326.2 2462,1321.1 2498,1326.9 2570,1323.4 2581,1313.3 2599,1256.1 2624,1252.3 2642,1253.4 2679,1264.0 2686,1265.6 2715,1259.1 2751,1260.3 2787,1266.6 2834,1261.8 2845,1255.8 2897,1252.3"/><polyline fill="none" stroke="#84829e" stroke-width="2.4" stroke-opacity="0.31" stroke-linejoin="round" points="1345,1325.4 1377,1326.1 1448,1324.7 1489,1322.2 1557,1318.2 1601,1316.3 1702,1312.1 1732,1310.9 1806,1310.5 1825,1309.0 1882,1306.7 1900,1306.0 2011,1301.1 2100,1297.1 2154,1294.0 2208,1303.7 2245,1299.4 2317,1296.2 2353,1288.0 2371,1274.9 2389,1308.1 2400,1328.4 2444,1331.4 2462,1326.6 2498,1333.2 2570,1329.2 2581,1319.4 2599,1265.5 2624,1261.2 2642,1262.5 2679,1272.8 2686,1274.3 2715,1268.1 2751,1269.2 2787,1276.0 2834,1271.1 2845,1264.5 2897,1261.2"/><polyline fill="none" stroke="#706e8a" stroke-width="2.4" stroke-opacity="0.28" stroke-linejoin="round" points="1345,1328.0 1377,1328.7 1448,1327.3 1489,1324.8 1557,1320.8 1601,1319.0 1702,1314.8 1732,1313.5 1806,1313.2 1825,1311.6 1882,1309.3 1900,1308.6 2011,1303.8 2100,1299.7 2154,1296.6 2208,1306.4 2245,1302.0 2317,1298.8 2353,1290.6 2371,1277.5 2389,1310.8 2400,1331.0 2444,1334.1 2462,1329.3 2498,1335.8 2570,1331.9 2581,1322.1 2599,1268.1 2624,1263.8 2642,1265.1 2679,1275.5 2686,1276.9 2715,1270.7 2751,1271.8 2787,1278.6 2834,1273.8 2845,1267.1 2897,1263.8"/><polyline fill="none" stroke="#84829e" stroke-width="2.4" stroke-opacity="0.20" stroke-linejoin="round" points="1345,1337.4 1377,1338.2 1448,1336.7 1489,1334.2 1557,1330.2 1601,1328.3 1702,1324.1 1732,1322.9 1806,1322.8 1825,1321.2 1882,1318.9 1900,1318.2 2011,1313.3 2100,1309.2 2154,1306.0 2208,1315.8 2245,1311.0 2317,1307.5 2353,1299.7 2371,1287.2 2389,1317.7 2400,1336.5 2444,1339.3 2462,1334.8 2498,1342.2 2570,1337.7 2581,1328.2 2599,1277.5 2624,1272.7 2642,1274.1 2679,1284.3 2686,1285.6 2715,1279.8 2751,1280.6 2787,1288.0 2834,1283.1 2845,1275.8 2897,1272.7"/><polyline fill="none" stroke="#706e8a" stroke-width="2.4" stroke-opacity="0.18" stroke-linejoin="round" points="1345,1340.0 1377,1340.9 1448,1339.3 1489,1336.8 1557,1332.9 1601,1331.0 1702,1326.8 1732,1325.5 1806,1325.5 1825,1323.8 1882,1321.6 1900,1320.9 2011,1316.0 2100,1311.9 2154,1308.6 2208,1318.5 2245,1313.7 2317,1310.2 2353,1302.3 2371,1289.8 2389,1320.3 2400,1339.2 2444,1341.9 2462,1337.4 2498,1344.8 2570,1340.4 2581,1330.9 2599,1280.2 2624,1275.3 2642,1276.8 2679,1286.9 2686,1288.2 2715,1282.4 2751,1283.3 2787,1290.6 2834,1285.7 2845,1278.4 2897,1275.3"/><polyline fill="none" stroke="#84829e" stroke-width="2.4" stroke-opacity="0.23" stroke-linejoin="round" points="1345,1349.5 1377,1350.4 1448,1348.6 1489,1346.2 1557,1342.3 1601,1340.4 1702,1336.1 1732,1334.9 1806,1335.2 1825,1333.4 1882,1331.1 1900,1330.4 2011,1325.5 2100,1321.4 2154,1318.0 2208,1327.9 2245,1322.6 2317,1318.9 2353,1311.3 2371,1299.5 2389,1327.3 2400,1344.6 2444,1347.1 2462,1342.9 2498,1351.1 2570,1346.2 2581,1337.0 2599,1289.6 2624,1284.2 2642,1285.8 2679,1295.7 2686,1296.9 2715,1291.4 2751,1292.1 2787,1300.0 2834,1295.1 2845,1287.1 2897,1284.2"/><polyline fill="none" stroke="#706e8a" stroke-width="2.4" stroke-opacity="0.21" stroke-linejoin="round" points="1345,1352.1 1377,1353.0 1448,1351.3 1489,1348.8 1557,1344.9 1601,1343.0 1702,1338.8 1732,1337.6 1806,1337.8 1825,1336.0 1882,1333.8 1900,1333.1 2011,1328.1 2100,1324.0 2154,1320.6 2208,1330.5 2245,1325.3 2317,1321.5 2353,1314.0 2371,1302.1 2389,1329.9 2400,1347.3 2444,1349.7 2462,1345.5 2498,1353.8 2570,1348.8 2581,1339.7 2599,1292.2 2624,1286.9 2642,1288.5 2679,1298.4 2686,1299.6 2715,1294.1 2751,1294.7 2787,1302.6 2834,1297.7 2845,1289.7 2897,1286.9"/><polyline fill="none" stroke="#84829e" stroke-width="2.4" stroke-opacity="0.23" stroke-linejoin="round" points="1345,1361.5 1377,1362.5 1448,1360.6 1489,1358.2 1557,1354.3 1601,1352.4 1702,1348.2 1732,1346.9 1806,1347.5 1825,1345.6 1882,1343.3 1900,1342.6 2011,1337.7 2100,1333.5 2154,1330.0 2208,1340.0 2245,1334.2 2317,1330.2 2353,1323.0 2371,1311.8 2389,1336.9 2400,1352.8 2444,1354.9 2462,1351.0 2498,1360.1 2570,1354.7 2581,1345.8 2599,1301.7 2624,1295.8 2642,1297.5 2679,1307.2 2686,1308.2 2715,1303.1 2751,1303.6 2787,1312.0 2834,1307.0 2845,1298.3 2897,1295.8"/><polyline fill="none" stroke="#706e8a" stroke-width="2.4" stroke-opacity="0.20" stroke-linejoin="round" points="1345,1364.1 1377,1365.1 1448,1363.2 1489,1360.8 1557,1357.0 1601,1355.1 1702,1350.8 1732,1349.6 1806,1350.1 1825,1348.3 1882,1346.0 1900,1345.3 2011,1340.3 2100,1336.1 2154,1332.6 2208,1342.6 2245,1336.9 2317,1332.9 2353,1325.6 2371,1314.4 2389,1339.5 2400,1355.4 2444,1357.6 2462,1353.7 2498,1362.7 2570,1357.3 2581,1348.5 2599,1304.3 2624,1298.4 2642,1300.1 2679,1309.8 2686,1310.9 2715,1305.7 2751,1306.2 2787,1314.6 2834,1309.7 2845,1301.0 2897,1298.4"/><polyline fill="none" stroke="#84829e" stroke-width="2.4" stroke-opacity="0.18" stroke-linejoin="round" points="1345,1373.5 1377,1374.6 1448,1372.5 1489,1370.1 1557,1366.4 1601,1364.5 1702,1360.2 1732,1358.9 1806,1359.8 1825,1357.8 1882,1355.6 1900,1354.9 2011,1349.9 2100,1345.6 2154,1342.0 2208,1352.1 2245,1345.9 2317,1341.5 2353,1334.7 2371,1324.1 2389,1346.5 2400,1360.9 2444,1362.8 2462,1359.2 2498,1369.1 2570,1363.1 2581,1354.6 2599,1313.7 2624,1307.3 2642,1309.2 2679,1318.6 2686,1319.5 2715,1314.7 2751,1315.0 2787,1324.0 2834,1319.0 2845,1309.6 2897,1307.3"/><polyline fill="none" stroke="#706e8a" stroke-width="2.4" stroke-opacity="0.16" stroke-linejoin="round" points="1345,1376.2 1377,1377.3 1448,1375.2 1489,1372.8 1557,1369.0 1601,1367.1 1702,1362.8 1732,1361.6 1806,1362.4 1825,1360.5 1882,1358.2 1900,1357.5 2011,1352.5 2100,1348.3 2154,1344.6 2208,1354.7 2245,1348.5 2317,1344.2 2353,1337.3 2371,1326.7 2389,1349.1 2400,1363.5 2444,1365.4 2462,1361.8 2498,1371.7 2570,1365.8 2581,1357.3 2599,1316.4 2624,1309.9 2642,1311.8 2679,1321.2 2686,1322.2 2715,1317.4 2751,1317.7 2787,1326.6 2834,1321.7 2845,1312.3 2897,1309.9"/><polyline fill="none" stroke="#84829e" stroke-width="2.4" stroke-opacity="0.22" stroke-linejoin="round" points="1345,1385.6 1377,1386.8 1448,1384.5 1489,1382.1 1557,1378.4 1601,1376.5 1702,1372.2 1732,1370.9 1806,1372.1 1825,1370.0 1882,1367.8 1900,1367.1 2011,1362.0 2100,1357.8 2154,1354.0 2208,1364.2 2245,1357.5 2317,1352.9 2353,1346.3 2371,1336.3 2389,1356.1 2400,1369.0 2444,1370.6 2462,1367.3 2498,1378.0 2570,1371.6 2581,1363.4 2599,1325.8 2624,1318.8 2642,1320.9 2679,1330.0 2686,1330.9 2715,1326.4 2751,1326.5 2787,1336.0 2834,1331.0 2845,1320.9 2897,1318.8"/><polyline fill="none" stroke="#706e8a" stroke-width="2.4" stroke-opacity="0.20" stroke-linejoin="round" points="1345,1388.2 1377,1389.4 1448,1387.1 1489,1384.8 1557,1381.1 1601,1379.1 1702,1374.8 1732,1373.6 1806,1374.8 1825,1372.7 1882,1370.4 1900,1369.7 2011,1364.7 2100,1360.4 2154,1356.6 2208,1366.8 2245,1360.1 2317,1355.5 2353,1349.0 2371,1339.0 2389,1358.7 2400,1371.7 2444,1373.2 2462,1370.0 2498,1380.7 2570,1374.2 2581,1366.1 2599,1328.4 2624,1321.4 2642,1323.5 2679,1332.7 2686,1333.5 2715,1329.0 2751,1329.1 2787,1338.6 2834,1333.6 2845,1323.6 2897,1321.4"/><polyline fill="none" stroke="#84829e" stroke-width="2.4" stroke-opacity="0.24" stroke-linejoin="round" points="1345,1397.6 1377,1398.9 1448,1396.5 1489,1394.1 1557,1390.5 1601,1388.5 1702,1384.2 1732,1382.9 1806,1384.4 1825,1382.3 1882,1380.0 1900,1379.3 2011,1374.2 2100,1369.9 2154,1366.0 2208,1376.3 2245,1369.1 2317,1364.2 2353,1358.0 2371,1348.6 2389,1365.7 2400,1377.1 2444,1378.4 2462,1375.5 2498,1387.0 2570,1380.1 2581,1372.3 2599,1337.8 2624,1330.3 2642,1332.5 2679,1341.5 2686,1342.2 2715,1338.1 2751,1338.0 2787,1348.0 2834,1343.0 2845,1332.2 2897,1330.3"/><polyline fill="none" stroke="#706e8a" stroke-width="2.4" stroke-opacity="0.22" stroke-linejoin="round" points="1345,1400.3 1377,1401.5 1448,1399.1 1489,1396.8 1557,1393.1 1601,1391.2 1702,1386.8 1732,1385.6 1806,1387.1 1825,1384.9 1882,1382.6 1900,1381.9 2011,1376.9 2100,1372.5 2154,1368.6 2208,1378.9 2245,1371.7 2317,1366.9 2353,1360.7 2371,1351.3 2389,1368.3 2400,1379.8 2444,1381.1 2462,1378.1 2498,1389.6 2570,1382.7 2581,1374.9 2599,1340.5 2624,1333.0 2642,1335.2 2679,1344.1 2686,1344.8 2715,1340.7 2751,1340.6 2787,1350.6 2834,1345.6 2845,1334.8 2897,1333.0"/><polyline fill="none" stroke="#84829e" stroke-width="2.4" stroke-opacity="0.30" stroke-linejoin="round" points="1345,1409.7 1377,1411.0 1448,1408.4 1489,1406.1 1557,1402.5 1601,1400.6 1702,1396.2 1732,1394.9 1806,1396.8 1825,1394.5 1882,1392.2 1900,1391.5 2011,1386.4 2100,1382.0 2154,1378.0 2208,1388.4 2245,1380.7 2317,1375.6 2353,1369.7 2371,1360.9 2389,1375.3 2400,1385.3 2444,1386.2 2462,1383.6 2498,1396.0 2570,1388.5 2581,1381.1 2599,1349.9 2624,1341.8 2642,1344.2 2679,1352.9 2686,1353.5 2715,1349.7 2751,1349.4 2787,1360.0 2834,1355.0 2845,1343.5 2897,1341.8"/><polyline fill="none" stroke="#706e8a" stroke-width="2.4" stroke-opacity="0.27" stroke-linejoin="round" points="1345,1412.3 1377,1413.7 1448,1411.1 1489,1408.7 1557,1405.2 1601,1403.2 1702,1398.9 1732,1397.6 1806,1399.4 1825,1397.1 1882,1394.8 1900,1394.1 2011,1389.1 2100,1384.7 2154,1380.6 2208,1391.0 2245,1383.3 2317,1378.2 2353,1372.3 2371,1363.6 2389,1377.9 2400,1387.9 2444,1388.9 2462,1386.3 2498,1398.6 2570,1391.2 2581,1383.7 2599,1352.5 2624,1344.5 2642,1346.9 2679,1355.6 2686,1356.1 2715,1352.4 2751,1352.1 2787,1362.6 2834,1357.6 2845,1346.1 2897,1344.5"/><polyline fill="none" stroke="#84829e" stroke-width="2.4" stroke-opacity="0.21" stroke-linejoin="round" points="1345,1421.7 1377,1423.2 1448,1420.4 1489,1418.1 1557,1414.6 1601,1412.6 1702,1408.2 1732,1407.0 1806,1409.1 1825,1406.7 1882,1404.4 1900,1403.7 2011,1398.6 2100,1394.2 2154,1390.0 2208,1400.5 2245,1392.3 2317,1386.9 2353,1381.4 2371,1373.2 2389,1384.8 2400,1393.4 2444,1394.1 2462,1391.8 2498,1404.9 2570,1397.0 2581,1389.9 2599,1362.0 2624,1353.4 2642,1355.9 2679,1364.4 2686,1364.8 2715,1361.4 2751,1360.9 2787,1372.0 2834,1366.9 2845,1354.8 2897,1353.4"/><polyline fill="none" stroke="#706e8a" stroke-width="2.4" stroke-opacity="0.19" stroke-linejoin="round" points="1345,1424.4 1377,1425.8 1448,1423.0 1489,1420.7 1557,1417.2 1601,1415.2 1702,1410.9 1732,1409.6 1806,1411.7 1825,1409.3 1882,1407.0 1900,1406.4 2011,1401.2 2100,1396.8 2154,1392.6 2208,1403.1 2245,1395.0 2317,1389.5 2353,1384.0 2371,1375.8 2389,1387.5 2400,1396.0 2444,1396.7 2462,1394.4 2498,1407.6 2570,1399.6 2581,1392.5 2599,1364.6 2624,1356.0 2642,1358.5 2679,1367.0 2686,1367.4 2715,1364.0 2751,1363.5 2787,1374.6 2834,1369.6 2845,1357.4 2897,1356.0"/><polyline fill="none" stroke="#84829e" stroke-width="2.4" stroke-opacity="0.23" stroke-linejoin="round" points="1345,1433.8 1377,1435.3 1448,1432.4 1489,1430.1 1557,1426.6 1601,1424.6 1702,1420.3 1732,1419.0 1806,1421.4 1825,1418.9 1882,1416.6 1900,1415.9 2011,1410.8 2100,1406.3 2154,1402.0 2208,1412.5 2245,1403.9 2317,1398.2 2353,1393.0 2371,1385.5 2389,1394.4 2400,1401.5 2444,1401.9 2462,1399.9 2498,1413.9 2570,1405.5 2581,1398.7 2599,1374.0 2624,1364.9 2642,1367.6 2679,1375.8 2686,1376.1 2715,1373.0 2751,1372.4 2787,1384.0 2834,1378.9 2845,1366.1 2897,1364.9"/><polyline fill="none" stroke="#706e8a" stroke-width="2.4" stroke-opacity="0.21" stroke-linejoin="round" points="1345,1436.4 1377,1438.0 1448,1435.0 1489,1432.7 1557,1429.2 1601,1427.3 1702,1422.9 1732,1421.6 1806,1424.0 1825,1421.6 1882,1419.3 1900,1418.6 2011,1413.4 2100,1409.0 2154,1404.6 2208,1415.2 2245,1406.6 2317,1400.9 2353,1395.7 2371,1388.1 2389,1397.1 2400,1404.2 2444,1404.5 2462,1402.5 2498,1416.5 2570,1408.1 2581,1401.3 2599,1376.7 2624,1367.5 2642,1370.2 2679,1378.4 2686,1378.7 2715,1375.7 2751,1375.0 2787,1386.6 2834,1381.6 2845,1368.7 2897,1367.5"/><polyline fill="none" stroke="#84829e" stroke-width="2.4" stroke-opacity="0.18" stroke-linejoin="round" points="1345,1445.8 1377,1447.5 1448,1444.3 1489,1442.1 1557,1438.7 1601,1436.7 1702,1432.3 1732,1431.0 1806,1433.7 1825,1431.1 1882,1428.8 1900,1428.1 2011,1423.0 2100,1418.5 2154,1414.0 2208,1424.6 2245,1415.5 2317,1409.6 2353,1404.7 2371,1397.8 2389,1404.0 2400,1409.6 2444,1409.7 2462,1408.0 2498,1422.8 2570,1413.9 2581,1407.5 2599,1386.1 2624,1376.4 2642,1379.3 2679,1387.2 2686,1387.4 2715,1384.7 2751,1383.8 2787,1396.0 2834,1390.9 2845,1377.4 2897,1376.4"/><polyline fill="none" stroke="#706e8a" stroke-width="2.4" stroke-opacity="0.16" stroke-linejoin="round" points="1345,1448.5 1377,1450.1 1448,1447.0 1489,1444.7 1557,1441.3 1601,1439.3 1702,1434.9 1732,1433.6 1806,1436.4 1825,1433.8 1882,1431.5 1900,1430.8 2011,1425.6 2100,1421.1 2154,1416.6 2208,1427.3 2245,1418.2 2317,1412.2 2353,1407.3 2371,1400.4 2389,1406.7 2400,1412.3 2444,1412.4 2462,1410.7 2498,1425.5 2570,1416.6 2581,1410.1 2599,1388.7 2624,1379.0 2642,1381.9 2679,1389.9 2686,1390.1 2715,1387.3 2751,1386.5 2787,1398.6 2834,1393.5 2845,1380.0 2897,1379.0"/><polyline fill="none" stroke="#84829e" stroke-width="2.4" stroke-opacity="0.25" stroke-linejoin="round" points="1345,1457.9 1377,1459.6 1448,1456.3 1489,1454.0 1557,1450.7 1601,1448.7 1702,1444.3 1732,1443.0 1806,1446.0 1825,1443.3 1882,1441.0 1900,1440.4 2011,1435.1 2100,1430.6 2154,1426.0 2208,1436.7 2245,1427.2 2317,1420.9 2353,1416.4 2371,1410.1 2389,1413.6 2400,1417.8 2444,1417.6 2462,1416.2 2498,1431.8 2570,1422.4 2581,1416.3 2599,1398.1 2624,1387.9 2642,1391.0 2679,1398.7 2686,1398.7 2715,1396.4 2751,1395.3 2787,1408.0 2834,1402.9 2845,1388.6 2897,1387.9"/><polyline fill="none" stroke="#706e8a" stroke-width="2.4" stroke-opacity="0.22" stroke-linejoin="round" points="1345,1460.5 1377,1462.2 1448,1458.9 1489,1456.7 1557,1453.3 1601,1451.3 1702,1446.9 1732,1445.6 1806,1448.7 1825,1446.0 1882,1443.7 1900,1443.0 2011,1437.8 2100,1433.2 2154,1428.6 2208,1439.4 2245,1429.8 2317,1423.6 2353,1419.0 2371,1412.7 2389,1416.3 2400,1420.4 2444,1420.2 2462,1418.8 2498,1434.4 2570,1425.0 2581,1418.9 2599,1400.8 2624,1390.6 2642,1393.6 2679,1401.3 2686,1401.4 2715,1399.0 2751,1397.9 2787,1410.6 2834,1405.5 2845,1391.3 2897,1390.6"/><polyline fill="none" stroke="#84829e" stroke-width="2.4" stroke-opacity="0.22" stroke-linejoin="round" points="1345,1469.9 1377,1471.7 1448,1468.2 1489,1466.0 1557,1462.7 1601,1460.7 1702,1456.3 1732,1455.0 1806,1458.4 1825,1455.6 1882,1453.3 1900,1452.6 2011,1447.3 2100,1442.7 2154,1438.0 2208,1448.8 2245,1438.8 2317,1432.2 2353,1428.1 2371,1422.4 2389,1423.2 2400,1425.9 2444,1425.4 2462,1424.3 2498,1440.8 2570,1430.9 2581,1425.1 2599,1410.2 2624,1399.5 2642,1402.6 2679,1410.1 2686,1410.0 2715,1408.0 2751,1406.8 2787,1420.0 2834,1414.8 2845,1399.9 2897,1399.5"/><polyline fill="none" stroke="#706e8a" stroke-width="2.4" stroke-opacity="0.20" stroke-linejoin="round" points="1345,1472.5 1377,1474.4 1448,1470.9 1489,1468.7 1557,1465.4 1601,1463.4 1702,1458.9 1732,1457.6 1806,1461.0 1825,1458.2 1882,1455.9 1900,1455.2 2011,1450.0 2100,1445.4 2154,1440.6 2208,1451.5 2245,1441.4 2317,1434.9 2353,1430.7 2371,1425.0 2389,1425.9 2400,1428.5 2444,1428.0 2462,1427.0 2498,1443.4 2570,1433.5 2581,1427.7 2599,1412.8 2624,1402.1 2642,1405.3 2679,1412.8 2686,1412.7 2715,1410.7 2751,1409.4 2787,1422.6 2834,1417.5 2845,1402.6 2897,1402.1"/><polyline fill="none" stroke="#84829e" stroke-width="2.4" stroke-opacity="0.26" stroke-linejoin="round" points="1345,1482.0 1377,1483.9 1448,1480.2 1489,1478.0 1557,1474.8 1601,1472.8 1702,1468.3 1732,1467.0 1806,1470.7 1825,1467.8 1882,1465.5 1900,1464.8 2011,1459.5 2100,1454.9 2154,1450.0 2208,1460.9 2245,1450.4 2317,1443.6 2353,1439.7 2371,1434.6 2389,1432.8 2400,1434.0 2444,1433.2 2462,1432.5 2498,1449.7 2570,1439.3 2581,1433.9 2599,1422.3 2624,1411.0 2642,1414.3 2679,1421.6 2686,1421.4 2715,1419.7 2751,1418.2 2787,1432.0 2834,1426.8 2845,1411.2 2897,1411.0"/><polyline fill="none" stroke="#706e8a" stroke-width="2.4" stroke-opacity="0.23" stroke-linejoin="round" points="1345,1484.6 1377,1486.5 1448,1482.8 1489,1480.7 1557,1477.4 1601,1475.4 1702,1471.0 1732,1469.6 1806,1473.3 1825,1470.4 1882,1468.1 1900,1467.4 2011,1462.2 2100,1457.5 2154,1452.6 2208,1463.5 2245,1453.0 2317,1446.2 2353,1442.4 2371,1437.3 2389,1435.4 2400,1436.6 2444,1435.9 2462,1435.1 2498,1452.4 2570,1442.0 2581,1436.5 2599,1424.9 2624,1413.6 2642,1417.0 2679,1424.2 2686,1424.0 2715,1422.3 2751,1420.9 2787,1434.6 2834,1429.5 2845,1413.9 2897,1413.6"/><polyline fill="none" stroke="#cfbcb8" stroke-width="3.6" stroke-opacity="0.31" stroke-linejoin="round" points="1345,1508.7 1377,1510.2 1415,1507.9 1489,1503.7 1564,1500.8 1601,1499.1 1657,1496.6 1694,1496.3 1728,1495.8 1732,1495.4 1750,1495.4 1780,1494.9 1806,1495.7 1814,1494.4 1825,1493.1 1862,1492.6 1900,1492.4 1907,1492.3 1974,1488.2 2011,1485.9 2030,1484.7 2064,1481.6 2100,1480.3 2102,1480.2 2130,1478.3 2154,1477.2 2167,1480.0 2208,1486.4 2212,1485.3 2238,1476.6 2245,1475.0 2257,1474.5 2324,1467.4 2353,1464.2 2380,1457.6 2389,1455.3 2436,1453.6 2462,1453.9 2473,1459.4 2498,1470.5 2522,1467.1 2529,1464.4 2566,1459.5 2570,1458.9 2622,1436.4 2624,1435.5 2678,1446.2 2679,1446.4 2715,1444.5 2751,1441.9 2764,1446.1 2779,1450.3 2787,1453.5 2809,1452.0 2834,1451.6 2835,1450.6 2845,1436.8 2897,1436.6 2897,1436.6"/><polyline fill="none" stroke="#b09894" stroke-width="3.6" stroke-opacity="0.28" stroke-linejoin="round" points="1345,1512.7 1377,1514.1 1415,1511.9 1489,1507.7 1564,1504.8 1601,1503.1 1657,1500.5 1694,1500.2 1728,1499.7 1732,1499.4 1750,1499.3 1780,1498.9 1806,1499.7 1814,1498.4 1825,1497.1 1862,1496.6 1900,1496.4 1907,1496.3 1974,1492.2 2011,1489.9 2030,1488.7 2064,1485.5 2100,1484.3 2102,1484.2 2130,1482.3 2154,1481.1 2167,1484.0 2208,1490.3 2212,1489.3 2238,1480.5 2245,1479.0 2257,1478.5 2324,1471.3 2353,1468.1 2380,1461.5 2389,1459.2 2436,1457.5 2462,1457.8 2473,1463.4 2498,1474.5 2522,1471.1 2529,1468.4 2566,1463.4 2570,1462.9 2622,1440.3 2624,1439.5 2678,1450.2 2679,1450.3 2715,1448.4 2751,1445.8 2764,1450.1 2779,1454.3 2787,1457.5 2809,1455.9 2834,1455.5 2835,1454.5 2845,1440.7 2897,1440.6 2897,1440.6"/><polyline fill="none" stroke="#cfbcb8" stroke-width="3.6" stroke-opacity="0.30" stroke-linejoin="round" points="1345,1523.5 1377,1524.3 1415,1521.8 1489,1517.5 1564,1515.2 1601,1513.4 1657,1510.8 1694,1511.9 1728,1512.4 1732,1511.9 1750,1510.7 1780,1508.2 1806,1508.4 1814,1507.1 1825,1506.2 1862,1506.8 1900,1507.8 1907,1508.0 1974,1503.0 2011,1500.2 2030,1498.7 2064,1494.2 2100,1493.7 2102,1493.6 2130,1492.4 2154,1492.3 2167,1495.4 2208,1499.8 2212,1498.7 2238,1489.1 2245,1488.1 2257,1488.2 2324,1480.5 2353,1476.9 2380,1470.4 2389,1468.2 2436,1465.9 2462,1467.2 2473,1472.6 2498,1482.4 2522,1479.1 2529,1474.8 2566,1470.6 2570,1470.0 2622,1449.2 2624,1448.5 2678,1459.6 2679,1459.7 2715,1457.6 2751,1454.0 2764,1457.4 2779,1459.9 2787,1463.0 2809,1462.3 2834,1464.3 2835,1463.5 2845,1451.1 2897,1450.8 2897,1450.8"/><polyline fill="none" stroke="#b09894" stroke-width="3.6" stroke-opacity="0.27" stroke-linejoin="round" points="1345,1527.4 1377,1528.3 1415,1525.8 1489,1521.4 1564,1519.1 1601,1517.3 1657,1514.8 1694,1515.9 1728,1516.4 1732,1515.8 1750,1514.7 1780,1512.2 1806,1512.3 1814,1511.1 1825,1510.1 1862,1510.7 1900,1511.8 1907,1511.9 1974,1507.0 2011,1504.1 2030,1502.7 2064,1498.2 2100,1497.6 2102,1497.5 2130,1496.3 2154,1496.3 2167,1499.4 2208,1503.7 2212,1502.6 2238,1493.1 2245,1492.0 2257,1492.2 2324,1484.4 2353,1480.9 2380,1474.3 2389,1472.1 2436,1469.9 2462,1471.1 2473,1476.5 2498,1486.3 2522,1483.1 2529,1478.8 2566,1474.5 2570,1474.0 2622,1453.2 2624,1452.5 2678,1463.6 2679,1463.7 2715,1461.6 2751,1458.0 2764,1461.4 2779,1463.8 2787,1467.0 2809,1466.3 2834,1468.3 2835,1467.5 2845,1455.0 2897,1454.7 2897,1454.7"/><polyline fill="none" stroke="#cfbcb8" stroke-width="3.6" stroke-opacity="0.51" stroke-linejoin="round" points="1345,1538.2 1377,1538.5 1415,1535.7 1489,1531.2 1564,1529.5 1601,1527.7 1657,1525.0 1694,1527.6 1728,1529.0 1732,1528.3 1750,1526.1 1780,1521.5 1806,1521.1 1814,1519.8 1825,1519.3 1862,1520.9 1900,1523.2 1907,1523.7 1974,1517.8 2011,1514.4 2030,1512.7 2064,1506.9 2100,1507.0 2102,1507.0 2130,1506.4 2154,1507.5 2167,1510.8 2208,1513.1 2212,1512.0 2238,1501.7 2245,1501.1 2257,1501.9 2324,1493.6 2353,1489.7 2380,1483.2 2389,1481.0 2436,1478.3 2462,1480.5 2473,1485.7 2498,1494.2 2522,1491.1 2529,1485.3 2566,1481.7 2570,1481.2 2622,1462.1 2624,1461.5 2678,1473.0 2679,1473.1 2715,1470.8 2751,1466.2 2764,1468.7 2779,1469.4 2787,1472.5 2809,1472.7 2834,1477.1 2835,1476.4 2845,1465.4 2897,1464.9 2897,1464.9"/><polyline fill="none" stroke="#b09894" stroke-width="3.6" stroke-opacity="0.45" stroke-linejoin="round" points="1345,1542.1 1377,1542.5 1415,1539.7 1489,1535.1 1564,1533.4 1601,1531.6 1657,1529.0 1694,1531.5 1728,1533.0 1732,1532.3 1750,1530.0 1780,1525.5 1806,1525.0 1814,1523.7 1825,1523.2 1862,1524.9 1900,1527.2 1907,1527.6 1974,1521.8 2011,1518.4 2030,1516.6 2064,1510.8 2100,1511.0 2102,1510.9 2130,1510.4 2154,1511.4 2167,1514.8 2208,1517.1 2212,1516.0 2238,1505.6 2245,1505.1 2257,1505.9 2324,1497.6 2353,1493.6 2380,1487.1 2389,1485.0 2436,1482.2 2462,1484.4 2473,1489.7 2498,1498.2 2522,1495.0 2529,1489.2 2566,1485.6 2570,1485.1 2622,1466.1 2624,1465.5 2678,1477.0 2679,1477.0 2715,1474.7 2751,1470.2 2764,1472.7 2779,1473.4 2787,1476.5 2809,1476.7 2834,1481.1 2835,1480.4 2845,1469.3 2897,1468.9 2897,1468.9"/><polyline fill="none" stroke="#cfbcb8" stroke-width="3.6" stroke-opacity="0.31" stroke-linejoin="round" points="1345,1552.9 1377,1552.7 1415,1549.6 1489,1544.9 1564,1543.8 1601,1542.0 1657,1539.3 1694,1543.2 1728,1545.6 1732,1544.8 1750,1541.4 1780,1534.8 1806,1533.8 1814,1532.4 1825,1532.4 1862,1535.1 1900,1538.6 1907,1539.3 1974,1532.6 2011,1528.7 2030,1526.7 2064,1519.5 2100,1520.3 2102,1520.3 2130,1520.5 2154,1522.6 2167,1526.2 2208,1526.5 2212,1525.4 2238,1514.2 2245,1514.2 2257,1515.7 2324,1506.7 2353,1502.4 2380,1496.0 2389,1493.9 2436,1490.6 2462,1493.7 2473,1498.9 2498,1506.1 2522,1503.1 2529,1495.7 2566,1492.8 2570,1492.3 2622,1475.0 2624,1474.5 2678,1486.4 2679,1486.4 2715,1483.9 2751,1478.4 2764,1480.0 2779,1479.0 2787,1482.0 2809,1483.1 2834,1489.9 2835,1489.4 2845,1479.7 2897,1479.1 2897,1479.0"/><polyline fill="none" stroke="#b09894" stroke-width="3.6" stroke-opacity="0.28" stroke-linejoin="round" points="1345,1556.9 1377,1556.6 1415,1553.6 1489,1548.9 1564,1547.8 1601,1545.9 1657,1543.3 1694,1547.1 1728,1549.6 1732,1548.7 1750,1545.4 1780,1538.8 1806,1537.7 1814,1536.4 1825,1536.3 1862,1539.0 1900,1542.6 1907,1543.3 1974,1536.5 2011,1532.6 2030,1530.6 2064,1523.5 2100,1524.3 2102,1524.3 2130,1524.5 2154,1526.6 2167,1530.2 2208,1530.5 2212,1529.4 2238,1518.2 2245,1518.1 2257,1519.6 2324,1510.7 2353,1506.4 2380,1499.9 2389,1497.9 2436,1494.6 2462,1497.7 2473,1502.9 2498,1510.0 2522,1507.0 2529,1499.7 2566,1496.7 2570,1496.2 2622,1478.9 2624,1478.5 2678,1490.3 2679,1490.4 2715,1487.9 2751,1482.3 2764,1484.0 2779,1483.0 2787,1486.0 2809,1487.0 2834,1493.8 2835,1493.4 2845,1483.6 2897,1483.0 2897,1483.0"/><polyline fill="none" stroke="#cfbcb8" stroke-width="3.6" stroke-opacity="0.52" stroke-linejoin="round" points="1345,1567.6 1377,1566.8 1415,1563.5 1489,1558.6 1564,1558.1 1601,1556.3 1657,1553.5 1694,1558.8 1728,1562.3 1732,1561.2 1750,1556.8 1780,1548.1 1806,1546.5 1814,1545.1 1825,1545.5 1862,1549.2 1900,1554.0 1907,1555.0 1974,1547.3 2011,1542.9 2030,1540.7 2064,1532.1 2100,1533.7 2102,1533.7 2130,1534.6 2154,1537.8 2167,1541.6 2208,1539.9 2212,1538.8 2238,1526.7 2245,1527.2 2257,1529.4 2324,1519.8 2353,1515.2 2380,1508.7 2389,1506.8 2436,1503.0 2462,1507.0 2473,1512.1 2498,1517.9 2522,1515.1 2529,1506.1 2566,1503.9 2570,1503.4 2622,1487.8 2624,1487.5 2678,1499.7 2679,1499.8 2715,1497.1 2751,1490.5 2764,1491.3 2779,1488.6 2787,1491.6 2809,1493.4 2834,1502.6 2835,1502.3 2845,1493.9 2897,1493.2 2897,1493.2"/><polyline fill="none" stroke="#b09894" stroke-width="3.6" stroke-opacity="0.47" stroke-linejoin="round" points="1345,1571.6 1377,1570.8 1415,1567.5 1489,1562.6 1564,1562.1 1601,1560.2 1657,1557.5 1694,1562.8 1728,1566.2 1732,1565.2 1750,1560.8 1780,1552.1 1806,1550.4 1814,1549.0 1825,1549.4 1862,1553.1 1900,1558.0 1907,1558.9 1974,1551.3 2011,1546.9 2030,1544.6 2064,1536.1 2100,1537.6 2102,1537.7 2130,1538.5 2154,1541.8 2167,1545.6 2208,1543.9 2212,1542.7 2238,1530.7 2245,1531.2 2257,1533.3 2324,1523.8 2353,1519.1 2380,1512.7 2389,1510.7 2436,1506.9 2462,1511.0 2473,1516.0 2498,1521.9 2522,1519.0 2529,1510.1 2566,1507.8 2570,1507.4 2622,1491.8 2624,1491.5 2678,1503.7 2679,1503.7 2715,1501.0 2751,1494.5 2764,1495.2 2779,1492.5 2787,1495.5 2809,1497.4 2834,1506.6 2835,1506.3 2845,1497.9 2897,1497.2 2897,1497.1"/><polyline fill="none" stroke="#cfbcb8" stroke-width="3.6" stroke-opacity="0.53" stroke-linejoin="round" points="1345,1582.4 1377,1581.0 1415,1577.4 1489,1572.4 1564,1572.4 1601,1570.5 1657,1567.8 1694,1574.4 1728,1578.9 1732,1577.7 1750,1572.2 1780,1561.5 1806,1559.1 1814,1557.7 1825,1558.6 1862,1563.3 1900,1569.5 1907,1570.7 1974,1562.1 2011,1557.2 2030,1554.7 2064,1544.8 2100,1547.0 2102,1547.1 2130,1548.7 2154,1553.0 2167,1557.0 2208,1553.3 2212,1552.2 2238,1539.3 2245,1540.2 2257,1543.1 2324,1532.9 2353,1527.9 2380,1521.5 2389,1519.7 2436,1515.3 2462,1520.3 2473,1525.2 2498,1529.7 2522,1527.1 2529,1516.6 2566,1515.0 2570,1514.5 2622,1500.7 2624,1500.5 2678,1513.1 2679,1513.1 2715,1510.2 2751,1502.7 2764,1502.6 2779,1498.2 2787,1501.1 2809,1503.8 2834,1515.4 2835,1515.3 2845,1508.2 2897,1507.3 2897,1507.3"/><polyline fill="none" stroke="#b09894" stroke-width="3.6" stroke-opacity="0.48" stroke-linejoin="round" points="1345,1586.3 1377,1585.0 1415,1581.4 1489,1576.3 1564,1576.4 1601,1574.5 1657,1571.7 1694,1578.4 1728,1582.9 1732,1581.6 1750,1576.1 1780,1565.4 1806,1563.1 1814,1561.7 1825,1562.5 1862,1567.3 1900,1573.4 1907,1574.6 1974,1566.1 2011,1561.1 2030,1558.6 2064,1548.7 2100,1551.0 2102,1551.1 2130,1552.6 2154,1556.9 2167,1561.0 2208,1557.2 2212,1556.1 2238,1543.2 2245,1544.2 2257,1547.0 2324,1536.9 2353,1531.9 2380,1525.5 2389,1523.6 2436,1519.3 2462,1524.3 2473,1529.2 2498,1533.7 2522,1531.0 2529,1520.5 2566,1518.9 2570,1518.5 2622,1504.7 2624,1504.5 2678,1517.1 2679,1517.1 2715,1514.2 2751,1506.7 2764,1506.5 2779,1502.1 2787,1505.0 2809,1507.7 2834,1519.4 2835,1519.2 2845,1512.2 2897,1511.3 2897,1511.3"/><polyline fill="none" stroke="#cfbcb8" stroke-width="3.6" stroke-opacity="0.53" stroke-linejoin="round" points="1345,1597.1 1377,1595.2 1415,1591.4 1489,1586.1 1564,1586.7 1601,1584.8 1657,1582.0 1694,1590.1 1728,1595.5 1732,1594.1 1750,1587.5 1780,1574.8 1806,1571.8 1814,1570.4 1825,1571.7 1862,1577.5 1900,1584.9 1907,1586.3 1974,1576.9 2011,1571.4 2030,1568.6 2064,1557.4 2100,1560.3 2102,1560.5 2130,1562.7 2154,1568.1 2167,1572.4 2208,1566.7 2212,1565.5 2238,1551.8 2245,1553.3 2257,1556.8 2324,1546.0 2353,1540.7 2380,1534.3 2389,1532.5 2436,1527.6 2462,1533.6 2473,1538.4 2498,1541.6 2522,1539.0 2529,1527.0 2566,1526.1 2570,1525.6 2622,1513.6 2624,1513.6 2678,1526.5 2679,1526.5 2715,1523.4 2751,1514.9 2764,1513.9 2779,1507.7 2787,1510.6 2809,1514.1 2834,1528.2 2835,1528.2 2845,1522.5 2897,1521.5 2897,1521.5"/><polyline fill="none" stroke="#b09894" stroke-width="3.6" stroke-opacity="0.48" stroke-linejoin="round" points="1345,1601.1 1377,1599.1 1415,1595.3 1489,1590.1 1564,1590.7 1601,1588.8 1657,1586.0 1694,1594.0 1728,1599.5 1732,1598.1 1750,1591.5 1780,1578.7 1806,1575.8 1814,1574.3 1825,1575.6 1862,1581.4 1900,1588.8 1907,1590.3 1974,1580.9 2011,1575.4 2030,1572.6 2064,1561.4 2100,1564.3 2102,1564.4 2130,1566.7 2154,1572.1 2167,1576.4 2208,1570.6 2212,1569.5 2238,1555.8 2245,1557.2 2257,1560.7 2324,1550.0 2353,1544.6 2380,1538.3 2389,1536.5 2436,1531.6 2462,1537.6 2473,1542.3 2498,1545.5 2522,1543.0 2529,1530.9 2566,1530.1 2570,1529.6 2622,1517.5 2624,1517.5 2678,1530.5 2679,1530.5 2715,1527.4 2751,1518.8 2764,1517.8 2779,1511.7 2787,1514.5 2809,1518.1 2834,1532.1 2835,1532.2 2845,1526.5 2897,1525.4 2897,1525.4"/><polyline fill="none" stroke="#cfbcb8" stroke-width="3.6" stroke-opacity="0.46" stroke-linejoin="round" points="1345,1611.8 1377,1609.4 1415,1605.3 1489,1599.8 1564,1601.1 1601,1599.1 1657,1596.3 1694,1605.7 1728,1612.1 1732,1610.5 1750,1602.9 1780,1588.1 1806,1584.5 1814,1583.0 1825,1584.8 1862,1591.6 1900,1600.3 1907,1602.0 1974,1591.7 2011,1585.7 2030,1582.6 2064,1570.1 2100,1573.7 2102,1573.9 2130,1576.8 2154,1583.3 2167,1587.8 2208,1580.0 2212,1578.9 2238,1564.4 2245,1566.3 2257,1570.5 2324,1559.2 2353,1553.4 2380,1547.1 2389,1545.4 2436,1540.0 2462,1546.9 2473,1551.5 2498,1553.4 2522,1551.0 2529,1537.4 2566,1537.2 2570,1536.8 2622,1526.4 2624,1526.6 2678,1539.9 2679,1539.9 2715,1536.5 2751,1527.0 2764,1525.1 2779,1517.3 2787,1520.1 2809,1524.5 2834,1540.9 2835,1541.2 2845,1536.8 2897,1535.6 2897,1535.6"/><polyline fill="none" stroke="#b09894" stroke-width="3.6" stroke-opacity="0.41" stroke-linejoin="round" points="1345,1615.8 1377,1613.3 1415,1609.2 1489,1603.8 1564,1605.0 1601,1603.1 1657,1600.2 1694,1609.7 1728,1616.1 1732,1614.5 1750,1606.9 1780,1592.0 1806,1588.5 1814,1587.0 1825,1588.7 1862,1595.6 1900,1604.2 1907,1606.0 1974,1595.6 2011,1589.6 2030,1586.6 2064,1574.0 2100,1577.6 2102,1577.8 2130,1580.8 2154,1587.2 2167,1591.8 2208,1584.0 2212,1582.9 2238,1568.3 2245,1570.3 2257,1574.4 2324,1563.1 2353,1557.4 2380,1551.1 2389,1549.4 2436,1543.9 2462,1550.9 2473,1555.5 2498,1557.4 2522,1555.0 2529,1541.4 2566,1541.2 2570,1540.7 2622,1530.4 2624,1530.5 2678,1543.8 2679,1543.8 2715,1540.5 2751,1531.0 2764,1529.1 2779,1521.3 2787,1524.1 2809,1528.5 2834,1544.9 2835,1545.1 2845,1540.8 2897,1539.6 2897,1539.6"/><polyline fill="none" stroke="#cfbcb8" stroke-width="3.6" stroke-opacity="0.58" stroke-linejoin="round" points="1345,1626.5 1377,1623.5 1415,1619.2 1489,1613.5 1564,1615.4 1601,1613.4 1657,1610.5 1694,1621.3 1728,1628.8 1732,1627.0 1750,1618.3 1780,1601.4 1806,1597.2 1814,1595.7 1825,1597.9 1862,1605.7 1900,1615.7 1907,1617.7 1974,1606.4 2011,1599.9 2030,1596.6 2064,1582.7 2100,1587.0 2102,1587.2 2130,1590.9 2154,1598.4 2167,1603.2 2208,1593.4 2212,1592.3 2238,1576.9 2245,1579.4 2257,1584.2 2324,1572.3 2353,1566.2 2380,1559.9 2389,1558.3 2436,1552.3 2462,1560.2 2473,1564.7 2498,1565.3 2522,1563.0 2529,1547.8 2566,1548.3 2570,1547.9 2622,1539.3 2624,1539.6 2678,1553.2 2679,1553.2 2715,1549.7 2751,1539.2 2764,1536.4 2779,1526.9 2787,1529.6 2809,1534.9 2834,1553.7 2835,1554.1 2845,1551.1 2897,1549.8 2897,1549.7"/><polyline fill="none" stroke="#b09894" stroke-width="3.6" stroke-opacity="0.52" stroke-linejoin="round" points="1345,1630.5 1377,1627.5 1415,1623.1 1489,1617.5 1564,1619.3 1601,1617.4 1657,1614.5 1694,1625.3 1728,1632.7 1732,1630.9 1750,1622.2 1780,1605.3 1806,1601.2 1814,1599.6 1825,1601.8 1862,1609.7 1900,1619.6 1907,1621.6 1974,1610.4 2011,1603.9 2030,1600.6 2064,1586.7 2100,1591.0 2102,1591.2 2130,1594.8 2154,1602.4 2167,1607.2 2208,1597.4 2212,1596.2 2238,1580.9 2245,1583.3 2257,1588.1 2324,1576.2 2353,1570.2 2380,1563.9 2389,1562.2 2436,1556.3 2462,1564.1 2473,1568.6 2498,1569.2 2522,1567.0 2529,1551.8 2566,1552.3 2570,1551.8 2622,1543.2 2624,1543.5 2678,1557.2 2679,1557.2 2715,1553.7 2751,1543.2 2764,1540.4 2779,1530.8 2787,1533.6 2809,1538.8 2834,1557.7 2835,1558.1 2845,1555.1 2897,1553.7 2897,1553.7"/><polyline fill="none" stroke="#cfbcb8" stroke-width="3.6" stroke-opacity="0.30" stroke-linejoin="round" points="1345,1641.3 1377,1637.7 1415,1633.1 1489,1627.3 1564,1629.7 1601,1627.7 1657,1624.8 1694,1637.0 1728,1645.4 1732,1643.4 1750,1633.6 1780,1614.7 1806,1609.9 1814,1608.3 1825,1610.9 1862,1619.9 1900,1631.1 1907,1633.3 1974,1621.2 2011,1614.1 2030,1610.6 2064,1595.4 2100,1600.4 2102,1600.6 2130,1604.9 2154,1613.6 2167,1618.6 2208,1606.8 2212,1605.6 2238,1589.5 2245,1592.4 2257,1597.9 2324,1585.4 2353,1579.0 2380,1572.7 2389,1571.2 2436,1564.7 2462,1573.5 2473,1577.8 2498,1577.1 2522,1575.0 2529,1558.3 2566,1559.4 2570,1559.0 2622,1552.1 2624,1552.6 2678,1566.6 2679,1566.6 2715,1562.8 2751,1551.4 2764,1547.7 2779,1536.4 2787,1539.1 2809,1545.2 2834,1566.5 2835,1567.1 2845,1565.4 2897,1563.9 2897,1563.9"/><polyline fill="none" stroke="#b09894" stroke-width="3.6" stroke-opacity="0.27" stroke-linejoin="round" points="1345,1645.2 1377,1641.7 1415,1637.0 1489,1631.2 1564,1633.6 1601,1631.7 1657,1628.7 1694,1640.9 1728,1649.3 1732,1647.4 1750,1637.6 1780,1618.7 1806,1613.9 1814,1612.3 1825,1614.9 1862,1623.8 1900,1635.1 1907,1637.3 1974,1625.2 2011,1618.1 2030,1614.6 2064,1599.3 2100,1604.3 2102,1604.6 2130,1608.9 2154,1617.6 2167,1622.6 2208,1610.7 2212,1609.6 2238,1593.4 2245,1596.4 2257,1601.9 2324,1589.3 2353,1582.9 2380,1576.7 2389,1575.1 2436,1568.6 2462,1577.4 2473,1581.8 2498,1581.1 2522,1579.0 2529,1562.2 2566,1563.4 2570,1563.0 2622,1556.1 2624,1556.5 2678,1570.6 2679,1570.5 2715,1566.8 2751,1555.3 2764,1551.7 2779,1540.4 2787,1543.1 2809,1549.2 2834,1570.4 2835,1571.0 2845,1569.3 2897,1567.9 2897,1567.8"/><polyline fill="none" stroke="#8fd08f" stroke-width="3.2" stroke-linejoin="round" points="1345.2,624.4 1420.0,622.8 1484.0,627.8 1502.0,624.8 1520.0,611.8 1701.0,611.8 2063.0,607.8 2078.0,609.3 2090.0,622.8 2100.0,631.8 2129.0,642.5 2172.0,634.8 2205.0,632.8 2215.7,640.8 2230.0,670.8 2252.0,738.3 2353.0,739.8 2371.0,734.8 2407.4,723.8 2418.0,714.8 2497.8,709.4 2516.0,716.6 2534.0,727.5 2606.0,730.8 2722.0,727.5 2740.0,688.8 2755.0,641.8 2765.0,615.8 2772.0,606.8 2787.0,604.5 2896.8,600.8"/><polyline fill="none" stroke="#4f9a55" stroke-width="3" stroke-linejoin="round" points="1345.2,618.9 1420.0,616.8 1484.7,621.8 1502.7,618.9 1520.8,606.3 1701.7,606.3 2063.0,602.3 2078.0,603.7 2090.0,617.3 2100.0,619.3 2129.0,633.3 2172.3,626.1 2201.3,617.1 2212.0,629.3 2226.6,658.3 2244.7,705.3 2252.0,714.3 2317.0,716.3 2389.3,702.0 2425.5,691.3 2443.6,682.3 2497.8,684.0 2534.0,694.8 2606.3,705.3 2678.7,714.3 2722.0,716.3 2736.5,684.0 2751.0,640.3 2761.8,611.3 2769.0,600.8 2787.0,597.3 2896.8,595.3"/><polyline fill="none" stroke="#d9cf5a" stroke-width="2.4" points="1345.2,387.0 1600.0,387.0 1810.0,387.0 1890.0,392.0 2100.0,390.5 2245.0,398.0 2425.0,405.0 2443.0,407.0 2640.0,405.0 2896.8,407.0"/><polyline fill="none" stroke="#b6c6a4" stroke-width="4" stroke-linejoin="round" stroke-opacity=".6" points="2246.0,688.0 2262.0,668.0 2330.0,666.0 2400.0,659.0 2460.0,652.0 2520.0,655.0 2600.0,662.0 2680.0,668.0 2728.0,674.0"/><polyline fill="none" stroke="#6888b8" stroke-width="3.5" stroke-opacity="0.7" stroke-linejoin="round" points="1345.2,643.1 1412.0,640.8 1420.0,640.8 1481.0,645.5 1484.0,644.3 1488.3,641.6 1502.0,639.8 1520.0,629.5 1586.0,629.1 1593.0,628.5 1701.0,628.1 1774.0,627.1 2063.0,622.6 2078.0,623.6 2081.4,626.6 2090.0,636.2 2092.0,638.1 2100.0,644.4 2121.7,652.3 2129.0,655.9 2143.4,656.7 2165.0,653.7 2172.0,652.3 2205.0,648.7 2215.7,654.3 2230.0,676.8 2252.0,742.1 2273.6,754.8 2309.8,754.5 2317.0,756.2 2353.0,755.4 2364.0,752.6 2371.0,750.4 2403.8,739.4 2407.4,735.8 2418.0,728.5 2461.7,725.2 2497.8,722.7 2516.0,727.9 2526.8,732.8 2534.0,737.7 2544.8,740.2 2606.0,742.0 2606.3,742.0 2678.7,742.4 2711.2,740.9 2722.0,733.3 2740.0,690.9 2751.0,656.5 2755.0,646.7 2765.0,626.3 2772.0,619.2 2787.0,617.2 2896.8,613.2"/><polyline fill="none" stroke="#9ab4dc" stroke-width="3" stroke-opacity="0.6" stroke-linejoin="round" points="1345.2,651.0 1412.0,648.3 1420.0,648.4 1481.0,653.2 1484.0,651.2 1488.3,647.7 1502.0,646.0 1520.0,637.0 1586.0,636.4 1593.0,635.6 1701.0,634.9 1774.0,633.9 2063.0,628.7 2078.0,629.6 2081.4,632.1 2090.0,641.8 2092.0,643.7 2100.0,649.6 2121.7,657.5 2129.0,661.4 2143.4,663.8 2165.0,661.2 2172.0,659.7 2205.0,655.4 2215.7,659.9 2230.0,679.0 2252.0,743.3 2273.6,761.6 2309.8,760.9 2317.0,763.4 2353.0,761.9 2364.0,759.3 2371.0,756.9 2403.8,745.4 2407.4,740.7 2418.0,734.2 2461.7,730.8 2497.8,728.2 2516.0,732.6 2526.8,736.7 2534.0,741.7 2544.8,745.1 2606.0,746.6 2606.3,746.6 2678.7,748.0 2711.2,746.3 2722.0,735.4 2740.0,691.3 2751.0,657.0 2755.0,648.4 2765.0,630.5 2772.0,624.3 2787.0,622.5 2896.8,618.2"/><polyline fill="none" stroke="#6888b8" stroke-width="3.5" stroke-opacity="0.6" stroke-linejoin="round" points="1345.2,663.7 1412.0,660.4 1420.0,660.6 1481.0,665.4 1484.0,662.3 1488.3,657.4 1502.0,656.0 1520.0,649.0 1586.0,648.0 1593.0,646.8 1701.0,645.8 1774.0,644.7 2063.0,638.6 2078.0,639.1 2081.4,641.0 2090.0,650.6 2092.0,652.6 2100.0,658.0 2121.7,665.7 2129.0,670.3 2143.4,675.1 2165.0,673.1 2172.0,671.5 2205.0,666.1 2215.7,668.9 2230.0,682.6 2252.0,745.3 2273.6,772.5 2309.8,771.2 2317.0,774.8 2353.0,772.4 2364.0,769.9 2371.0,767.4 2403.8,755.1 2407.4,748.5 2418.0,743.3 2461.7,739.7 2497.8,736.9 2516.0,739.9 2526.8,742.9 2534.0,748.2 2544.8,753.1 2606.0,753.8 2606.3,753.8 2678.7,757.1 2711.2,754.9 2722.0,738.7 2740.0,691.9 2751.0,657.7 2755.0,651.1 2765.0,637.3 2772.0,632.5 2787.0,630.9 2896.8,626.3"/><polyline fill="none" stroke="#9ab4dc" stroke-width="3" stroke-opacity="0.6" stroke-linejoin="round" points="1345.2,671.7 1412.0,668.0 1420.0,668.3 1481.0,673.0 1484.0,669.3 1488.3,663.5 1502.0,662.3 1520.0,656.5 1586.0,655.3 1593.0,653.9 1701.0,652.7 1774.0,651.5 2063.0,644.7 2078.0,645.1 2081.4,646.6 2090.0,656.2 2092.0,658.2 2100.0,663.2 2121.7,670.9 2129.0,675.8 2143.4,682.2 2165.0,680.6 2172.0,679.0 2205.0,672.8 2215.7,674.5 2230.0,684.8 2252.0,746.5 2273.6,779.4 2309.8,777.6 2317.0,782.0 2353.0,778.9 2364.0,776.6 2371.0,773.9 2403.8,761.1 2407.4,753.4 2418.0,749.0 2461.7,745.2 2497.8,742.4 2516.0,744.5 2526.8,746.8 2534.0,752.3 2544.8,758.1 2606.0,758.4 2606.3,758.4 2678.7,762.7 2711.2,760.3 2722.0,740.8 2740.0,692.3 2751.0,658.1 2755.0,652.7 2765.0,641.5 2772.0,637.6 2787.0,636.1 2896.8,631.4"/><polyline fill="none" stroke="#6888b8" stroke-width="3" stroke-opacity="0.55" stroke-linejoin="round" points="1345.2,684.4 1412.0,680.1 1420.0,680.5 1481.0,685.2 1484.0,680.4 1488.3,673.2 1502.0,672.3 1520.0,668.5 1586.0,667.0 1593.0,665.2 1701.0,663.6 1774.0,662.4 2063.0,654.6 2078.0,654.6 2081.4,655.5 2090.0,665.1 2092.0,667.2 2100.0,671.5 2121.7,679.1 2129.0,684.7 2143.4,693.6 2165.0,692.6 2172.0,690.8 2205.0,683.5 2215.7,683.4 2230.0,688.3 2252.0,748.4 2273.6,790.3 2309.8,787.9 2317.0,793.4 2353.0,789.3 2364.0,787.3 2371.0,784.4 2403.8,770.8 2407.4,761.3 2418.0,758.1 2461.7,754.1 2497.8,751.2 2516.0,751.9 2526.8,752.9 2534.0,758.8 2544.8,766.1 2606.0,765.7 2606.3,765.7 2678.7,771.8 2711.2,769.0 2722.0,744.2 2740.0,693.0 2751.0,658.8 2755.0,655.4 2765.0,648.3 2772.0,645.7 2787.0,644.6 2896.8,639.5"/><polyline fill="none" stroke="#93aed8" stroke-width="3" stroke-opacity="0.5" stroke-linejoin="round" points="1345.2,692.3 1412.0,687.6 1420.0,688.1 1481.0,692.8 1484.0,687.3 1488.3,679.3 1502.0,678.6 1520.0,676.0 1586.0,674.3 1593.0,672.2 1701.0,670.5 1774.0,669.2 2063.0,660.7 2078.0,660.6 2081.4,661.1 2090.0,670.6 2092.0,672.8 2100.0,676.7 2121.7,684.3 2129.0,690.2 2143.4,700.7 2165.0,700.0 2172.0,698.2 2205.0,690.2 2215.7,689.0 2230.0,690.5 2252.0,749.6 2273.6,797.1 2309.8,794.3 2317.0,800.6 2353.0,795.9 2364.0,793.9 2371.0,790.9 2403.8,776.8 2407.4,766.2 2418.0,763.8 2461.7,759.6 2497.8,756.7 2516.0,756.5 2526.8,756.8 2534.0,762.9 2544.8,771.0 2606.0,770.2 2606.3,770.2 2678.7,777.4 2711.2,774.4 2722.0,746.3 2740.0,693.4 2751.0,659.3 2755.0,657.1 2765.0,652.5 2772.0,650.8 2787.0,649.8 2896.8,644.6"/><polyline fill="none" stroke="#e6d2dc" stroke-width="4.5" stroke-opacity=".42" stroke-linejoin="round" points="1345.2,917.1 1426.8,920.5 1437.6,914.5 1701.7,906.2 2063.0,899.0 2100.0,899.0 2154.0,900.5 2208.5,909.5 2262.7,922.5 2306.0,929.5 2335.0,1000.3 2389.3,989.5 2461.7,982.2 2570.0,976.5 2581.0,980.4 2646.0,985.5 2680.5,886.5 2751.0,899.0 2762.0,888.2 2896.8,886.5"/><polyline fill="none" stroke="#e07fb0" stroke-width="2.4" stroke-linejoin="round" points="1345.2,921.6 1426.8,925.0 1437.6,919.0 1701.7,910.7 2063.0,903.5 2100.0,903.5 2154.0,905.0 2208.5,914.0 2262.7,927.0 2306.0,934.0 2335.0,1004.8 2389.3,994.0 2461.7,986.7 2570.0,981.0 2581.0,984.9 2646.0,990.0 2680.5,891.0 2751.0,903.5 2762.0,892.7 2896.8,891.0"/><polyline fill="none" stroke="#ee8fc0" stroke-width="3" stroke-linejoin="round" points="1345.2,1076.0 1369.0,1072.5 1701.7,1063.5 1882.5,1058.0 2100.0,1049.0 2136.0,1047.0 2208.5,1056.0 2262.7,1065.0 2309.8,1067.0 2338.7,1050.8 2364.0,1125.0 2407.4,1132.0 2461.7,1125.0 2534.0,1119.5 2617.0,1110.5 2635.3,1052.6 2657.0,1036.0 2714.8,1041.7 2787.0,1038.0 2896.8,1027.0"/><g filter="url(#fBlur)"><polyline fill="none" stroke="#86588c" stroke-width="5" stroke-opacity="0.5" stroke-linejoin="round" points="1345.2,1087.6 1369.0,1084.4 1448.5,1082.4 1557.0,1079.2 1701.7,1075.1 1882.5,1069.5 2100.0,1060.5 2136.0,1058.5 2154.0,1060.6 2208.5,1067.5 2262.7,1075.8 2309.8,1077.6 2317.0,1073.9 2338.7,1062.1 2353.0,1100.8 2364.0,1130.0 2371.0,1130.6 2400.0,1141.0 2407.4,1142.2 2443.6,1138.2 2461.7,1135.5 2534.0,1130.4 2570.0,1126.7 2581.0,1124.8 2599.0,1117.3 2617.0,1115.5 2635.3,1061.7 2642.5,1056.6 2657.0,1046.6 2686.0,1049.9 2714.8,1051.9 2787.0,1048.9 2896.8,1037.9"/><polyline fill="none" stroke="#b186ba" stroke-width="3" stroke-opacity="0.45" stroke-linejoin="round" points="1345.2,1101.3 1369.0,1098.4 1448.5,1096.6 1557.0,1093.0 1701.7,1088.7 1882.5,1083.0 2100.0,1074.0 2136.0,1072.1 2154.0,1073.9 2208.5,1081.0 2262.7,1088.4 2309.8,1090.0 2317.0,1086.6 2338.7,1075.3 2353.0,1109.9 2364.0,1135.2 2371.0,1135.0 2400.0,1152.9 2407.4,1154.0 2443.6,1150.8 2461.7,1147.7 2534.0,1143.1 2570.0,1139.8 2581.0,1136.8 2599.0,1122.3 2617.0,1120.7 2635.3,1072.1 2642.5,1067.4 2657.0,1058.9 2686.0,1062.9 2714.8,1063.8 2787.0,1061.6 2896.8,1050.6"/><polyline fill="none" stroke="#cda6d6" stroke-width="6" stroke-opacity="0.78" stroke-linejoin="round" points="1345.2,1116.5 1369.0,1113.9 1448.5,1112.3 1557.0,1108.3 1701.7,1103.9 1882.5,1098.0 2100.0,1089.0 2136.0,1087.2 2154.0,1088.7 2208.5,1096.0 2262.7,1102.5 2309.8,1103.8 2317.0,1100.8 2338.7,1090.1 2353.0,1120.0 2364.0,1141.0 2371.0,1140.0 2400.0,1166.0 2407.4,1167.1 2443.6,1164.9 2461.7,1161.2 2534.0,1157.2 2570.0,1154.3 2581.0,1150.1 2599.0,1127.9 2617.0,1126.5 2635.3,1083.6 2642.5,1079.5 2657.0,1072.6 2686.0,1077.3 2714.8,1077.0 2787.0,1075.7 2896.8,1064.7"/><polyline fill="none" stroke="#86588c" stroke-width="4" stroke-opacity="0.5" stroke-linejoin="round" points="1345.2,1127.2 1369.0,1124.8 1448.5,1123.4 1557.0,1119.0 1701.7,1114.5 1882.5,1108.5 2100.0,1099.5 2136.0,1097.7 2154.0,1099.0 2208.5,1106.5 2262.7,1112.3 2309.8,1113.4 2317.0,1110.7 2338.7,1100.4 2353.0,1127.0 2364.0,1145.0 2371.0,1143.5 2400.0,1175.2 2407.4,1176.3 2443.6,1174.7 2461.7,1170.7 2534.0,1167.0 2570.0,1164.4 2581.0,1159.5 2599.0,1131.8 2617.0,1130.5 2635.3,1091.7 2642.5,1088.0 2657.0,1082.2 2686.0,1087.4 2714.8,1086.3 2787.0,1085.5 2896.8,1074.5"/><polyline fill="none" stroke="#b186ba" stroke-width="3" stroke-opacity="0.45" stroke-linejoin="round" points="1345.2,1140.8 1369.0,1138.8 1448.5,1137.6 1557.0,1132.8 1701.7,1128.1 1882.5,1122.0 2100.0,1113.0 2136.0,1111.3 2154.0,1112.3 2208.5,1120.0 2262.7,1124.9 2309.8,1125.8 2317.0,1123.4 2338.7,1113.6 2353.0,1136.1 2364.0,1150.2 2371.0,1147.9 2400.0,1187.1 2407.4,1188.2 2443.6,1187.3 2461.7,1182.9 2534.0,1179.7 2570.0,1177.5 2581.0,1171.5 2599.0,1136.8 2617.0,1135.7 2635.3,1102.1 2642.5,1098.9 2657.0,1094.5 2686.0,1100.3 2714.8,1098.2 2787.0,1098.2 2896.8,1087.2"/><polyline fill="none" stroke="#86588c" stroke-width="3.5" stroke-opacity="0.4" stroke-linejoin="round" points="1345.2,1153.0 1369.0,1151.2 1448.5,1150.2 1557.0,1145.1 1701.7,1140.2 1882.5,1134.0 2100.0,1125.0 2136.0,1123.3 2154.0,1124.1 2208.5,1132.0 2262.7,1136.1 2309.8,1136.8 2317.0,1134.7 2338.7,1125.4 2353.0,1144.2 2364.0,1154.8 2371.0,1151.9 2400.0,1197.6 2407.4,1198.7 2443.6,1198.6 2461.7,1193.8 2534.0,1191.0 2570.0,1189.0 2581.0,1182.2 2599.0,1141.2 2617.0,1140.2 2635.3,1111.3 2642.5,1108.5 2657.0,1105.5 2686.0,1111.8 2714.8,1108.8 2787.0,1109.5 2896.8,1098.5"/><polyline fill="none" stroke="#b186ba" stroke-width="3" stroke-opacity="0.45" stroke-linejoin="round" points="1345.2,1165.2 1369.0,1163.7 1448.5,1162.8 1557.0,1157.4 1701.7,1152.4 1882.5,1146.0 2100.0,1137.0 2136.0,1135.4 2154.0,1135.9 2208.5,1144.0 2262.7,1147.3 2309.8,1147.8 2317.0,1146.1 2338.7,1137.1 2353.0,1152.2 2364.0,1159.4 2371.0,1155.8 2400.0,1208.1 2407.4,1209.2 2443.6,1209.8 2461.7,1204.6 2534.0,1202.3 2570.0,1200.6 2581.0,1192.9 2599.0,1145.7 2617.0,1144.8 2635.3,1120.5 2642.5,1118.2 2657.0,1116.4 2686.0,1123.3 2714.8,1119.3 2787.0,1120.8 2896.8,1109.8"/><polyline fill="none" stroke="#86588c" stroke-width="4" stroke-opacity="0.4" stroke-linejoin="round" points="1345.2,1177.3 1369.0,1176.1 1448.5,1175.4 1557.0,1169.6 1701.7,1164.5 1882.5,1158.0 2100.0,1149.0 2136.0,1147.4 2154.0,1147.8 2208.5,1156.0 2262.7,1158.6 2309.8,1158.8 2317.0,1157.4 2338.7,1148.9 2353.0,1160.3 2364.0,1164.0 2371.0,1159.8 2400.0,1218.7 2407.4,1219.7 2443.6,1221.0 2461.7,1215.4 2534.0,1213.6 2570.0,1212.2 2581.0,1203.6 2599.0,1150.1 2617.0,1149.5 2635.3,1129.8 2642.5,1127.9 2657.0,1127.4 2686.0,1134.9 2714.8,1129.9 2787.0,1132.1 2896.8,1121.1"/><polyline fill="none" stroke="#b186ba" stroke-width="3" stroke-opacity="0.4" stroke-linejoin="round" points="1345.2,1191.0 1369.0,1190.1 1448.5,1189.6 1557.0,1183.5 1701.7,1178.1 1882.5,1171.5 2100.0,1162.5 2136.0,1161.0 2154.0,1161.1 2208.5,1169.5 2262.7,1171.2 2309.8,1171.2 2317.0,1170.1 2338.7,1162.1 2353.0,1169.4 2364.0,1169.2 2371.0,1164.2 2400.0,1230.5 2407.4,1231.5 2443.6,1233.7 2461.7,1227.6 2534.0,1226.2 2570.0,1225.3 2581.0,1215.6 2599.0,1155.1 2617.0,1154.6 2635.3,1140.2 2642.5,1138.8 2657.0,1139.7 2686.0,1147.8 2714.8,1141.8 2787.0,1144.8 2896.8,1133.8"/><polyline fill="none" stroke="#7a4c80" stroke-width="4" stroke-opacity="0.45" stroke-linejoin="round" points="1345.2,1198.6 1369.0,1197.9 1448.5,1197.5 1557.0,1191.1 1701.7,1185.7 1882.5,1179.0 2100.0,1170.0 2136.0,1168.5 2154.0,1168.4 2208.5,1177.0 2262.7,1178.2 2309.8,1178.1 2317.0,1177.2 2338.7,1169.5 2353.0,1174.4 2364.0,1172.1 2371.0,1166.7 2400.0,1237.1 2407.4,1238.1 2443.6,1240.7 2461.7,1234.4 2534.0,1233.3 2570.0,1232.5 2581.0,1222.3 2599.0,1157.9 2617.0,1157.5 2635.3,1145.9 2642.5,1144.8 2657.0,1146.5 2686.0,1155.0 2714.8,1148.4 2787.0,1151.8 2896.8,1140.8"/><polyline fill="none" stroke="#cfa9d8" stroke-width="12" stroke-opacity="0.8" stroke-linejoin="round" points="1345.2,1217.6 1369.0,1217.3 1448.5,1217.2 1557.0,1210.3 1701.7,1204.6 1882.5,1197.8 2100.0,1188.8 2136.0,1187.4 2154.0,1186.9 2208.5,1195.8 2262.7,1195.7 2309.8,1195.3 2317.0,1194.9 2338.7,1187.9 2353.0,1187.0 2364.0,1179.3 2371.0,1172.9 2400.0,1253.5 2407.4,1254.5 2443.6,1258.3 2461.7,1251.3 2534.0,1250.9 2570.0,1250.6 2581.0,1239.0 2599.0,1164.8 2617.0,1164.7 2635.3,1160.3 2642.5,1159.9 2657.0,1163.7 2686.0,1173.0 2714.8,1164.9 2787.0,1169.4 2896.8,1158.4"/></g><polyline fill="none" stroke="#63386c" stroke-opacity=".75" stroke-width="2.600" stroke-linejoin="round" points="1345.2,1229.0 1448.5,1229.0 1557.0,1221.8 1701.7,1216.0 1882.5,1209.0 2100.0,1200.0 2154.0,1198.0 2208.5,1207.0 2317.0,1205.5 2353.0,1194.6 2371.0,1176.6 2400.0,1263.4 2443.6,1268.8 2461.7,1261.5 2570.0,1261.5 2581.0,1249.0 2599.0,1169.0 2642.5,1169.0 2686.0,1183.8 2714.8,1174.8 2787.0,1180.0 2896.8,1169.0"/><g clip-path="url(#cpRed)"><g filter="url(#fBlur)"><polyline fill="none" stroke="#f4c0bf" stroke-width="9.0" stroke-opacity="0.80" stroke-linejoin="round" points="1345,1657.7 1367,1655.6 1389,1654.2 1411,1652.1 1433,1650.5 1455,1649.8 1477,1650.1 1499,1651.0 1521,1652.3 1543,1653.6 1565,1654.5 1587,1654.6 1609,1653.7 1631,1653.6 1653,1654.9 1675,1657.3 1697,1658.7 1719,1657.4 1741,1652.4 1763,1645.2 1785,1637.7 1807,1632.8 1829,1632.6 1851,1636.9 1873,1642.9 1895,1647.7 1917,1650.5 1939,1651.1 1961,1649.2 1983,1645.7 2005,1640.7 2027,1634.8 2049,1630.1 2071,1626.6 2093,1624.9 2115,1626.7 2137,1629.3 2159,1629.9 2181,1627.6 2203,1623.9 2225,1619.3 2247,1614.5 2269,1610.9 2291,1609.0 2313,1607.0 2335,1603.7 2357,1600.5 2379,1597.4 2401,1595.2 2423,1595.4 2445,1596.3 2467,1597.0 2489,1594.2 2511,1591.0 2533,1585.8 2555,1579.9 2577,1574.1 2599,1573.3 2621,1573.9 2643,1575.5 2665,1577.5 2687,1579.1 2709,1578.5 2731,1574.2 2753,1570.2 2775,1569.3 2797,1572.4 2819,1576.6 2841,1583.0 2863,1588.4 2885,1590.7 2897,1590.1"/><polyline fill="none" stroke="#96525c" stroke-width="7.2" stroke-opacity="0.50" stroke-linejoin="round" points="1345,1666.2 1367,1664.2 1389,1662.8 1411,1660.6 1433,1659.1 1455,1658.3 1477,1658.6 1499,1659.5 1521,1660.9 1543,1662.2 1565,1663.1 1587,1663.1 1609,1662.3 1631,1662.2 1653,1663.4 1675,1665.8 1697,1667.3 1719,1666.0 1741,1661.0 1763,1653.8 1785,1646.2 1807,1641.4 1829,1641.2 1851,1645.5 1873,1651.4 1895,1656.2 1917,1659.1 1939,1659.7 1961,1657.8 1983,1654.3 2005,1649.2 2027,1643.4 2049,1638.7 2071,1635.2 2093,1633.4 2115,1635.2 2137,1637.9 2159,1638.4 2181,1636.2 2203,1632.4 2225,1627.8 2247,1623.1 2269,1619.4 2291,1617.5 2313,1615.6 2335,1612.2 2357,1609.1 2379,1605.9 2401,1603.8 2423,1603.9 2445,1604.8 2467,1605.6 2489,1602.8 2511,1599.5 2533,1594.3 2555,1588.5 2577,1582.6 2599,1581.9 2621,1582.4 2643,1584.0 2665,1586.0 2687,1587.7 2709,1587.0 2731,1582.8 2753,1578.7 2775,1577.9 2797,1580.9 2819,1585.2 2841,1591.6 2863,1596.9 2885,1599.3 2897,1598.6"/><polyline fill="none" stroke="#f4c0bf" stroke-width="9.0" stroke-opacity="0.77" stroke-linejoin="round" points="1345,1685.3 1367,1681.6 1389,1678.1 1411,1675.5 1433,1673.3 1455,1673.2 1477,1674.6 1499,1676.6 1521,1678.1 1543,1678.2 1565,1676.9 1587,1674.3 1609,1672.2 1631,1671.6 1653,1673.1 1675,1675.5 1697,1677.3 1719,1678.1 1741,1677.9 1763,1676.0 1785,1672.4 1807,1667.5 1829,1663.6 1851,1662.3 1873,1663.3 1895,1665.8 1917,1668.7 1939,1671.0 1961,1671.7 1983,1669.1 2005,1663.8 2027,1658.2 2049,1652.7 2071,1648.5 2093,1646.9 2115,1647.2 2137,1649.4 2159,1651.8 2181,1653.6 2203,1654.5 2225,1652.7 2247,1647.6 2269,1640.8 2291,1633.9 2313,1628.3 2335,1624.1 2357,1620.6 2379,1619.2 2401,1620.1 2423,1621.5 2445,1622.3 2467,1619.6 2489,1616.1 2511,1612.2 2533,1608.0 2555,1603.3 2577,1600.8 2599,1600.8 2621,1604.7 2643,1608.1 2665,1609.8 2687,1609.4 2709,1605.9 2731,1600.9 2753,1596.8 2775,1595.1 2797,1595.0 2819,1597.1 2841,1601.5 2863,1607.2 2885,1613.2 2897,1616.4"/><polyline fill="none" stroke="#96525c" stroke-width="7.2" stroke-opacity="0.48" stroke-linejoin="round" points="1345,1693.9 1367,1690.2 1389,1686.6 1411,1684.0 1433,1681.9 1455,1681.7 1477,1683.1 1499,1685.2 1521,1686.6 1543,1686.7 1565,1685.4 1587,1682.9 1609,1680.7 1631,1680.1 1653,1681.6 1675,1684.0 1697,1685.9 1719,1686.6 1741,1686.4 1763,1684.6 1785,1680.9 1807,1676.0 1829,1672.2 1851,1670.9 1873,1671.8 1895,1674.3 1917,1677.3 1939,1679.6 1961,1680.3 1983,1677.6 2005,1672.4 2027,1666.7 2049,1661.2 2071,1657.0 2093,1655.5 2115,1655.8 2137,1657.9 2159,1660.4 2181,1662.1 2203,1663.1 2225,1661.3 2247,1656.1 2269,1649.3 2291,1642.4 2313,1636.9 2335,1632.6 2357,1629.1 2379,1627.7 2401,1628.7 2423,1630.1 2445,1630.8 2467,1628.1 2489,1624.6 2511,1620.8 2533,1616.5 2555,1611.9 2577,1609.3 2599,1609.3 2621,1613.2 2643,1616.6 2665,1618.4 2687,1618.0 2709,1614.4 2731,1609.5 2753,1605.4 2775,1603.6 2797,1603.5 2819,1605.7 2841,1610.0 2863,1615.8 2885,1621.7 2897,1624.9"/><polyline fill="none" stroke="#f4c0bf" stroke-width="9.0" stroke-opacity="0.55" stroke-linejoin="round" points="1345,1709.1 1367,1707.9 1389,1704.8 1411,1700.9 1433,1697.6 1455,1696.1 1477,1695.9 1499,1697.8 1521,1700.3 1543,1702.1 1565,1702.6 1587,1701.7 1609,1700.0 1631,1697.9 1653,1695.8 1675,1694.7 1697,1695.2 1719,1697.1 1741,1699.1 1763,1700.1 1785,1699.5 1807,1696.7 1829,1692.4 1851,1688.2 1873,1686.1 1895,1687.0 1917,1690.1 1939,1692.7 1961,1693.2 1983,1691.2 2005,1686.9 2027,1681.5 2049,1677.2 2071,1675.0 2093,1674.8 2115,1675.8 2137,1677.2 2159,1678.2 2181,1677.6 2203,1674.9 2225,1670.2 2247,1664.8 2269,1660.0 2291,1656.4 2313,1654.6 2335,1654.5 2357,1655.5 2379,1655.0 2401,1651.8 2423,1645.7 2445,1639.7 2467,1635.2 2489,1633.1 2511,1633.4 2533,1635.7 2555,1638.6 2577,1640.1 2599,1638.4 2621,1634.1 2643,1628.5 2665,1624.1 2687,1621.7 2709,1622.8 2731,1627.0 2753,1631.5 2775,1634.4 2797,1634.5 2819,1631.5 2841,1627.4 2863,1624.1 2885,1623.3 2897,1626.5"/><polyline fill="none" stroke="#96525c" stroke-width="7.2" stroke-opacity="0.46" stroke-linejoin="round" points="1345,1717.6 1367,1716.5 1389,1713.4 1411,1709.4 1433,1706.1 1455,1704.6 1477,1704.5 1499,1706.3 1521,1708.9 1543,1710.7 1565,1711.2 1587,1710.3 1609,1708.6 1631,1706.4 1653,1704.3 1675,1703.2 1697,1703.8 1719,1705.7 1741,1707.7 1763,1708.6 1785,1708.0 1807,1705.3 1829,1700.9 1851,1696.7 1873,1694.6 1895,1695.6 1917,1698.7 1939,1701.3 1961,1701.7 1983,1699.7 2005,1695.4 2027,1690.0 2049,1685.8 2071,1683.6 2093,1683.4 2115,1684.3 2137,1685.7 2159,1686.7 2181,1686.1 2203,1683.4 2225,1678.7 2247,1673.3 2269,1668.5 2291,1664.9 2313,1663.2 2335,1663.1 2357,1664.0 2379,1663.5 2401,1660.4 2423,1654.3 2445,1648.3 2467,1643.8 2489,1641.6 2511,1641.9 2533,1644.2 2555,1647.2 2577,1648.6 2599,1646.9 2621,1642.6 2643,1637.1 2665,1632.7 2687,1630.3 2709,1631.4 2731,1635.5 2753,1640.1 2775,1642.9 2797,1643.1 2819,1640.1 2841,1636.0 2863,1632.6 2885,1631.9 2897,1635.1"/><polyline fill="none" stroke="#f4c0bf" stroke-width="6.5" stroke-opacity="0.53" stroke-linejoin="round" points="1345,1720.6 1367,1721.0 1389,1722.2 1411,1723.8 1433,1725.5 1455,1726.9 1477,1727.7 1499,1727.0 1521,1725.6 1543,1724.2 1565,1723.0 1587,1722.1 1609,1720.8 1631,1718.9 1653,1716.7 1675,1714.8 1697,1713.8 1719,1713.8 1741,1715.0 1763,1717.2 1785,1719.6 1807,1721.6 1829,1722.5 1851,1721.8 1873,1719.6 1895,1716.8 1917,1713.6 1939,1710.5 1961,1707.8 1983,1705.4 2005,1703.3 2027,1702.0 2049,1700.8 2071,1699.8 2093,1698.8 2115,1698.4 2137,1698.6 2159,1698.8 2181,1698.6 2203,1698.2 2225,1697.1 2247,1694.7 2269,1691.1 2291,1686.3 2313,1680.8 2335,1676.1 2357,1672.2 2379,1669.5 2401,1666.5 2423,1664.2 2445,1662.8 2467,1662.1 2489,1661.9 2511,1662.5 2533,1663.6 2555,1664.5 2577,1664.9 2599,1663.9 2621,1661.1 2643,1656.7 2665,1652.3 2687,1650.1 2709,1649.0 2731,1648.3 2753,1648.5 2775,1649.5 2797,1650.3 2819,1651.3 2841,1652.4 2863,1653.6 2885,1655.2 2897,1656.7"/><polyline fill="none" stroke="#96525c" stroke-width="5.2" stroke-opacity="0.44" stroke-linejoin="round" points="1345,1726.7 1367,1727.1 1389,1728.3 1411,1730.0 1433,1731.7 1455,1733.1 1477,1733.9 1499,1733.2 1521,1731.8 1543,1730.4 1565,1729.2 1587,1728.2 1609,1727.0 1631,1725.1 1653,1722.9 1675,1721.0 1697,1719.9 1719,1720.0 1741,1721.2 1763,1723.3 1785,1725.8 1807,1727.8 1829,1728.6 1851,1728.0 1873,1725.8 1895,1722.9 1917,1719.8 1939,1716.7 1961,1714.0 1983,1711.5 2005,1709.5 2027,1708.2 2049,1707.0 2071,1705.9 2093,1705.0 2115,1704.6 2137,1704.8 2159,1705.0 2181,1704.8 2203,1704.4 2225,1703.3 2247,1700.9 2269,1697.3 2291,1692.5 2313,1687.0 2335,1682.2 2357,1678.4 2379,1675.7 2401,1672.7 2423,1670.4 2445,1669.0 2467,1668.3 2489,1668.1 2511,1668.7 2533,1669.7 2555,1670.7 2577,1671.1 2599,1670.1 2621,1667.3 2643,1662.9 2665,1658.5 2687,1656.2 2709,1655.1 2731,1654.5 2753,1654.7 2775,1655.7 2797,1656.5 2819,1657.5 2841,1658.5 2863,1659.8 2885,1661.4 2897,1662.9"/><polyline fill="none" stroke="#f4c0bf" stroke-width="6.5" stroke-opacity="0.50" stroke-linejoin="round" points="1345,1734.3 1367,1735.4 1389,1737.2 1411,1739.2 1433,1741.1 1455,1742.6 1477,1743.4 1499,1743.7 1521,1743.5 1543,1742.2 1565,1740.3 1587,1737.4 1609,1734.2 1631,1731.2 1653,1729.1 1675,1728.3 1697,1728.8 1719,1730.4 1741,1732.7 1763,1734.9 1785,1736.9 1807,1738.2 1829,1738.7 1851,1738.2 1873,1735.9 1895,1732.1 1917,1727.7 1939,1723.4 1961,1720.3 1983,1718.8 2005,1718.1 2027,1717.8 2049,1717.5 2071,1717.4 2093,1717.6 2115,1717.7 2137,1717.7 2159,1717.2 2181,1715.9 2203,1713.8 2225,1710.8 2247,1707.4 2269,1703.8 2291,1700.3 2313,1696.7 2335,1693.3 2357,1689.1 2379,1685.9 2401,1684.0 2423,1683.4 2445,1683.3 2467,1683.6 2489,1684.3 2511,1684.8 2533,1684.8 2555,1683.8 2577,1681.8 2599,1678.4 2621,1674.9 2643,1671.9 2665,1669.3 2687,1667.1 2709,1665.7 2731,1666.2 2753,1667.0 2775,1668.7 2797,1671.0 2819,1673.6 2841,1675.7 2863,1676.9 2885,1676.9 2897,1676.3"/><polyline fill="none" stroke="#96525c" stroke-width="5.2" stroke-opacity="0.42" stroke-linejoin="round" points="1345,1740.5 1367,1741.5 1389,1743.3 1411,1745.4 1433,1747.3 1455,1748.8 1477,1749.5 1499,1749.8 1521,1749.7 1543,1748.4 1565,1746.4 1587,1743.6 1609,1740.4 1631,1737.4 1653,1735.3 1675,1734.5 1697,1735.0 1719,1736.6 1741,1738.8 1763,1741.1 1785,1743.0 1807,1744.4 1829,1744.9 1851,1744.4 1873,1742.1 1895,1738.3 1917,1733.8 1939,1729.6 1961,1726.5 1983,1725.0 2005,1724.3 2027,1724.0 2049,1723.6 2071,1723.5 2093,1723.7 2115,1723.9 2137,1723.8 2159,1723.3 2181,1722.1 2203,1719.9 2225,1716.9 2247,1713.5 2269,1710.0 2291,1706.4 2313,1702.9 2335,1699.4 2357,1695.3 2379,1692.1 2401,1690.2 2423,1689.5 2445,1689.5 2467,1689.8 2489,1690.5 2511,1691.0 2533,1691.0 2555,1689.9 2577,1687.9 2599,1684.6 2621,1681.1 2643,1678.0 2665,1675.4 2687,1673.2 2709,1671.9 2731,1672.3 2753,1673.2 2775,1674.9 2797,1677.2 2819,1679.8 2841,1681.9 2863,1683.1 2885,1683.1 2897,1682.5"/><polyline fill="none" stroke="#f4c0bf" stroke-width="6.5" stroke-opacity="0.48" stroke-linejoin="round" points="1345,1759.9 1367,1758.9 1389,1757.7 1411,1756.6 1433,1755.6 1455,1755.4 1477,1756.0 1499,1757.2 1521,1758.3 1543,1758.9 1565,1758.9 1587,1758.2 1609,1757.4 1631,1756.6 1653,1755.8 1675,1755.0 1697,1754.3 1719,1753.5 1741,1752.6 1763,1751.9 1785,1751.3 1807,1750.9 1829,1750.5 1851,1750.0 1873,1749.8 1895,1749.6 1917,1749.1 1939,1748.3 1961,1746.8 1983,1744.9 2005,1742.9 2027,1741.2 2049,1739.9 2071,1738.5 2093,1737.1 2115,1735.6 2137,1733.9 2159,1732.2 2181,1730.6 2203,1729.1 2225,1727.5 2247,1726.1 2269,1724.6 2291,1723.0 2313,1720.6 2335,1718.0 2357,1715.3 2379,1712.4 2401,1709.4 2423,1707.0 2445,1705.6 2467,1705.0 2489,1704.6 2511,1704.0 2533,1703.0 2555,1701.3 2577,1699.6 2599,1698.3 2621,1697.4 2643,1696.4 2665,1695.5 2687,1694.6 2709,1693.5 2731,1692.5 2753,1691.9 2775,1692.6 2797,1693.4 2819,1694.3 2841,1695.3 2863,1696.2 2885,1696.4 2897,1695.9"/><polyline fill="none" stroke="#96525c" stroke-width="5.2" stroke-opacity="0.40" stroke-linejoin="round" points="1345,1766.1 1367,1765.1 1389,1763.9 1411,1762.7 1433,1761.8 1455,1761.6 1477,1762.2 1499,1763.3 1521,1764.5 1543,1765.1 1565,1765.1 1587,1764.4 1609,1763.6 1631,1762.8 1653,1761.9 1675,1761.2 1697,1760.5 1719,1759.6 1741,1758.8 1763,1758.1 1785,1757.5 1807,1757.1 1829,1756.6 1851,1756.2 1873,1755.9 1895,1755.8 1917,1755.3 1939,1754.5 1961,1753.0 1983,1751.1 2005,1749.1 2027,1747.4 2049,1746.0 2071,1744.7 2093,1743.2 2115,1741.7 2137,1740.1 2159,1738.4 2181,1736.8 2203,1735.2 2225,1733.7 2247,1732.3 2269,1730.7 2291,1729.2 2313,1726.8 2335,1724.2 2357,1721.4 2379,1718.6 2401,1715.5 2423,1713.2 2445,1711.8 2467,1711.2 2489,1710.8 2511,1710.1 2533,1709.1 2555,1707.5 2577,1705.8 2599,1704.4 2621,1703.6 2643,1702.6 2665,1701.7 2687,1700.8 2709,1699.6 2731,1698.7 2753,1698.1 2775,1698.8 2797,1699.6 2819,1700.5 2841,1701.5 2863,1702.4 2885,1702.6 2897,1702.1"/><polyline fill="none" stroke="#f4c0bf" stroke-width="6.5" stroke-opacity="0.46" stroke-linejoin="round" points="1345,1776.6 1367,1774.5 1389,1772.1 1411,1770.4 1433,1770.6 1455,1772.5 1477,1775.3 1499,1777.3 1521,1777.3 1543,1775.3 1565,1772.4 1587,1769.9 1609,1768.2 1631,1768.5 1653,1770.2 1675,1772.3 1697,1773.3 1719,1772.7 1741,1770.7 1763,1768.2 1785,1766.1 1807,1765.1 1829,1765.3 1851,1766.3 1873,1767.1 1895,1766.9 1917,1765.6 1939,1762.9 1961,1759.9 1983,1757.3 2005,1756.3 2027,1757.0 2049,1758.3 2071,1758.8 2093,1757.5 2115,1754.4 2137,1750.4 2159,1746.6 2181,1744.0 2203,1743.1 2225,1743.5 2247,1743.7 2269,1742.8 2291,1739.8 2313,1736.2 2335,1732.8 2357,1730.2 2379,1729.0 2401,1728.9 2423,1729.1 2445,1728.6 2467,1726.9 2489,1723.9 2511,1720.2 2533,1716.4 2555,1714.3 2577,1714.2 2599,1715.7 2621,1717.2 2643,1717.6 2665,1716.6 2687,1714.5 2709,1712.2 2731,1710.4 2753,1710.1 2775,1711.0 2797,1713.2 2819,1714.6 2841,1714.6 2863,1713.4 2885,1711.6 2897,1710.5"/><polyline fill="none" stroke="#96525c" stroke-width="5.2" stroke-opacity="0.38" stroke-linejoin="round" points="1345,1782.7 1367,1780.7 1389,1778.3 1411,1776.6 1433,1776.7 1455,1778.7 1477,1781.4 1499,1783.4 1521,1783.5 1543,1781.5 1565,1778.6 1587,1776.0 1609,1774.4 1631,1774.7 1653,1776.4 1675,1778.5 1697,1779.5 1719,1778.9 1741,1776.9 1763,1774.3 1785,1772.3 1807,1771.3 1829,1771.4 1851,1772.5 1873,1773.3 1895,1773.1 1917,1771.7 1939,1769.1 1961,1766.1 1983,1763.5 2005,1762.4 2027,1763.2 2049,1764.5 2071,1765.0 2093,1763.6 2115,1760.6 2137,1756.6 2159,1752.8 2181,1750.2 2203,1749.3 2225,1749.7 2247,1749.9 2269,1749.0 2291,1746.0 2313,1742.4 2335,1739.0 2357,1736.4 2379,1735.1 2401,1735.1 2423,1735.3 2445,1734.8 2467,1733.0 2489,1730.1 2511,1726.4 2533,1722.6 2555,1720.4 2577,1720.4 2599,1721.9 2621,1723.4 2643,1723.8 2665,1722.8 2687,1720.7 2709,1718.3 2731,1716.6 2753,1716.2 2775,1717.2 2797,1719.4 2819,1720.8 2841,1720.8 2863,1719.5 2885,1717.7 2897,1716.7"/><polyline fill="none" stroke="#f4c0bf" stroke-width="6.5" stroke-opacity="0.43" stroke-linejoin="round" points="1345,1787.0 1367,1786.6 1389,1787.5 1411,1789.6 1433,1792.5 1455,1795.1 1477,1796.8 1499,1797.3 1521,1796.7 1543,1795.3 1565,1793.3 1587,1791.0 1609,1788.7 1631,1786.8 1653,1785.0 1675,1784.2 1697,1784.3 1719,1785.3 1741,1786.8 1763,1788.3 1785,1789.5 1807,1790.1 1829,1789.9 1851,1788.9 1873,1787.1 1895,1784.7 1917,1781.8 1939,1778.7 1961,1776.2 1983,1774.4 2005,1773.2 2027,1772.7 2049,1773.0 2071,1773.8 2093,1774.9 2115,1775.4 2137,1775.0 2159,1773.4 2181,1770.9 2203,1767.4 2225,1763.4 2247,1758.9 2269,1755.1 2291,1752.2 2313,1750.3 2335,1749.4 2357,1749.9 2379,1751.2 2401,1752.5 2423,1753.3 2445,1753.0 2467,1751.2 2489,1748.1 2511,1744.4 2533,1740.9 2555,1737.8 2577,1734.9 2599,1732.8 2621,1731.7 2643,1731.7 2665,1732.7 2687,1734.5 2709,1736.5 2731,1738.4 2753,1739.6 2775,1739.5 2797,1738.3 2819,1736.2 2841,1734.2 2863,1731.8 2885,1729.7 2897,1728.9"/><polyline fill="none" stroke="#96525c" stroke-width="5.2" stroke-opacity="0.36" stroke-linejoin="round" points="1345,1793.1 1367,1792.7 1389,1793.7 1411,1795.8 1433,1798.7 1455,1801.3 1477,1803.0 1499,1803.5 1521,1802.9 1543,1801.5 1565,1799.5 1587,1797.1 1609,1794.9 1631,1793.0 1653,1791.2 1675,1790.4 1697,1790.5 1719,1791.5 1741,1793.0 1763,1794.5 1785,1795.6 1807,1796.3 1829,1796.1 1851,1795.1 1873,1793.3 1895,1790.9 1917,1788.0 1939,1784.9 1961,1782.3 1983,1780.5 2005,1779.4 2027,1778.9 2049,1779.1 2071,1780.0 2093,1781.0 2115,1781.6 2137,1781.1 2159,1779.6 2181,1777.0 2203,1773.6 2225,1769.5 2247,1765.1 2269,1761.3 2291,1758.3 2313,1756.4 2335,1755.6 2357,1756.1 2379,1757.4 2401,1758.7 2423,1759.5 2445,1759.1 2467,1757.4 2489,1754.3 2511,1750.6 2533,1747.1 2555,1743.9 2577,1741.0 2599,1738.9 2621,1737.9 2643,1737.9 2665,1738.9 2687,1740.7 2709,1742.7 2731,1744.6 2753,1745.8 2775,1745.7 2797,1744.5 2819,1742.3 2841,1740.3 2863,1738.0 2885,1735.9 2897,1735.1"/><polyline fill="none" stroke="#f4c0bf" stroke-width="6.5" stroke-opacity="0.41" stroke-linejoin="round" points="1345,1811.6 1367,1813.7 1389,1815.8 1411,1817.3 1433,1817.5 1455,1816.2 1477,1813.8 1499,1810.9 1521,1808.2 1543,1806.3 1565,1805.5 1587,1805.8 1609,1807.1 1631,1808.9 1653,1811.0 1675,1812.3 1697,1813.1 1719,1813.0 1741,1811.6 1763,1809.3 1785,1806.6 1807,1803.8 1829,1801.4 1851,1799.9 1873,1799.2 1895,1799.3 1917,1799.9 1939,1801.0 1961,1802.3 1983,1803.2 2005,1803.1 2027,1801.7 2049,1799.0 2071,1795.6 2093,1792.0 2115,1788.7 2137,1785.9 2159,1784.1 2181,1783.1 2203,1782.8 2225,1782.6 2247,1782.7 2269,1782.8 2291,1782.4 2313,1781.3 2335,1779.5 2357,1777.0 2379,1774.2 2401,1771.2 2423,1768.2 2445,1765.4 2467,1763.0 2489,1761.4 2511,1761.1 2533,1761.9 2555,1763.2 2577,1764.4 2599,1764.8 2621,1764.3 2643,1763.0 2665,1760.9 2687,1758.3 2709,1755.9 2731,1753.8 2753,1752.6 2775,1752.2 2797,1752.5 2819,1753.4 2841,1754.7 2863,1756.9 2885,1758.5 2897,1759.1"/><polyline fill="none" stroke="#96525c" stroke-width="5.2" stroke-opacity="0.34" stroke-linejoin="round" points="1345,1817.8 1367,1819.9 1389,1822.0 1411,1823.4 1433,1823.7 1455,1822.4 1477,1820.0 1499,1817.1 1521,1814.4 1543,1812.5 1565,1811.6 1587,1812.0 1609,1813.3 1631,1815.1 1653,1817.1 1675,1818.5 1697,1819.3 1719,1819.1 1741,1817.8 1763,1815.5 1785,1812.8 1807,1810.0 1829,1807.6 1851,1806.1 1873,1805.4 1895,1805.5 1917,1806.1 1939,1807.2 1961,1808.5 1983,1809.4 2005,1809.2 2027,1807.9 2049,1805.2 2071,1801.8 2093,1798.2 2115,1794.9 2137,1792.1 2159,1790.3 2181,1789.3 2203,1789.0 2225,1788.8 2247,1788.9 2269,1789.0 2291,1788.6 2313,1787.5 2335,1785.7 2357,1783.2 2379,1780.4 2401,1777.4 2423,1774.3 2445,1771.6 2467,1769.2 2489,1767.6 2511,1767.3 2533,1768.1 2555,1769.4 2577,1770.5 2599,1770.9 2621,1770.5 2643,1769.1 2665,1767.0 2687,1764.5 2709,1762.0 2731,1760.0 2753,1758.8 2775,1758.4 2797,1758.6 2819,1759.6 2841,1760.9 2863,1763.0 2885,1764.7 2897,1765.3"/><polyline fill="none" stroke="#f4c0bf" stroke-width="6.5" stroke-opacity="0.38" stroke-linejoin="round" points="1345,1833.7 1367,1832.7 1389,1831.0 1411,1828.7 1433,1826.1 1455,1823.8 1477,1822.3 1499,1821.7 1521,1822.0 1543,1823.1 1565,1824.9 1587,1826.8 1609,1828.8 1631,1830.5 1653,1831.7 1675,1832.3 1697,1832.0 1719,1830.6 1741,1828.6 1763,1826.3 1785,1823.7 1807,1821.4 1829,1819.1 1851,1817.1 1873,1815.4 1895,1814.3 1917,1813.9 1939,1814.1 1961,1814.7 1983,1815.6 2005,1816.6 2027,1817.4 2049,1817.5 2071,1817.0 2093,1815.6 2115,1813.8 2137,1811.7 2159,1809.3 2181,1806.2 2203,1802.9 2225,1799.6 2247,1796.4 2269,1793.5 2291,1791.4 2313,1790.2 2335,1789.9 2357,1790.1 2379,1790.7 2401,1791.4 2423,1791.9 2445,1792.3 2467,1792.4 2489,1792.1 2511,1790.9 2533,1788.8 2555,1786.2 2577,1783.3 2599,1780.6 2621,1777.9 2643,1775.5 2665,1773.6 2687,1772.4 2709,1772.1 2731,1772.5 2753,1773.6 2775,1775.2 2797,1777.1 2819,1778.8 2841,1779.9 2863,1780.4 2885,1780.3 2897,1780.3"/><polyline fill="none" stroke="#96525c" stroke-width="5.2" stroke-opacity="0.32" stroke-linejoin="round" points="1345,1839.9 1367,1838.8 1389,1837.2 1411,1834.8 1433,1832.3 1455,1830.0 1477,1828.5 1499,1827.8 1521,1828.1 1543,1829.3 1565,1831.1 1587,1833.0 1609,1835.0 1631,1836.7 1653,1837.9 1675,1838.5 1697,1838.2 1719,1836.8 1741,1834.8 1763,1832.4 1785,1829.9 1807,1827.5 1829,1825.3 1851,1823.3 1873,1821.6 1895,1820.4 1917,1820.1 1939,1820.2 1961,1820.9 1983,1821.8 2005,1822.8 2027,1823.5 2049,1823.7 2071,1823.1 2093,1821.8 2115,1820.0 2137,1817.9 2159,1815.5 2181,1812.4 2203,1809.1 2225,1805.7 2247,1802.6 2269,1799.7 2291,1797.6 2313,1796.4 2335,1796.1 2357,1796.3 2379,1796.9 2401,1797.6 2423,1798.1 2445,1798.5 2467,1798.6 2489,1798.2 2511,1797.0 2533,1795.0 2555,1792.3 2577,1789.5 2599,1786.7 2621,1784.1 2643,1781.7 2665,1779.8 2687,1778.6 2709,1778.2 2731,1778.7 2753,1779.8 2775,1781.4 2797,1783.2 2819,1785.0 2841,1786.1 2863,1786.6 2885,1786.5 2897,1786.5"/><polyline fill="none" stroke="#f4c0bf" stroke-width="6.5" stroke-opacity="0.36" stroke-linejoin="round" points="1345,1849.1 1367,1847.8 1389,1846.8 1411,1846.5 1433,1847.1 1455,1848.3 1477,1849.6 1499,1850.6 1521,1850.9 1543,1850.3 1565,1848.9 1587,1847.1 1609,1845.5 1631,1844.3 1653,1843.7 1675,1843.8 1697,1844.7 1719,1845.8 1741,1846.8 1763,1847.0 1785,1846.4 1807,1844.9 1829,1842.8 1851,1840.5 1873,1838.6 1895,1837.4 1917,1836.9 1939,1837.1 1961,1837.6 1983,1838.0 2005,1838.0 2027,1837.2 2049,1835.5 2071,1833.4 2093,1830.8 2115,1828.1 2137,1825.4 2159,1823.7 2181,1823.0 2203,1823.1 2225,1823.6 2247,1823.9 2269,1823.7 2291,1822.7 2313,1820.6 2335,1817.8 2357,1814.7 2379,1811.7 2401,1809.5 2423,1808.4 2445,1808.4 2467,1809.2 2489,1810.2 2511,1810.7 2533,1810.7 2555,1809.6 2577,1807.6 2599,1805.1 2621,1802.7 2643,1801.0 2665,1800.0 2687,1799.7 2709,1800.2 2731,1801.1 2753,1802.0 2775,1802.5 2797,1802.4 2819,1801.5 2841,1800.0 2863,1798.2 2885,1796.3 2897,1795.1"/><polyline fill="none" stroke="#96525c" stroke-width="5.2" stroke-opacity="0.30" stroke-linejoin="round" points="1345,1855.3 1367,1854.0 1389,1853.0 1411,1852.7 1433,1853.3 1455,1854.5 1477,1855.8 1499,1856.8 1521,1857.1 1543,1856.5 1565,1855.1 1587,1853.3 1609,1851.6 1631,1850.5 1653,1849.9 1675,1850.0 1697,1850.8 1719,1852.0 1741,1852.9 1763,1853.1 1785,1852.5 1807,1851.1 1829,1848.9 1851,1846.7 1873,1844.8 1895,1843.6 1917,1843.1 1939,1843.3 1961,1843.8 1983,1844.2 2005,1844.2 2027,1843.3 2049,1841.7 2071,1839.6 2093,1837.0 2115,1834.3 2137,1831.6 2159,1829.8 2181,1829.1 2203,1829.3 2225,1829.8 2247,1830.1 2269,1829.9 2291,1828.8 2313,1826.8 2335,1823.9 2357,1820.9 2379,1817.9 2401,1815.6 2423,1814.6 2445,1814.6 2467,1815.4 2489,1816.3 2511,1816.9 2533,1816.8 2555,1815.8 2577,1813.8 2599,1811.3 2621,1808.9 2643,1807.1 2665,1806.1 2687,1805.9 2709,1806.3 2731,1807.3 2753,1808.2 2775,1808.7 2797,1808.6 2819,1807.7 2841,1806.2 2863,1804.4 2885,1802.4 2897,1801.3"/><polyline fill="none" stroke="#f4c0bf" stroke-width="6.5" stroke-opacity="0.34" stroke-linejoin="round" points="1345,1868.7 1367,1868.8 1389,1868.4 1411,1867.8 1433,1866.9 1455,1865.9 1477,1864.9 1499,1863.7 1521,1862.5 1543,1861.4 1565,1860.5 1587,1859.8 1609,1859.5 1631,1859.5 1653,1859.7 1675,1860.3 1697,1861.1 1719,1862.0 1741,1862.9 1763,1863.5 1785,1863.3 1807,1862.6 1829,1861.4 1851,1859.9 1873,1858.2 1895,1856.2 1917,1854.2 1939,1852.2 1961,1850.5 1983,1849.0 2005,1847.8 2027,1847.2 2049,1847.0 2071,1847.2 2093,1847.6 2115,1847.5 2137,1847.1 2159,1846.4 2181,1845.4 2203,1844.2 2225,1842.8 2247,1841.3 2269,1839.5 2291,1837.4 2313,1835.0 2335,1832.4 2357,1829.9 2379,1827.8 2401,1826.5 2423,1825.9 2445,1825.7 2467,1825.9 2489,1826.4 2511,1827.3 2533,1828.0 2555,1828.3 2577,1828.2 2599,1827.4 2621,1826.2 2643,1824.6 2665,1823.0 2687,1821.2 2709,1819.3 2731,1817.5 2753,1815.9 2775,1814.8 2797,1814.2 2819,1814.1 2841,1814.5 2863,1815.3 2885,1816.2 2897,1816.3"/><polyline fill="none" stroke="#96525c" stroke-width="5.2" stroke-opacity="0.28" stroke-linejoin="round" points="1345,1874.9 1367,1875.0 1389,1874.6 1411,1874.0 1433,1873.1 1455,1872.1 1477,1871.0 1499,1869.9 1521,1868.7 1543,1867.6 1565,1866.6 1587,1866.0 1609,1865.7 1631,1865.6 1653,1865.9 1675,1866.4 1697,1867.2 1719,1868.2 1741,1869.1 1763,1869.7 1785,1869.5 1807,1868.8 1829,1867.6 1851,1866.1 1873,1864.3 1895,1862.4 1917,1860.4 1939,1858.4 1961,1856.6 1983,1855.2 2005,1854.0 2027,1853.4 2049,1853.2 2071,1853.4 2093,1853.7 2115,1853.6 2137,1853.3 2159,1852.6 2181,1851.6 2203,1850.3 2225,1849.0 2247,1847.5 2269,1845.7 2291,1843.5 2313,1841.1 2335,1838.6 2357,1836.1 2379,1834.0 2401,1832.6 2423,1832.0 2445,1831.9 2467,1832.1 2489,1832.6 2511,1833.5 2533,1834.1 2555,1834.5 2577,1834.3 2599,1833.6 2621,1832.3 2643,1830.8 2665,1829.2 2687,1827.4 2709,1825.5 2731,1823.6 2753,1822.1 2775,1821.0 2797,1820.4 2819,1820.3 2841,1820.7 2863,1821.5 2885,1822.4 2897,1822.5"/><polyline fill="none" stroke="#f4c0bf" stroke-width="6.5" stroke-opacity="0.31" stroke-linejoin="round" points="1345,1885.5 1367,1881.0 1389,1877.5 1411,1876.7 1433,1879.1 1455,1883.2 1477,1886.6 1499,1887.3 1521,1885.1 1543,1880.9 1565,1877.0 1587,1875.4 1609,1876.6 1631,1879.9 1653,1883.2 1675,1884.3 1697,1882.7 1719,1878.8 1741,1874.8 1763,1872.6 1785,1873.5 1807,1876.6 1829,1879.7 1851,1881.0 1873,1879.2 1895,1874.9 1917,1870.0 1939,1866.9 1961,1866.7 1983,1869.0 2005,1872.2 2027,1873.9 2049,1872.7 2071,1868.5 2093,1863.4 2115,1859.6 2137,1858.7 2159,1860.3 2181,1863.1 2203,1864.8 2225,1863.9 2247,1860.3 2269,1855.4 2291,1851.4 2313,1849.8 2335,1851.1 2357,1854.0 2379,1856.3 2401,1856.1 2423,1852.9 2445,1848.1 2467,1844.0 2489,1842.3 2511,1843.6 2533,1847.1 2555,1850.3 2577,1851.2 2599,1849.0 2621,1844.6 2643,1840.0 2665,1837.5 2687,1838.0 2709,1841.0 2731,1844.3 2753,1845.5 2775,1843.8 2797,1839.7 2819,1835.3 2841,1832.7 2863,1833.2 2885,1836.3 2897,1838.3"/><polyline fill="none" stroke="#96525c" stroke-width="5.2" stroke-opacity="0.26" stroke-linejoin="round" points="1345,1891.7 1367,1887.2 1389,1883.6 1411,1882.9 1433,1885.3 1455,1889.4 1477,1892.7 1499,1893.5 1521,1891.2 1543,1887.1 1565,1883.2 1587,1881.5 1609,1882.8 1631,1886.1 1653,1889.3 1675,1890.5 1697,1888.8 1719,1885.0 1741,1881.0 1763,1878.8 1785,1879.6 1807,1882.8 1829,1885.9 1851,1887.1 1873,1885.3 1895,1881.1 1917,1876.2 1939,1873.1 1961,1872.8 1983,1875.2 2005,1878.4 2027,1880.1 2049,1878.8 2071,1874.6 2093,1869.6 2115,1865.8 2137,1864.8 2159,1866.5 2181,1869.3 2203,1871.0 2225,1870.1 2247,1866.5 2269,1861.6 2291,1857.6 2313,1856.0 2335,1857.2 2357,1860.1 2379,1862.5 2401,1862.2 2423,1859.1 2445,1854.3 2467,1850.1 2489,1848.5 2511,1849.8 2533,1853.2 2555,1856.5 2577,1857.4 2599,1855.2 2621,1850.8 2643,1846.1 2665,1843.6 2687,1844.2 2709,1847.2 2731,1850.5 2753,1851.7 2775,1849.9 2797,1845.9 2819,1841.5 2841,1838.9 2863,1839.4 2885,1842.5 2897,1844.5"/><polyline fill="none" stroke="#f4c0bf" stroke-width="6.5" stroke-opacity="0.29" stroke-linejoin="round" points="1345,1899.4 1367,1900.3 1389,1901.2 1411,1902.1 1433,1902.8 1455,1902.9 1477,1902.6 1499,1901.8 1521,1900.7 1543,1899.2 1565,1897.5 1587,1895.8 1609,1894.2 1631,1893.0 1653,1892.3 1675,1892.0 1697,1892.2 1719,1892.5 1741,1893.1 1763,1893.8 1785,1894.6 1807,1895.4 1829,1896.0 1851,1895.9 1873,1895.6 1895,1894.8 1917,1893.6 1939,1892.0 1961,1890.2 1983,1888.3 2005,1886.4 2027,1884.5 2049,1882.4 2071,1880.7 2093,1879.3 2115,1878.2 2137,1877.6 2159,1877.3 2181,1877.4 2203,1877.5 2225,1877.6 2247,1877.7 2269,1877.6 2291,1877.3 2313,1876.7 2335,1875.9 2357,1874.8 2379,1873.3 2401,1871.4 2423,1869.2 2445,1867.3 2467,1865.5 2489,1863.9 2511,1862.7 2533,1861.8 2555,1861.4 2577,1861.5 2599,1861.8 2621,1862.4 2643,1862.9 2665,1863.3 2687,1863.6 2709,1863.8 2731,1863.8 2753,1863.5 2775,1862.8 2797,1861.7 2819,1860.4 2841,1858.8 2863,1857.3 2885,1855.7 2897,1854.9"/><polyline fill="none" stroke="#96525c" stroke-width="5.2" stroke-opacity="0.24" stroke-linejoin="round" points="1345,1905.5 1367,1906.4 1389,1907.4 1411,1908.3 1433,1908.9 1455,1909.1 1477,1908.8 1499,1908.0 1521,1906.9 1543,1905.4 1565,1903.7 1587,1901.9 1609,1900.4 1631,1899.2 1653,1898.4 1675,1898.2 1697,1898.3 1719,1898.7 1741,1899.2 1763,1899.9 1785,1900.8 1807,1901.6 1829,1902.1 1851,1902.1 1873,1901.7 1895,1900.9 1917,1899.7 1939,1898.2 1961,1896.4 1983,1894.5 2005,1892.6 2027,1890.6 2049,1888.6 2071,1886.9 2093,1885.4 2115,1884.4 2137,1883.7 2159,1883.5 2181,1883.6 2203,1883.7 2225,1883.8 2247,1883.8 2269,1883.8 2291,1883.5 2313,1882.9 2335,1882.1 2357,1881.0 2379,1879.4 2401,1877.5 2423,1875.4 2445,1873.5 2467,1871.7 2489,1870.1 2511,1868.8 2533,1867.9 2555,1867.6 2577,1867.7 2599,1868.0 2621,1868.5 2643,1869.1 2665,1869.5 2687,1869.8 2709,1869.9 2731,1870.0 2753,1869.7 2775,1869.0 2797,1867.9 2819,1866.6 2841,1865.0 2863,1863.4 2885,1861.9 2897,1861.1"/><polyline fill="none" stroke="#f4c0bf" stroke-width="6.5" stroke-opacity="0.26" stroke-linejoin="round" points="1345,1914.8 1367,1913.6 1389,1913.0 1411,1912.8 1433,1913.1 1455,1913.9 1477,1915.0 1499,1916.3 1521,1917.4 1543,1918.3 1565,1918.9 1587,1919.1 1609,1918.9 1631,1918.2 1653,1917.0 1675,1915.3 1697,1913.3 1719,1911.3 1741,1909.6 1763,1908.3 1785,1907.5 1807,1907.2 1829,1907.4 1851,1908.0 1873,1909.0 1895,1909.7 1917,1910.3 1939,1910.8 1961,1910.9 1983,1910.5 2005,1909.2 2027,1907.5 2049,1905.3 2071,1902.9 2093,1900.3 2115,1898.0 2137,1896.1 2159,1894.8 2181,1894.0 2203,1893.7 2225,1893.7 2247,1893.9 2269,1894.2 2291,1894.8 2313,1895.4 2335,1895.8 2357,1895.8 2379,1895.1 2401,1894.0 2423,1892.3 2445,1890.2 2467,1887.9 2489,1885.7 2511,1883.8 2533,1882.4 2555,1881.5 2577,1881.3 2599,1881.8 2621,1882.7 2643,1883.9 2665,1885.0 2687,1885.9 2709,1886.2 2731,1886.1 2753,1885.5 2775,1884.4 2797,1882.9 2819,1880.9 2841,1878.7 2863,1876.6 2885,1874.8 2897,1873.8"/><polyline fill="none" stroke="#96525c" stroke-width="5.2" stroke-opacity="0.22" stroke-linejoin="round" points="1345,1921.0 1367,1919.8 1389,1919.2 1411,1919.0 1433,1919.3 1455,1920.1 1477,1921.2 1499,1922.4 1521,1923.6 1543,1924.5 1565,1925.1 1587,1925.3 1609,1925.0 1631,1924.4 1653,1923.2 1675,1921.5 1697,1919.5 1719,1917.5 1741,1915.8 1763,1914.5 1785,1913.6 1807,1913.3 1829,1913.6 1851,1914.2 1873,1915.1 1895,1915.8 1917,1916.5 1939,1917.0 1961,1917.1 1983,1916.7 2005,1915.4 2027,1913.7 2049,1911.5 2071,1909.1 2093,1906.5 2115,1904.2 2137,1902.3 2159,1900.9 2181,1900.1 2203,1899.8 2225,1899.9 2247,1900.1 2269,1900.4 2291,1900.9 2313,1901.6 2335,1902.0 2357,1901.9 2379,1901.3 2401,1900.2 2423,1898.5 2445,1896.4 2467,1894.1 2489,1891.9 2511,1890.0 2533,1888.6 2555,1887.7 2577,1887.5 2599,1888.0 2621,1888.9 2643,1890.1 2665,1891.2 2687,1892.1 2709,1892.4 2731,1892.3 2753,1891.6 2775,1890.6 2797,1889.1 2819,1887.1 2841,1884.9 2863,1882.8 2885,1880.9 2897,1880.0"/><polyline fill="none" stroke="#f4c0bf" stroke-width="6.5" stroke-opacity="0.24" stroke-linejoin="round" points="1345,1937.9 1367,1938.0 1389,1937.7 1411,1937.0 1433,1936.0 1455,1934.7 1477,1933.2 1499,1931.6 1521,1930.3 1543,1929.3 1565,1928.7 1587,1928.6 1609,1928.7 1631,1929.1 1653,1929.6 1675,1930.3 1697,1931.0 1719,1931.6 1741,1932.0 1763,1932.2 1785,1932.0 1807,1931.4 1829,1930.5 1851,1929.3 1873,1927.9 1895,1926.4 1917,1925.0 1939,1923.3 1961,1921.6 1983,1920.2 2005,1919.2 2027,1918.5 2049,1918.1 2071,1918.1 2093,1918.3 2115,1918.7 2137,1919.1 2159,1919.3 2181,1919.2 2203,1918.7 2225,1918.0 2247,1917.0 2269,1915.8 2291,1914.3 2313,1912.5 2335,1910.6 2357,1909.2 2379,1907.9 2401,1907.0 2423,1906.2 2445,1905.8 2467,1905.5 2489,1905.5 2511,1905.7 2533,1906.1 2555,1906.5 2577,1907.0 2599,1907.3 2621,1907.5 2643,1907.5 2665,1907.2 2687,1906.5 2709,1905.4 2731,1904.0 2753,1902.2 2775,1900.4 2797,1898.7 2819,1897.3 2841,1896.2 2863,1895.3 2885,1894.8 2897,1894.5"/><polyline fill="none" stroke="#96525c" stroke-width="5.2" stroke-opacity="0.20" stroke-linejoin="round" points="1345,1944.1 1367,1944.2 1389,1943.9 1411,1943.2 1433,1942.1 1455,1940.8 1477,1939.3 1499,1937.8 1521,1936.5 1543,1935.5 1565,1934.9 1587,1934.7 1609,1934.9 1631,1935.3 1653,1935.8 1675,1936.4 1697,1937.1 1719,1937.8 1741,1938.2 1763,1938.4 1785,1938.2 1807,1937.6 1829,1936.7 1851,1935.4 1873,1934.0 1895,1932.6 1917,1931.1 1939,1929.4 1961,1927.8 1983,1926.4 2005,1925.3 2027,1924.6 2049,1924.3 2071,1924.2 2093,1924.5 2115,1924.9 2137,1925.3 2159,1925.4 2181,1925.4 2203,1924.9 2225,1924.1 2247,1923.2 2269,1922.0 2291,1920.5 2313,1918.7 2335,1916.8 2357,1915.3 2379,1914.1 2401,1913.2 2423,1912.4 2445,1911.9 2467,1911.7 2489,1911.7 2511,1911.9 2533,1912.2 2555,1912.7 2577,1913.2 2599,1913.5 2621,1913.7 2643,1913.6 2665,1913.3 2687,1912.6 2709,1911.6 2731,1910.1 2753,1908.4 2775,1906.5 2797,1904.8 2819,1903.5 2841,1902.4 2863,1901.5 2885,1901.0 2897,1900.7"/><polyline fill="none" stroke="#f4c0bf" stroke-width="6.5" stroke-opacity="0.22" stroke-linejoin="round" points="1345,1953.2 1367,1952.4 1389,1952.8 1411,1954.2 1433,1955.9 1455,1956.9 1477,1956.8 1499,1955.5 1521,1953.3 1543,1951.2 1565,1949.9 1587,1949.9 1609,1951.0 1631,1952.5 1653,1953.9 1675,1954.4 1697,1953.6 1719,1951.6 1741,1949.2 1763,1947.3 1785,1946.3 1807,1946.7 1829,1947.9 1851,1949.3 1873,1950.2 1895,1949.8 1917,1948.2 1939,1945.8 1961,1943.2 1983,1941.5 2005,1941.1 2027,1941.8 2049,1943.1 2071,1944.0 2093,1943.9 2115,1942.6 2137,1940.2 2159,1937.5 2181,1935.3 2203,1934.3 2225,1934.7 2247,1936.0 2269,1937.2 2291,1937.6 2313,1936.6 2335,1934.6 2357,1932.1 2379,1930.1 2401,1929.2 2423,1929.6 2445,1931.0 2467,1932.6 2489,1933.5 2511,1933.1 2533,1931.5 2555,1929.1 2577,1926.6 2599,1925.1 2621,1924.7 2643,1925.6 2665,1927.2 2687,1928.6 2709,1929.0 2731,1927.9 2753,1925.8 2775,1923.1 2797,1920.9 2819,1920.0 2841,1920.4 2863,1921.8 2885,1923.1 2897,1923.3"/><polyline fill="none" stroke="#96525c" stroke-width="5.2" stroke-opacity="0.18" stroke-linejoin="round" points="1345,1959.4 1367,1958.6 1389,1959.0 1411,1960.4 1433,1962.1 1455,1963.1 1477,1963.0 1499,1961.6 1521,1959.5 1543,1957.4 1565,1956.1 1587,1956.1 1609,1957.1 1631,1958.7 1653,1960.1 1675,1960.6 1697,1959.8 1719,1957.8 1741,1955.4 1763,1953.4 1785,1952.5 1807,1952.8 1829,1954.1 1851,1955.5 1873,1956.3 1895,1956.0 1917,1954.4 1939,1952.0 1961,1949.4 1983,1947.7 2005,1947.3 2027,1948.0 2049,1949.2 2071,1950.2 2093,1950.1 2115,1948.7 2137,1946.3 2159,1943.6 2181,1941.4 2203,1940.5 2225,1940.9 2247,1942.2 2269,1943.4 2291,1943.8 2313,1942.8 2335,1940.8 2357,1938.3 2379,1936.3 2401,1935.4 2423,1935.8 2445,1937.2 2467,1938.7 2489,1939.7 2511,1939.3 2533,1937.7 2555,1935.2 2577,1932.8 2599,1931.2 2621,1930.9 2643,1931.8 2665,1933.4 2687,1934.8 2709,1935.1 2731,1934.1 2753,1931.9 2775,1929.3 2797,1927.1 2819,1926.1 2841,1926.6 2863,1927.9 2885,1929.3 2897,1929.5"/><polyline fill="none" stroke="#f4c0bf" stroke-width="6.5" stroke-opacity="0.19" stroke-linejoin="round" points="1345,1970.0 1367,1970.9 1389,1971.7 1411,1972.3 1433,1972.4 1455,1972.2 1477,1971.5 1499,1970.5 1521,1969.4 1543,1968.1 1565,1966.9 1587,1965.8 1609,1965.2 1631,1965.0 1653,1965.3 1675,1965.9 1697,1966.6 1719,1967.3 1741,1967.7 1763,1967.7 1785,1967.2 1807,1966.3 1829,1965.1 1851,1963.7 1873,1962.2 1895,1960.7 1917,1959.5 1939,1958.9 1961,1958.6 1983,1958.9 2005,1959.2 2027,1959.7 2049,1960.1 2071,1960.4 2093,1960.2 2115,1959.4 2137,1958.1 2159,1956.5 2181,1954.7 2203,1953.1 2225,1951.6 2247,1950.5 2269,1949.8 2291,1949.9 2313,1950.3 2335,1951.0 2357,1951.7 2379,1952.2 2401,1952.5 2423,1952.4 2445,1952.0 2467,1951.1 2489,1949.9 2511,1948.4 2533,1946.9 2555,1945.5 2577,1944.4 2599,1943.8 2621,1943.7 2643,1944.1 2665,1944.7 2687,1945.4 2709,1946.0 2731,1946.4 2753,1946.3 2775,1945.6 2797,1944.4 2819,1942.7 2841,1940.9 2863,1939.2 2885,1937.9 2897,1937.2"/><polyline fill="none" stroke="#96525c" stroke-width="5.2" stroke-opacity="0.16" stroke-linejoin="round" points="1345,1976.2 1367,1977.1 1389,1977.9 1411,1978.5 1433,1978.6 1455,1978.3 1477,1977.7 1499,1976.7 1521,1975.5 1543,1974.3 1565,1973.1 1587,1972.0 1609,1971.3 1631,1971.2 1653,1971.5 1675,1972.1 1697,1972.8 1719,1973.5 1741,1973.9 1763,1973.9 1785,1973.4 1807,1972.5 1829,1971.3 1851,1969.8 1873,1968.4 1895,1966.9 1917,1965.7 1939,1965.0 1961,1964.8 1983,1965.0 2005,1965.3 2027,1965.8 2049,1966.3 2071,1966.5 2093,1966.3 2115,1965.6 2137,1964.3 2159,1962.6 2181,1960.9 2203,1959.2 2225,1957.8 2247,1956.7 2269,1956.0 2291,1956.1 2313,1956.5 2335,1957.2 2357,1957.9 2379,1958.4 2401,1958.6 2423,1958.6 2445,1958.1 2467,1957.3 2489,1956.0 2511,1954.6 2533,1953.0 2555,1951.6 2577,1950.6 2599,1950.0 2621,1949.9 2643,1950.2 2665,1950.9 2687,1951.5 2709,1952.2 2731,1952.6 2753,1952.5 2775,1951.8 2797,1950.6 2819,1948.9 2841,1947.1 2863,1945.4 2885,1944.1 2897,1943.4"/><polyline fill="none" stroke="#f4c0bf" stroke-width="6.5" stroke-opacity="0.18" stroke-linejoin="round" points="1345,1990.4 1367,1987.1 1389,1984.5 1411,1983.7 1433,1984.9 1455,1987.4 1477,1990.3 1499,1992.2 1521,1992.2 1543,1990.3 1565,1987.0 1587,1983.7 1609,1981.7 1631,1981.5 1653,1983.1 1675,1985.8 1697,1988.2 1719,1989.3 1741,1988.5 1763,1985.8 1785,1982.3 1807,1979.2 1829,1977.6 1851,1977.9 1873,1979.8 1895,1982.4 1917,1984.6 1939,1985.2 1961,1983.9 1983,1981.0 2005,1977.5 2027,1974.5 2049,1973.1 2071,1973.6 2093,1975.7 2115,1978.1 2137,1979.7 2159,1979.6 2181,1977.8 2203,1974.5 2225,1970.9 2247,1968.3 2269,1967.8 2291,1969.1 2313,1971.7 2335,1974.5 2357,1976.0 2379,1975.6 2401,1973.3 2423,1969.8 2445,1966.5 2467,1964.6 2489,1964.6 2511,1966.4 2533,1969.1 2555,1971.6 2577,1972.5 2599,1971.5 2621,1968.7 2643,1965.1 2665,1961.9 2687,1960.3 2709,1960.6 2731,1962.7 2753,1965.6 2775,1967.8 2797,1968.4 2819,1966.9 2841,1963.7 2863,1959.9 2885,1956.9 2897,1955.9"/><polyline fill="none" stroke="#96525c" stroke-width="5.2" stroke-opacity="0.15" stroke-linejoin="round" points="1345,1996.6 1367,1993.3 1389,1990.7 1411,1989.9 1433,1991.0 1455,1993.6 1477,1996.4 1499,1998.4 1521,1998.4 1543,1996.5 1565,1993.2 1587,1989.9 1609,1987.8 1631,1987.6 1653,1989.3 1675,1991.9 1697,1994.4 1719,1995.5 1741,1994.7 1763,1992.0 1785,1988.5 1807,1985.4 1829,1983.7 1851,1984.1 1873,1985.9 1895,1988.6 1917,1990.8 1939,1991.4 1961,1990.1 1983,1987.2 2005,1983.7 2027,1980.7 2049,1979.3 2071,1979.8 2093,1981.8 2115,1984.2 2137,1985.8 2159,1985.8 2181,1983.9 2203,1980.7 2225,1977.1 2247,1974.5 2269,1973.9 2291,1975.3 2313,1977.9 2335,1980.6 2357,1982.2 2379,1981.8 2401,1979.4 2423,1976.0 2445,1972.7 2467,1970.8 2489,1970.8 2511,1972.6 2533,1975.3 2555,1977.7 2577,1978.7 2599,1977.6 2621,1974.9 2643,1971.3 2665,1968.1 2687,1966.4 2709,1966.8 2731,1968.9 2753,1971.8 2775,1974.0 2797,1974.6 2819,1973.1 2841,1969.9 2863,1966.1 2885,1963.1 2897,1962.1"/><polyline fill="none" stroke="#f4c0bf" stroke-width="6.5" stroke-opacity="0.18" stroke-linejoin="round" points="1345,2005.8 1367,2006.9 1389,2008.6 1411,2010.3 1433,2011.3 1455,2011.3 1477,2010.0 1499,2007.8 1521,2005.5 1543,2003.6 1565,2002.9 1587,2003.4 1609,2004.9 1631,2006.6 1653,2008.1 1675,2008.5 1697,2007.7 1719,2005.8 1741,2003.3 1763,2001.0 1785,1999.4 1807,1999.1 1829,1999.7 1851,2001.3 1873,2002.9 1895,2004.1 1917,2004.2 1939,2003.1 1961,2001.1 1983,1998.7 2005,1996.6 2027,1995.3 2049,1995.3 2071,1996.0 2093,1997.4 2115,1998.8 2137,1999.7 2159,1999.4 2181,1997.9 2203,1995.5 2225,1993.2 2247,1991.3 2269,1990.5 2291,1990.9 2313,1992.3 2335,1994.2 2357,1995.8 2379,1996.5 2401,1995.9 2423,1994.2 2445,1991.7 2467,1989.2 2489,1987.5 2511,1987.1 2533,1987.9 2555,1989.5 2577,1991.3 2599,1992.6 2621,1992.8 2643,1991.7 2665,1989.6 2687,1987.0 2709,1984.6 2731,1983.2 2753,1983.0 2775,1984.0 2797,1985.8 2819,1987.5 2841,1988.6 2863,1988.4 2885,1986.8 2897,1985.3"/><polyline fill="none" stroke="#96525c" stroke-width="5.2" stroke-opacity="0.15" stroke-linejoin="round" points="1345,2011.9 1367,2013.1 1389,2014.8 1411,2016.5 1433,2017.5 1455,2017.4 1477,2016.2 1499,2014.0 1521,2011.6 1543,2009.8 1565,2009.1 1587,2009.6 1609,2011.0 1631,2012.8 1653,2014.2 1675,2014.7 1697,2013.9 1719,2012.0 1741,2009.5 1763,2007.2 1785,2005.6 1807,2005.2 1829,2005.9 1851,2007.4 1873,2009.1 1895,2010.3 1917,2010.4 1939,2009.3 1961,2007.3 1983,2004.8 2005,2002.7 2027,2001.5 2049,2001.4 2071,2002.1 2093,2003.5 2115,2005.0 2137,2005.8 2159,2005.5 2181,2004.0 2203,2001.7 2225,1999.4 2247,1997.5 2269,1996.7 2291,1997.1 2313,1998.5 2335,2000.4 2357,2002.0 2379,2002.7 2401,2002.1 2423,2000.3 2445,1997.8 2467,1995.4 2489,1993.7 2511,1993.2 2533,1994.0 2555,1995.7 2577,1997.5 2599,1998.8 2621,1998.9 2643,1997.8 2665,1995.7 2687,1993.1 2709,1990.8 2731,1989.4 2753,1989.1 2775,1990.2 2797,1991.9 2819,1993.7 2841,1994.7 2863,1994.6 2885,1993.0 2897,1991.5"/><polyline fill="none" stroke="#f4c0bf" stroke-width="6.5" stroke-opacity="0.18" stroke-linejoin="round" points="1345,2030.1 1367,2030.7 1389,2029.9 1411,2027.9 1433,2025.2 1455,2022.4 1477,2020.2 1499,2019.2 1521,2019.8 1543,2021.5 1565,2023.9 1587,2026.2 1609,2027.6 1631,2027.7 1653,2026.4 1675,2023.9 1697,2020.8 1719,2017.9 1741,2015.9 1763,2015.3 1785,2016.0 1807,2017.8 1829,2020.2 1851,2022.3 1873,2023.4 1895,2023.3 1917,2021.8 1939,2019.2 1961,2016.2 1983,2013.5 2005,2011.7 2027,2011.3 2049,2012.3 2071,2014.4 2093,2016.9 2115,2018.8 2137,2019.7 2159,2019.1 2181,2017.4 2203,2014.7 2225,2011.8 2247,2009.3 2269,2008.0 2291,2008.0 2313,2009.4 2335,2011.7 2357,2014.2 2379,2016.1 2401,2016.9 2423,2016.1 2445,2014.1 2467,2011.1 2489,2008.0 2511,2005.5 2533,2004.4 2555,2004.8 2577,2006.5 2599,2008.9 2621,2011.3 2643,2012.9 2665,2013.1 2687,2011.9 2709,2009.4 2731,2006.3 2753,2003.3 2775,2001.1 2797,2000.2 2819,2000.8 2841,2002.7 2863,2005.1 2885,2007.4 2897,2008.0"/><polyline fill="none" stroke="#96525c" stroke-width="5.2" stroke-opacity="0.15" stroke-linejoin="round" points="1345,2036.3 1367,2036.9 1389,2036.1 1411,2034.1 1433,2031.3 1455,2028.5 1477,2026.3 1499,2025.4 1521,2026.0 1543,2027.7 1565,2030.1 1587,2032.4 1609,2033.8 1631,2033.9 1653,2032.6 1675,2030.0 1697,2026.9 1719,2024.1 1741,2022.1 1763,2021.5 1785,2022.2 1807,2024.0 1829,2026.4 1851,2028.5 1873,2029.6 1895,2029.5 1917,2027.9 1939,2025.4 1961,2022.4 1983,2019.6 2005,2017.9 2027,2017.5 2049,2018.5 2071,2020.6 2093,2023.1 2115,2025.0 2137,2025.8 2159,2025.3 2181,2023.6 2203,2020.9 2225,2017.9 2247,2015.5 2269,2014.1 2291,2014.2 2313,2015.6 2335,2017.9 2357,2020.4 2379,2022.3 2401,2023.0 2423,2022.3 2445,2020.3 2467,2017.3 2489,2014.2 2511,2011.7 2533,2010.6 2555,2011.0 2577,2012.6 2599,2015.1 2621,2017.4 2643,2019.0 2665,2019.3 2687,2018.0 2709,2015.6 2731,2012.5 2753,2009.5 2775,2007.3 2797,2006.4 2819,2007.0 2841,2008.9 2863,2011.3 2885,2013.5 2897,2014.2"/><polyline fill="none" stroke="#f4c0bf" stroke-width="6.5" stroke-opacity="0.18" stroke-linejoin="round" points="1345,2046.1 1367,2044.8 1389,2044.0 1411,2043.4 1433,2043.3 1455,2043.4 1477,2043.9 1499,2044.7 1521,2045.6 1543,2046.6 1565,2047.3 1587,2047.9 1609,2048.0 1631,2047.7 1653,2047.0 1675,2046.0 1697,2044.7 1719,2043.3 1741,2041.8 1763,2040.3 1785,2039.0 1807,2038.1 1829,2037.6 1851,2037.5 1873,2037.8 1895,2038.5 1917,2039.5 1939,2040.4 1961,2041.3 1983,2041.9 2005,2042.2 2027,2042.0 2049,2041.5 2071,2040.8 2093,2039.7 2115,2038.3 2137,2036.7 2159,2035.3 2181,2034.2 2203,2033.3 2225,2032.8 2247,2032.8 2269,2033.1 2291,2033.8 2313,2034.7 2335,2035.7 2357,2036.7 2379,2037.4 2401,2037.9 2423,2038.0 2445,2037.7 2467,2037.0 2489,2035.8 2511,2034.3 2533,2032.7 2555,2031.2 2577,2030.0 2599,2029.0 2621,2028.4 2643,2028.2 2665,2028.3 2687,2028.7 2709,2029.3 2731,2030.1 2753,2030.9 2775,2031.6 2797,2032.1 2819,2032.2 2841,2032.0 2863,2031.4 2885,2030.4 2897,2029.5"/><polyline fill="none" stroke="#96525c" stroke-width="5.2" stroke-opacity="0.15" stroke-linejoin="round" points="1345,2052.2 1367,2051.0 1389,2050.1 1411,2049.6 1433,2049.4 1455,2049.6 1477,2050.1 1499,2050.9 1521,2051.8 1543,2052.7 1565,2053.5 1587,2054.0 1609,2054.2 1631,2053.9 1653,2053.2 1675,2052.2 1697,2050.9 1719,2049.4 1741,2048.0 1763,2046.5 1785,2045.2 1807,2044.3 1829,2043.8 1851,2043.7 1873,2044.0 1895,2044.7 1917,2045.6 1939,2046.6 1961,2047.5 1983,2048.1 2005,2048.3 2027,2048.2 2049,2047.7 2071,2046.9 2093,2045.8 2115,2044.5 2137,2042.9 2159,2041.5 2181,2040.3 2203,2039.5 2225,2039.0 2247,2038.9 2269,2039.3 2291,2040.0 2313,2040.9 2335,2041.9 2357,2042.8 2379,2043.6 2401,2044.1 2423,2044.2 2445,2043.9 2467,2043.1 2489,2042.0 2511,2040.5 2533,2038.9 2555,2037.4 2577,2036.2 2599,2035.2 2621,2034.6 2643,2034.4 2665,2034.5 2687,2034.9 2709,2035.5 2731,2036.3 2753,2037.1 2775,2037.8 2797,2038.2 2819,2038.4 2841,2038.1 2863,2037.5 2885,2036.5 2897,2035.7"/><polyline fill="none" stroke="#f4c0bf" stroke-width="6.5" stroke-opacity="0.18" stroke-linejoin="round" points="1345,2061.6 1367,2063.7 1389,2066.8 1411,2069.9 1433,2071.9 1455,2072.1 1477,2070.3 1499,2067.1 1521,2063.3 1543,2060.3 1565,2058.9 1587,2059.4 1609,2061.7 1631,2064.8 1653,2067.6 1675,2069.1 1697,2068.7 1719,2066.3 1741,2062.7 1763,2059.0 1785,2056.4 1807,2055.5 1829,2056.7 1851,2059.4 1873,2062.6 1895,2065.2 1917,2066.1 1939,2065.1 1961,2062.2 1983,2058.5 2005,2055.1 2027,2053.1 2049,2053.0 2071,2054.8 2093,2057.8 2115,2061.2 2137,2063.6 2159,2064.2 2181,2062.7 2203,2059.6 2225,2056.0 2247,2052.9 2269,2051.4 2291,2051.9 2313,2054.1 2335,2057.3 2357,2060.3 2379,2062.1 2401,2061.9 2423,2059.9 2445,2056.5 2467,2052.9 2489,2050.2 2511,2049.2 2533,2050.1 2555,2052.5 2577,2055.6 2599,2058.3 2621,2059.5 2643,2058.8 2665,2056.3 2687,2052.7 2709,2049.2 2731,2046.8 2753,2046.2 2775,2047.6 2797,2050.3 2819,2053.4 2841,2055.6 2863,2056.2 2885,2054.9 2897,2053.4"/><polyline fill="none" stroke="#96525c" stroke-width="5.2" stroke-opacity="0.15" stroke-linejoin="round" points="1345,2067.8 1367,2069.8 1389,2073.0 1411,2076.1 1433,2078.1 1455,2078.3 1477,2076.5 1499,2073.2 1521,2069.5 1543,2066.5 1565,2065.1 1587,2065.6 1609,2067.8 1631,2070.9 1653,2073.8 1675,2075.3 1697,2074.9 1719,2072.4 1741,2068.9 1763,2065.2 1785,2062.5 1807,2061.7 1829,2062.8 1851,2065.5 1873,2068.8 1895,2071.3 1917,2072.3 1939,2071.2 1961,2068.4 1983,2064.7 2005,2061.3 2027,2059.3 2049,2059.1 2071,2060.9 2093,2064.0 2115,2067.4 2137,2069.8 2159,2070.4 2181,2068.9 2203,2065.8 2225,2062.2 2247,2059.1 2269,2057.6 2291,2058.1 2313,2060.3 2335,2063.5 2357,2066.5 2379,2068.3 2401,2068.1 2423,2066.1 2445,2062.7 2467,2059.1 2489,2056.4 2511,2055.3 2533,2056.2 2555,2058.7 2577,2061.8 2599,2064.5 2621,2065.7 2643,2065.0 2665,2062.5 2687,2058.9 2709,2055.4 2731,2053.0 2753,2052.4 2775,2053.7 2797,2056.5 2819,2059.5 2841,2061.8 2863,2062.4 2885,2061.0 2897,2059.6"/><polyline fill="none" stroke="#f4c0bf" stroke-width="6.5" stroke-opacity="0.18" stroke-linejoin="round" points="1345,2084.5 1367,2086.1 1389,2087.1 1411,2087.2 1433,2086.5 1455,2084.9 1477,2082.9 1499,2081.0 1521,2079.7 1543,2079.1 1565,2079.5 1587,2080.7 1609,2082.1 1631,2083.5 1653,2084.2 1675,2084.1 1697,2082.9 1719,2081.1 1741,2079.0 1763,2077.2 1785,2076.1 1807,2075.9 1829,2076.6 1851,2078.0 1873,2079.6 1895,2080.8 1917,2081.2 1939,2080.7 1961,2079.3 1983,2077.4 2005,2075.5 2027,2074.0 2049,2073.3 2071,2073.5 2093,2074.7 2115,2076.4 2137,2078.1 2159,2079.4 2181,2079.8 2203,2079.1 2225,2077.6 2247,2075.7 2269,2073.9 2291,2072.6 2313,2072.1 2335,2072.6 2357,2073.9 2379,2075.4 2401,2076.9 2423,2077.7 2445,2077.6 2467,2076.7 2489,2075.0 2511,2073.0 2533,2071.3 2555,2070.1 2577,2069.8 2599,2070.4 2621,2071.7 2643,2073.3 2665,2074.6 2687,2075.2 2709,2074.8 2731,2073.5 2753,2071.5 2775,2069.4 2797,2067.7 2819,2066.7 2841,2066.7 2863,2067.6 2885,2069.0 2897,2069.7"/><polyline fill="none" stroke="#96525c" stroke-width="5.2" stroke-opacity="0.15" stroke-linejoin="round" points="1345,2090.7 1367,2092.3 1389,2093.2 1411,2093.4 1433,2092.6 1455,2091.1 1477,2089.1 1499,2087.2 1521,2085.8 1543,2085.3 1565,2085.7 1587,2086.8 1609,2088.3 1631,2089.6 1653,2090.4 1675,2090.2 1697,2089.1 1719,2087.3 1741,2085.2 1763,2083.4 1785,2082.3 1807,2082.1 1829,2082.8 1851,2084.2 1873,2085.7 1895,2086.9 1917,2087.4 1939,2086.9 1961,2085.5 1983,2083.6 2005,2081.7 2027,2080.2 2049,2079.5 2071,2079.7 2093,2080.9 2115,2082.6 2137,2084.3 2159,2085.6 2181,2086.0 2203,2085.3 2225,2083.8 2247,2081.9 2269,2080.1 2291,2078.8 2313,2078.3 2335,2078.8 2357,2080.0 2379,2081.6 2401,2083.0 2423,2083.9 2445,2083.8 2467,2082.8 2489,2081.2 2511,2079.2 2533,2077.4 2555,2076.3 2577,2075.9 2599,2076.5 2621,2077.8 2643,2079.4 2665,2080.7 2687,2081.3 2709,2081.0 2731,2079.7 2753,2077.7 2775,2075.6 2797,2073.9 2819,2072.9 2841,2072.9 2863,2073.7 2885,2075.1 2897,2075.8"/><polyline fill="none" stroke="#f4c0bf" stroke-width="6.5" stroke-opacity="0.18" stroke-linejoin="round" points="1345,2097.3 1367,2095.9 1389,2095.8 1411,2096.9 1433,2098.9 1455,2101.1 1477,2102.7 1499,2103.0 1521,2102.1 1543,2099.9 1565,2097.3 1587,2094.8 1609,2093.3 1631,2093.1 1653,2094.1 1675,2096.0 1697,2098.2 1719,2099.8 1741,2100.2 1763,2099.4 1785,2097.4 1807,2094.8 1829,2092.4 1851,2090.8 1873,2090.5 1895,2091.4 1917,2093.3 1939,2095.5 1961,2097.3 1983,2097.9 2005,2097.3 2027,2095.4 2049,2093.0 2071,2090.7 2093,2089.3 2115,2089.1 2137,2090.3 2159,2092.4 2181,2094.8 2203,2096.8 2225,2097.7 2247,2097.0 2269,2095.2 2291,2092.7 2313,2090.2 2335,2088.5 2357,2088.1 2379,2089.1 2401,2091.0 2423,2093.3 2445,2095.1 2467,2095.9 2489,2095.4 2511,2093.6 2533,2091.1 2555,2088.6 2577,2086.8 2599,2086.2 2621,2086.9 2643,2088.6 2665,2090.8 2687,2092.7 2709,2093.6 2731,2093.2 2753,2091.4 2775,2088.9 2797,2086.2 2819,2084.3 2841,2083.5 2863,2084.1 2885,2085.9 2897,2086.9"/><polyline fill="none" stroke="#96525c" stroke-width="5.2" stroke-opacity="0.15" stroke-linejoin="round" points="1345,2103.5 1367,2102.0 1389,2101.9 1411,2103.1 1433,2105.1 1455,2107.3 1477,2108.8 1499,2109.2 1521,2108.2 1543,2106.1 1565,2103.4 1587,2101.0 1609,2099.5 1631,2099.3 1653,2100.3 1675,2102.2 1697,2104.4 1719,2105.9 1741,2106.4 1763,2105.5 1785,2103.6 1807,2101.0 1829,2098.5 1851,2097.0 1873,2096.6 1895,2097.6 1917,2099.5 1939,2101.7 1961,2103.4 1983,2104.1 2005,2103.4 2027,2101.6 2049,2099.2 2071,2096.9 2093,2095.5 2115,2095.3 2137,2096.4 2159,2098.6 2181,2101.0 2203,2103.0 2225,2103.8 2247,2103.2 2269,2101.4 2291,2098.8 2313,2096.4 2335,2094.7 2357,2094.3 2379,2095.2 2401,2097.2 2423,2099.5 2445,2101.3 2467,2102.1 2489,2101.5 2511,2099.7 2533,2097.2 2555,2094.7 2577,2092.9 2599,2092.3 2621,2093.1 2643,2094.8 2665,2097.0 2687,2098.9 2709,2099.8 2731,2099.4 2753,2097.6 2775,2095.0 2797,2092.4 2819,2090.4 2841,2089.7 2863,2090.3 2885,2092.0 2897,2093.0"/><polyline fill="none" stroke="#f4c0bf" stroke-width="6.5" stroke-opacity="0.18" stroke-linejoin="round" points="1345,2119.6 1367,2118.3 1389,2117.0 1411,2116.0 1433,2115.2 1455,2114.9 1477,2114.9 1499,2115.3 1521,2116.0 1543,2116.9 1565,2117.9 1587,2118.9 1609,2119.7 1631,2120.2 1653,2120.4 1675,2120.2 1697,2119.6 1719,2118.7 1741,2117.5 1763,2116.2 1785,2114.8 1807,2113.5 1829,2112.3 1851,2111.3 1873,2110.8 1895,2110.7 1917,2111.0 1939,2111.6 1961,2112.5 1983,2113.6 2005,2114.8 2027,2115.9 2049,2116.9 2071,2117.5 2093,2117.7 2115,2117.6 2137,2117.0 2159,2116.2 2181,2115.1 2203,2113.9 2225,2112.7 2247,2111.6 2269,2110.8 2291,2110.1 2313,2109.8 2335,2109.9 2357,2110.4 2379,2111.1 2401,2112.1 2423,2113.2 2445,2114.3 2467,2115.2 2489,2115.8 2511,2116.1 2533,2116.0 2555,2115.5 2577,2114.7 2599,2113.5 2621,2112.2 2643,2110.7 2665,2109.3 2687,2108.1 2709,2107.2 2731,2106.7 2753,2106.6 2775,2106.9 2797,2107.5 2819,2108.3 2841,2109.2 2863,2110.1 2885,2111.0 2897,2111.2"/><polyline fill="none" stroke="#96525c" stroke-width="5.2" stroke-opacity="0.15" stroke-linejoin="round" points="1345,2125.8 1367,2124.5 1389,2123.2 1411,2122.2 1433,2121.4 1455,2121.1 1477,2121.1 1499,2121.4 1521,2122.1 1543,2123.1 1565,2124.1 1587,2125.1 1609,2125.9 1631,2126.4 1653,2126.6 1675,2126.4 1697,2125.8 1719,2124.9 1741,2123.7 1763,2122.4 1785,2121.0 1807,2119.6 1829,2118.5 1851,2117.5 1873,2116.9 1895,2116.8 1917,2117.1 1939,2117.8 1961,2118.7 1983,2119.8 2005,2121.0 2027,2122.1 2049,2123.0 2071,2123.6 2093,2123.9 2115,2123.7 2137,2123.2 2159,2122.4 2181,2121.3 2203,2120.1 2225,2118.9 2247,2117.8 2269,2116.9 2291,2116.3 2313,2116.0 2335,2116.1 2357,2116.5 2379,2117.3 2401,2118.3 2423,2119.4 2445,2120.4 2467,2121.3 2489,2122.0 2511,2122.3 2533,2122.2 2555,2121.7 2577,2120.8 2599,2119.7 2621,2118.4 2643,2116.9 2665,2115.5 2687,2114.2 2709,2113.3 2731,2112.8 2753,2112.8 2775,2113.0 2797,2113.6 2819,2114.4 2841,2115.3 2863,2116.3 2885,2117.1 2897,2117.4"/></g></g><polyline fill="none" stroke="#c66a72" stroke-width="2.400" stroke-linejoin="round" points="1345.2,1656.0 1414.6,1647.0 1489.0,1641.0 1563.8,1644.0 1657.0,1639.0 1694.3,1652.6 1728.0,1662.0 1750.0,1649.0 1780.0,1628.0 1813.7,1621.0 1862.0,1634.0 1907.0,1649.0 1974.0,1636.0 2030.0,1624.6 2063.6,1608.0 2102.0,1614.0 2129.8,1619.0 2167.0,1634.0 2212.0,1619.0 2238.0,1602.0 2256.7,1611.6 2323.8,1598.5 2379.7,1585.5 2435.7,1577.0 2473.0,1591.0 2521.5,1587.0 2529.0,1568.7 2566.2,1570.5 2622.2,1565.0 2678.0,1580.0 2715.4,1576.0 2764.0,1559.0 2778.8,1546.0 2808.7,1555.6 2834.8,1580.0 2896.8,1578.0"/><g clip-path="url(#cpTop)"><rect x="1345.2" y="334.0" width="1551.6" height="1714.2" filter="url(#fStreakW)" opacity=".05"/><rect x="1345.2" y="334.0" width="1551.6" height="1714.2" filter="url(#fStreakB)" opacity=".05"/></g><g clip-path="url(#cpRed)"><rect x="1345.2" y="1540" width="1551.6" height="510" filter="url(#fRedW)" opacity=".2"/><rect x="1345.2" y="1540" width="1551.6" height="510" filter="url(#fRedB)" opacity=".16"/></g></g></svg>
</body></html>
